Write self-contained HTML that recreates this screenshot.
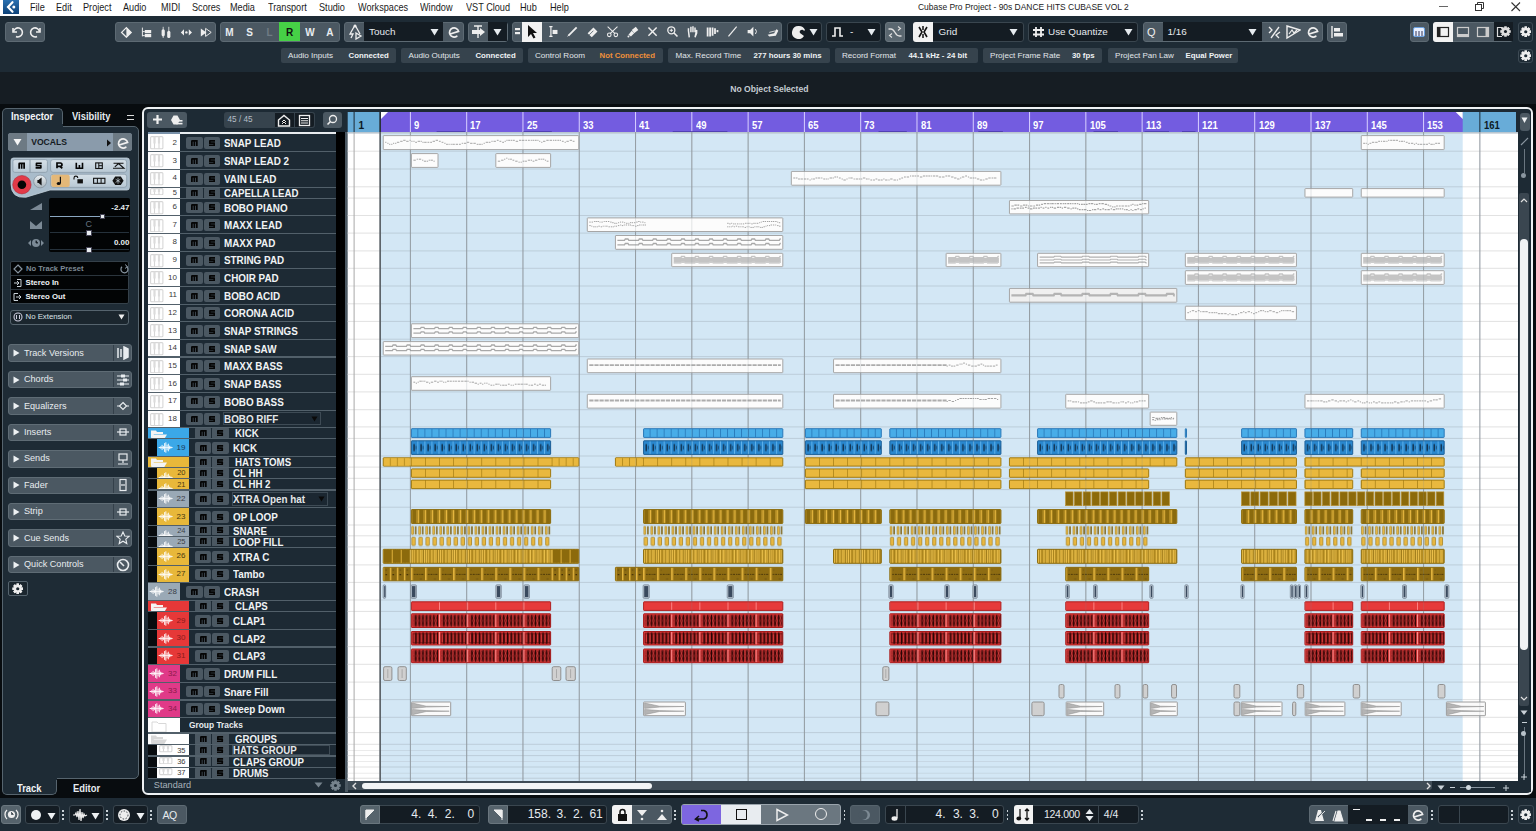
<!DOCTYPE html>
<html><head><meta charset="utf-8"><style>
html,body{margin:0;padding:0}
body{width:1536px;height:831px;overflow:hidden;position:relative;background:#080c0f;font-family:"Liberation Sans",sans-serif}
body div{position:absolute;box-sizing:border-box}
</style></head><body>
<div style="left:0.00px;top:0.00px;width:1536.00px;height:16.00px;background:#fff"></div>
<div style="left:3.00px;top:0.00px;width:15.50px;height:14.00px;background:linear-gradient(#2a70b0,#0e4278)"></div>
<svg style="position:absolute;left:3.00px;top:0.00px;" width="16.00" height="14.00" viewBox="0 0 16 14"><path d="M9.5 2.2 L5 7 L9.5 11.8" stroke="#fff" stroke-width="2.2" fill="none" stroke-linecap="round"/><circle cx="10.8" cy="7" r="1.5" fill="#fff"/></svg>
<div style="left:30.00px;top:1.70px;font-size:10.5px;line-height:1;color:#1a1a1a;white-space:pre;transform:scaleX(0.87);transform-origin:0 0">File</div>
<div style="left:56.00px;top:1.70px;font-size:10.5px;line-height:1;color:#1a1a1a;white-space:pre;transform:scaleX(0.87);transform-origin:0 0">Edit</div>
<div style="left:83.00px;top:1.70px;font-size:10.5px;line-height:1;color:#1a1a1a;white-space:pre;transform:scaleX(0.87);transform-origin:0 0">Project</div>
<div style="left:123.00px;top:1.70px;font-size:10.5px;line-height:1;color:#1a1a1a;white-space:pre;transform:scaleX(0.87);transform-origin:0 0">Audio</div>
<div style="left:160.50px;top:1.70px;font-size:10.5px;line-height:1;color:#1a1a1a;white-space:pre;transform:scaleX(0.87);transform-origin:0 0">MIDI</div>
<div style="left:191.50px;top:1.70px;font-size:10.5px;line-height:1;color:#1a1a1a;white-space:pre;transform:scaleX(0.87);transform-origin:0 0">Scores</div>
<div style="left:230.00px;top:1.70px;font-size:10.5px;line-height:1;color:#1a1a1a;white-space:pre;transform:scaleX(0.87);transform-origin:0 0">Media</div>
<div style="left:268.00px;top:1.70px;font-size:10.5px;line-height:1;color:#1a1a1a;white-space:pre;transform:scaleX(0.87);transform-origin:0 0">Transport</div>
<div style="left:318.50px;top:1.70px;font-size:10.5px;line-height:1;color:#1a1a1a;white-space:pre;transform:scaleX(0.87);transform-origin:0 0">Studio</div>
<div style="left:357.50px;top:1.70px;font-size:10.5px;line-height:1;color:#1a1a1a;white-space:pre;transform:scaleX(0.87);transform-origin:0 0">Workspaces</div>
<div style="left:419.50px;top:1.70px;font-size:10.5px;line-height:1;color:#1a1a1a;white-space:pre;transform:scaleX(0.87);transform-origin:0 0">Window</div>
<div style="left:465.50px;top:1.70px;font-size:10.5px;line-height:1;color:#1a1a1a;white-space:pre;transform:scaleX(0.87);transform-origin:0 0">VST Cloud</div>
<div style="left:520.00px;top:1.70px;font-size:10.5px;line-height:1;color:#1a1a1a;white-space:pre;transform:scaleX(0.87);transform-origin:0 0">Hub</div>
<div style="left:549.50px;top:1.70px;font-size:10.5px;line-height:1;color:#1a1a1a;white-space:pre;transform:scaleX(0.87);transform-origin:0 0">Help</div>
<div style="left:917.50px;top:2.30px;font-size:9.4px;line-height:1;color:#1a1a1a;white-space:pre;transform:scaleX(0.9);transform-origin:0 0">Cubase Pro Project - 90s DANCE HITS CUBASE VOL 2</div>
<div style="left:1439.00px;top:5.50px;width:8.50px;height:1.20px;background:#666"></div>
<svg style="position:absolute;left:1474.00px;top:1.00px;" width="11.00" height="11.00" viewBox="0 0 11 11"><rect x="1.5" y="3.5" width="6" height="6" fill="none" stroke="#333"/><path d="M3.5 3.5 V1.5 H9.5 V7.5 H7.5" fill="none" stroke="#333"/></svg>
<svg style="position:absolute;left:1510.00px;top:1.00px;" width="12.00" height="12.00" viewBox="0 0 12 12"><path d="M1.5 1.5 L10 10 M10 1.5 L1.5 10" stroke="#333" stroke-width="1.1"/></svg>
<div style="left:0.00px;top:16.00px;width:1536.00px;height:56.20px;background:#1e2b35"></div>
<div style="left:0.00px;top:72.20px;width:1536.00px;height:31.80px;background:#161d23"></div>
<div style="left:0.00px;top:104.00px;width:1536.00px;height:694.00px;background:#080c0f"></div>
<div style="left:0.00px;top:797.80px;width:1536.00px;height:33.20px;background:#1e2b35"></div>
<div style="left:730.20px;top:85.30px;font-size:8.6px;line-height:1;color:#c5ccd2;font-weight:bold;white-space:pre;">No Object Selected</div>
<div style="left:5.00px;top:21.80px;width:39.80px;height:19.90px;background:#4b5862;border-radius:3px;box-sizing:border-box;border:1px solid #5d6a73"></div>
<svg style="position:absolute;left:10.00px;top:25.00px;" width="14.00" height="14.00" viewBox="0 0 14 14"><path d="M3 3 V7 H7" stroke="#eee" stroke-width="1.6" fill="none"/><path d="M3.5 6.5 A4.5 4.5 0 1 1 6 11.5" stroke="#eee" stroke-width="1.6" fill="none"/></svg>
<svg style="position:absolute;left:29.00px;top:25.00px;" width="14.00" height="14.00" viewBox="0 0 14 14"><path d="M11 3 V7 H7" stroke="#eee" stroke-width="1.6" fill="none"/><path d="M10.5 6.5 A4.5 4.5 0 1 0 8 11.5" stroke="#eee" stroke-width="1.6" fill="none"/></svg>
<div style="left:115.20px;top:21.80px;width:100.40px;height:19.90px;background:#4b5862;border-radius:3px;box-sizing:border-box;border:1px solid #5d6a73"></div>
<svg style="position:absolute;left:120.00px;top:25.50px;" width="12.80" height="12.80" viewBox="0 0 16 16"><path d="M8 2 L14 8 L8 14 L2 8 Z" stroke="#eee" stroke-width="1.6" fill="none"/><path d="M8 2 L14 8 L8 14 Z" fill="#eee"/></svg>
<svg style="position:absolute;left:140.00px;top:25.50px;" width="12.80" height="12.80" viewBox="0 0 16 16"><path d="M3 2 V13 M3 7 H6 M3 12 H6" stroke="#eee" stroke-width="1.2"/><rect x="6" y="5" width="8" height="4" fill="#eee"/><rect x="6" y="10" width="8" height="4" fill="#eee"/></svg>
<svg style="position:absolute;left:160.00px;top:25.50px;" width="12.80" height="12.80" viewBox="0 0 16 16"><rect x="2" y="4" width="4" height="9" rx="2" fill="#eee"/><rect x="9" y="6" width="4" height="9" rx="2" fill="#eee"/><path d="M4 1 V15 M11 1 V15" stroke="#eee" stroke-width="1"/></svg>
<svg style="position:absolute;left:180.00px;top:25.50px;" width="12.80" height="12.80" viewBox="0 0 16 16"><path d="M1 8 L5 4 V12 Z M15 8 L11 4 V12 Z" fill="#eee"/><circle cx="8" cy="8" r="1.5" fill="#eee"/></svg>
<svg style="position:absolute;left:199.50px;top:25.50px;" width="12.80" height="12.80" viewBox="0 0 16 16"><path d="M1 3 L8 8 L1 13 Z" fill="#eee"/><path d="M7 3 L14 8 L7 13 Z" stroke="#eee" stroke-width="1.2" fill="none"/></svg>
<div style="left:219.50px;top:21.80px;width:120.20px;height:19.90px;background:#4b5862;border-radius:3px;box-sizing:border-box;border:1px solid #5d6a73"></div>
<div style="left:279.40px;top:22.30px;width:20.30px;height:19.00px;background:#46d046"></div>
<div style="left:225.00px;top:27.50px;font-size:10px;line-height:1;color:#e8edf0;font-weight:bold;white-space:pre;width:9px;text-align:center">M</div>
<div style="left:245.05px;top:27.50px;font-size:10px;line-height:1;color:#e8edf0;font-weight:bold;white-space:pre;width:9px;text-align:center">S</div>
<div style="left:265.10px;top:27.50px;font-size:10px;line-height:1;color:#6f7b84;font-weight:bold;white-space:pre;width:9px;text-align:center">L</div>
<div style="left:285.15px;top:27.50px;font-size:10px;line-height:1;color:#111;font-weight:bold;white-space:pre;width:9px;text-align:center">R</div>
<div style="left:305.20px;top:27.50px;font-size:10px;line-height:1;color:#e8edf0;font-weight:bold;white-space:pre;width:9px;text-align:center">W</div>
<div style="left:325.25px;top:27.50px;font-size:10px;line-height:1;color:#e8edf0;font-weight:bold;white-space:pre;width:9px;text-align:center">A</div>
<div style="left:343.70px;top:21.80px;width:119.90px;height:19.90px;background:#4b5862;border-radius:3px;box-sizing:border-box;border:1px solid #5d6a73"></div>
<div style="left:364.00px;top:22.30px;width:79.00px;height:19.00px;background:#141c23"></div>
<svg style="position:absolute;left:347.00px;top:24.00px;" width="16.00" height="16.00" viewBox="0 0 16 16"><path d="M8 1 L3 10 H6 L4 14 M8 1 L13 10 M9 9 L14 12 L9 15 Z" stroke="#eee" stroke-width="1.3" fill="none"/><circle cx="8" cy="2" r="1.5" fill="#eee"/></svg>
<div style="left:369.10px;top:27.00px;font-size:9.9px;line-height:1;color:#e6ebef;white-space:pre;">Touch</div>
<svg style="position:absolute;left:430.00px;top:28.00px;" width="9.00" height="8.00" viewBox="0 0 9 8"><path d="M0.5 1 H8.5 L4.5 7.5 Z" fill="#e6ebef"/></svg>
<svg style="position:absolute;left:446.00px;top:24.00px;" width="16.00" height="16.00" viewBox="0 0 16 16"><path d="M4.2 10 L12.6 7.4 A4.6 4.6 0 1 0 10.8 12.2" stroke="#eee" stroke-width="1.7" fill="none" stroke-linecap="round"/></svg>
<div style="left:468.10px;top:21.80px;width:39.50px;height:19.90px;background:#4b5862;border-radius:3px;box-sizing:border-box;border:1px solid #5d6a73"></div>
<div style="left:488.00px;top:22.30px;width:19.00px;height:19.00px;background:#141c23"></div>
<svg style="position:absolute;left:470.00px;top:24.00px;" width="16.00" height="16.00" viewBox="0 0 16 16"><path d="M8 2 V14 M4 2 H12" stroke="#eee" stroke-width="1.4"/><rect x="2" y="6" width="8" height="4" fill="#eee"/><path d="M10 4 L15 8 L10 12 Z" fill="#eee"/></svg>
<svg style="position:absolute;left:493.00px;top:28.00px;" width="9.00" height="8.00" viewBox="0 0 9 8"><path d="M0.5 1 H8.5 L4.5 7.5 Z" fill="#e6ebef"/></svg>
<div style="left:512.10px;top:21.80px;width:270.40px;height:19.90px;background:#4b5862;border-radius:3px;box-sizing:border-box;border:1px solid #5d6a73"></div>
<div style="left:522.30px;top:22.30px;width:20.00px;height:19.40px;background:#f2f2f2"></div>
<svg style="position:absolute;left:514.00px;top:27.00px;" width="8.00" height="9.00" viewBox="0 0 8 9"><rect x="1" y="1" width="5" height="2.2" fill="#eee"/><rect x="1" y="5" width="5" height="2.2" fill="#eee"/></svg>
<svg style="position:absolute;left:526.00px;top:24.00px;" width="12.00" height="16.00" viewBox="0 0 12 16"><path d="M2 1 L2 13 L5 10 L7.5 14.5 L9.5 13.5 L7 9 L11 9 Z" fill="#111"/></svg>
<svg style="position:absolute;left:545.50px;top:25.20px;" width="13.12" height="13.12" viewBox="0 0 16 16"><path d="M4 2 H8 M6 2 V14 M4 14 H8" stroke="#eee" stroke-width="1.5"/><rect x="8" y="6" width="6" height="5" fill="#eee"/></svg>
<svg style="position:absolute;left:565.55px;top:25.20px;" width="13.12" height="13.12" viewBox="0 0 16 16"><path d="M3 13 L13 3" stroke="#eee" stroke-width="2.2"/><path d="M2 14 L3.5 12" stroke="#eee" stroke-width="1"/></svg>
<svg style="position:absolute;left:585.60px;top:25.20px;" width="13.12" height="13.12" viewBox="0 0 16 16"><path d="M2 10 L9 3 L14 8 L7 15 Z" fill="#eee"/><path d="M4 12 L9 7" stroke="#4b5862" stroke-width="1"/></svg>
<svg style="position:absolute;left:605.65px;top:25.20px;" width="13.12" height="13.12" viewBox="0 0 16 16"><circle cx="4" cy="12" r="2.2" stroke="#eee" stroke-width="1.3" fill="none"/><circle cx="12" cy="12" r="2.2" stroke="#eee" stroke-width="1.3" fill="none"/><path d="M2 2 L11 10.5 M14 2 L5 10.5" stroke="#eee" stroke-width="1.3"/></svg>
<svg style="position:absolute;left:625.70px;top:25.20px;" width="13.12" height="13.12" viewBox="0 0 16 16"><path d="M7 6 L12 2 L15 6 L10 10 Z" fill="#eee"/><path d="M3 12 L7 7 L10 10 L6 14 Z" fill="#eee"/><circle cx="3" cy="14" r="1.2" fill="#eee"/></svg>
<svg style="position:absolute;left:645.75px;top:25.20px;" width="13.12" height="13.12" viewBox="0 0 16 16"><path d="M3 3 L13 13 M13 3 L3 13" stroke="#eee" stroke-width="1.8"/></svg>
<svg style="position:absolute;left:665.80px;top:25.20px;" width="13.12" height="13.12" viewBox="0 0 16 16"><circle cx="6.5" cy="6.5" r="4.3" stroke="#eee" stroke-width="1.6" fill="none"/><path d="M9.5 9.5 L14 14" stroke="#eee" stroke-width="2"/><path d="M6.5 4.5 V8.5 M4.5 6.5 H8.5" stroke="#eee" stroke-width="1.2"/></svg>
<svg style="position:absolute;left:685.85px;top:25.20px;" width="13.12" height="13.12" viewBox="0 0 16 16"><path d="M4 15 L3 7 V4 M6 9 V2 M8.5 9 V1.5 M11 9 V3 M13 10 V6 L11 15 Z" stroke="#eee" stroke-width="1.8" fill="#eee"/></svg>
<svg style="position:absolute;left:705.90px;top:25.20px;" width="13.12" height="13.12" viewBox="0 0 16 16"><path d="M2 3 V14 M5 3 V14 M8 3 V13 M11 4 V11 M14 6 V9" stroke="#eee" stroke-width="2.2"/></svg>
<svg style="position:absolute;left:725.95px;top:25.20px;" width="13.12" height="13.12" viewBox="0 0 16 16"><path d="M3 14 L13 2" stroke="#eee" stroke-width="1.5"/></svg>
<svg style="position:absolute;left:746.00px;top:25.20px;" width="13.12" height="13.12" viewBox="0 0 16 16"><path d="M2 6 H5 L9 2 V14 L5 10 H2 Z" fill="#eee"/><path d="M11.5 5 Q14 8 11.5 11" stroke="#eee" stroke-width="1.2" fill="none"/></svg>
<svg style="position:absolute;left:766.05px;top:25.20px;" width="13.12" height="13.12" viewBox="0 0 16 16"><path d="M2 12 L10 10 L13 5 L15 7 L12 13 L4 14 Z" fill="#eee"/><path d="M4 9 L12 7" stroke="#eee" stroke-width="1"/></svg>
<div style="left:787.20px;top:21.80px;width:34.40px;height:19.90px;background:#141c23;border-radius:3px;box-sizing:border-box;border:1px solid #3a464f"></div>
<svg style="position:absolute;left:791.00px;top:25.00px;" width="16.00" height="14.00" viewBox="0 0 16 14"><path d="M8 1 A6.5 6.5 0 1 0 13 11 L9 8 A2 2 0 1 1 13 6 L14 5 A6.5 6.5 0 0 0 8 1 Z" fill="#eee"/></svg>
<svg style="position:absolute;left:809.00px;top:28.00px;" width="9.00" height="8.00" viewBox="0 0 9 8"><path d="M0.5 1 H8.5 L4.5 7.5 Z" fill="#e6ebef"/></svg>
<div style="left:826.40px;top:21.80px;width:54.50px;height:19.90px;background:#141c23;border-radius:3px;box-sizing:border-box;border:1px solid #3a464f"></div>
<svg style="position:absolute;left:831.00px;top:25.00px;" width="14.00" height="14.00" viewBox="0 0 14 14"><path d="M1 11 H4 V3 H9 V11 H12" stroke="#eee" stroke-width="1.6" fill="none"/></svg>
<div style="left:850.00px;top:27.00px;font-size:10px;line-height:1;color:#ddd;white-space:pre;">-</div>
<svg style="position:absolute;left:867.00px;top:28.00px;" width="9.00" height="8.00" viewBox="0 0 9 8"><path d="M0.5 1 H8.5 L4.5 7.5 Z" fill="#e6ebef"/></svg>
<div style="left:885.30px;top:21.80px;width:20.20px;height:19.90px;background:#5a6770;border-radius:3px;box-sizing:border-box;border:1px solid #6a767e"></div>
<svg style="position:absolute;left:887.00px;top:24.00px;" width="16.00" height="16.00" viewBox="0 0 16 16"><path d="M1.5 5 H4 Q6 5 8 8.5 Q10 12 12.5 12 H14.5" stroke="#e0e0e0" stroke-width="1.4" fill="none"/><path d="M5 9.5 L2.5 11.5 L5 13.5 M11 2.5 L13.5 4.5 L11 6.5" stroke="#e0e0e0" stroke-width="1.1" fill="none"/></svg>
<div style="left:913.40px;top:21.80px;width:110.20px;height:19.90px;background:#141c23;border-radius:3px;box-sizing:border-box;border:1px solid #3a464f"></div>
<div style="left:913.40px;top:21.80px;width:20.00px;height:19.90px;background:#f2f2f2;border-radius:3px 0 0 3px"></div>
<svg style="position:absolute;left:915.00px;top:24.00px;" width="16.00" height="16.00" viewBox="0 0 16 16"><path d="M4 3 L7 8 L4 13 M12 3 L9 8 L12 13" stroke="#111" stroke-width="1.6" fill="none"/><path d="M8 2 V6 M8 10 V14" stroke="#111" stroke-width="1.5"/></svg>
<div style="left:938.50px;top:27.00px;font-size:9.9px;line-height:1;color:#e6ebef;white-space:pre;">Grid</div>
<svg style="position:absolute;left:1009.00px;top:28.00px;" width="9.00" height="8.00" viewBox="0 0 9 8"><path d="M0.5 1 H8.5 L4.5 7.5 Z" fill="#e6ebef"/></svg>
<div style="left:1028.20px;top:21.80px;width:109.90px;height:19.90px;background:#141c23;border-radius:3px;box-sizing:border-box;border:1px solid #3a464f"></div>
<svg style="position:absolute;left:1032.00px;top:25.00px;" width="14.00" height="14.00" viewBox="0 0 14 14"><path d="M4 2 V12 M9 2 V12 M1 5 H12 M1 9.5 H12" stroke="#eee" stroke-width="1.8"/></svg>
<div style="left:1048.00px;top:27.00px;font-size:9.9px;line-height:1;color:#e6ebef;white-space:pre;">Use Quantize</div>
<svg style="position:absolute;left:1124.00px;top:28.00px;" width="9.00" height="8.00" viewBox="0 0 9 8"><path d="M0.5 1 H8.5 L4.5 7.5 Z" fill="#e6ebef"/></svg>
<div style="left:1142.70px;top:21.80px;width:179.90px;height:19.90px;background:#4b5862;border-radius:3px;box-sizing:border-box;border:1px solid #5d6a73"></div>
<div style="left:1163.00px;top:22.30px;width:99.00px;height:19.00px;background:#141c23"></div>
<div style="left:1147.00px;top:26.50px;font-size:11px;line-height:1;color:#eee;white-space:pre;">Q</div>
<div style="left:1167.50px;top:27.00px;font-size:9.9px;line-height:1;color:#e6ebef;white-space:pre;">1/16</div>
<svg style="position:absolute;left:1248.00px;top:28.00px;" width="9.00" height="8.00" viewBox="0 0 9 8"><path d="M0.5 1 H8.5 L4.5 7.5 Z" fill="#e6ebef"/></svg>
<svg style="position:absolute;left:1266.00px;top:24.00px;" width="16.00" height="16.00" viewBox="0 0 16 16"><path d="M3 3 L6 6 L3 9 M13 3 L5 14 M14 8 L10 11 L13 14" stroke="#eee" stroke-width="1.3" fill="none"/></svg>
<svg style="position:absolute;left:1285.00px;top:24.00px;" width="16.00" height="16.00" viewBox="0 0 16 16"><path d="M2 2 L15 6 L2 14 Z" stroke="#eee" stroke-width="1.4" fill="none"/><path d="M4 10 L7 6 L9 9 L12 6" stroke="#eee" stroke-width="1.2" fill="none"/></svg>
<svg style="position:absolute;left:1305.00px;top:24.00px;" width="16.00" height="16.00" viewBox="0 0 16 16"><path d="M4.2 10 L12.6 7.4 A4.6 4.6 0 1 0 10.8 12.2" stroke="#eee" stroke-width="1.7" fill="none" stroke-linecap="round"/></svg>
<div style="left:1327.30px;top:21.80px;width:19.50px;height:19.90px;background:#4b5862;border-radius:3px;box-sizing:border-box;border:1px solid #5d6a73"></div>
<svg style="position:absolute;left:1329.00px;top:24.00px;" width="16.00" height="16.00" viewBox="0 0 16 16"><path d="M3 2 V14" stroke="#eee" stroke-width="1.4"/><rect x="5" y="4" width="6" height="3.5" fill="#eee"/><rect x="5" y="9" width="9" height="3.5" fill="#eee"/></svg>
<div style="left:1409.60px;top:21.80px;width:19.70px;height:19.90px;background:#4b5862;border-radius:3px;box-sizing:border-box;border:1px solid #5d6a73"></div>
<svg style="position:absolute;left:1412.00px;top:25.00px;" width="14.00" height="14.00" viewBox="0 0 14 14"><rect x="1.5" y="2.5" width="11" height="9" rx="1.5" fill="#e8f0ff" stroke="#6aa0e0"/><path d="M4 6 V11 M7 6 V11 M10 6 V11" stroke="#335" stroke-width="1"/></svg>
<div style="left:1433.40px;top:21.80px;width:80.00px;height:19.90px;background:#4b5862;border-radius:3px;box-sizing:border-box;border:1px solid #5d6a73"></div>
<div style="left:1433.40px;top:21.80px;width:20.00px;height:19.90px;background:#f2f2f2;border-radius:3px 0 0 3px"></div>
<div style="left:1493.90px;top:22.30px;width:19.00px;height:19.00px;background:#141c23"></div>
<svg style="position:absolute;left:1436.00px;top:25.00px;" width="14.00" height="14.00" viewBox="0 0 14 14"><rect x="1.5" y="2.5" width="11" height="9" fill="none" stroke="#222" stroke-width="1.2"/><rect x="2" y="3" width="2.5" height="8" fill="#222"/></svg>
<svg style="position:absolute;left:1456.00px;top:25.00px;" width="14.00" height="14.00" viewBox="0 0 14 14"><rect x="1.5" y="2.5" width="11" height="9" fill="none" stroke="#ccc" stroke-width="1.2"/><rect x="2" y="9" width="10" height="2" fill="#ccc"/></svg>
<svg style="position:absolute;left:1476.00px;top:25.00px;" width="14.00" height="14.00" viewBox="0 0 14 14"><rect x="1.5" y="2.5" width="11" height="9" fill="none" stroke="#ccc" stroke-width="1.2"/><rect x="9.5" y="3" width="2.5" height="8" fill="#ccc"/></svg>
<svg style="position:absolute;left:1496.00px;top:25.00px;" width="14.00" height="14.00" viewBox="0 0 14 14"><path d="M6 2.5 H1.5 V11.5 H6" stroke="#ddd" stroke-width="1.2" fill="none"/></svg>
<svg style="position:absolute;left:1500.00px;top:26.00px;" width="11.00" height="11.00" viewBox="0 0 11 11"><g transform="translate(5.5,5.5)"><rect x="-1.2" y="-5.0" width="2.4" height="10" fill="#ddd" transform="rotate(0)"/><rect x="-1.2" y="-5.0" width="2.4" height="10" fill="#ddd" transform="rotate(45)"/><rect x="-1.2" y="-5.0" width="2.4" height="10" fill="#ddd" transform="rotate(90)"/><rect x="-1.2" y="-5.0" width="2.4" height="10" fill="#ddd" transform="rotate(135)"/><rect x="-1.2" y="-5.0" width="2.4" height="10" fill="#ddd" transform="rotate(180)"/><rect x="-1.2" y="-5.0" width="2.4" height="10" fill="#ddd" transform="rotate(225)"/><rect x="-1.2" y="-5.0" width="2.4" height="10" fill="#ddd" transform="rotate(270)"/><rect x="-1.2" y="-5.0" width="2.4" height="10" fill="#ddd" transform="rotate(315)"/><circle r="3.6300000000000003" fill="#ddd"/><circle r="1.54" fill="#141c23"/></g></svg>
<div style="left:1517.50px;top:21.80px;width:15.50px;height:19.90px;background:#1e2b35;border-radius:3px;box-sizing:border-box;border:1px solid #3d4a54"></div>
<svg style="position:absolute;left:1519.50px;top:25.80px;" width="11.50" height="11.50" viewBox="0 0 11.5 11.5"><g transform="translate(5.75,5.75)"><rect x="-1.2" y="-5.25" width="2.4" height="10.5" fill="#eee" transform="rotate(0)"/><rect x="-1.2" y="-5.25" width="2.4" height="10.5" fill="#eee" transform="rotate(45)"/><rect x="-1.2" y="-5.25" width="2.4" height="10.5" fill="#eee" transform="rotate(90)"/><rect x="-1.2" y="-5.25" width="2.4" height="10.5" fill="#eee" transform="rotate(135)"/><rect x="-1.2" y="-5.25" width="2.4" height="10.5" fill="#eee" transform="rotate(180)"/><rect x="-1.2" y="-5.25" width="2.4" height="10.5" fill="#eee" transform="rotate(225)"/><rect x="-1.2" y="-5.25" width="2.4" height="10.5" fill="#eee" transform="rotate(270)"/><rect x="-1.2" y="-5.25" width="2.4" height="10.5" fill="#eee" transform="rotate(315)"/><circle r="3.7950000000000004" fill="#eee"/><circle r="1.61" fill="#1e2b35"/></g></svg>
<div style="left:1517.50px;top:48.80px;width:15.50px;height:14.50px;background:#1e2b35;border-radius:3px;box-sizing:border-box;border:1px solid #3d4a54"></div>
<svg style="position:absolute;left:1519.50px;top:50.30px;" width="11.50" height="11.50" viewBox="0 0 11.5 11.5"><g transform="translate(5.75,5.75)"><rect x="-1.2" y="-5.25" width="2.4" height="10.5" fill="#eee" transform="rotate(0)"/><rect x="-1.2" y="-5.25" width="2.4" height="10.5" fill="#eee" transform="rotate(45)"/><rect x="-1.2" y="-5.25" width="2.4" height="10.5" fill="#eee" transform="rotate(90)"/><rect x="-1.2" y="-5.25" width="2.4" height="10.5" fill="#eee" transform="rotate(135)"/><rect x="-1.2" y="-5.25" width="2.4" height="10.5" fill="#eee" transform="rotate(180)"/><rect x="-1.2" y="-5.25" width="2.4" height="10.5" fill="#eee" transform="rotate(225)"/><rect x="-1.2" y="-5.25" width="2.4" height="10.5" fill="#eee" transform="rotate(270)"/><rect x="-1.2" y="-5.25" width="2.4" height="10.5" fill="#eee" transform="rotate(315)"/><circle r="3.7950000000000004" fill="#eee"/><circle r="1.61" fill="#1e2b35"/></g></svg>
<div style="left:281.10px;top:48.00px;width:115.30px;height:15.20px;background:#36434d;border-radius:2px"></div>
<div style="left:288.00px;top:51.60px;font-size:8.1px;line-height:1;color:#e2e7eb;white-space:pre;">Audio Inputs</div>
<div style="left:348.50px;top:51.80px;font-size:7.8px;line-height:1;color:#f0f3f5;font-weight:bold;white-space:pre;">Connected</div>
<div style="left:401.30px;top:48.00px;width:121.50px;height:15.20px;background:#36434d;border-radius:2px"></div>
<div style="left:408.60px;top:51.60px;font-size:8.1px;line-height:1;color:#e2e7eb;white-space:pre;">Audio Outputs</div>
<div style="left:475.40px;top:51.80px;font-size:7.8px;line-height:1;color:#f0f3f5;font-weight:bold;white-space:pre;">Connected</div>
<div style="left:527.90px;top:48.00px;width:135.20px;height:15.20px;background:#36434d;border-radius:2px"></div>
<div style="left:535.00px;top:51.60px;font-size:8.1px;line-height:1;color:#e2e7eb;white-space:pre;">Control Room</div>
<div style="left:599.50px;top:51.80px;font-size:7.8px;line-height:1;color:#f0903a;font-weight:bold;white-space:pre;">Not Connected</div>
<div style="left:668.20px;top:48.00px;width:161.80px;height:15.20px;background:#36434d;border-radius:2px"></div>
<div style="left:675.50px;top:51.60px;font-size:8.1px;line-height:1;color:#e2e7eb;white-space:pre;">Max. Record Time</div>
<div style="left:753.50px;top:51.80px;font-size:7.8px;line-height:1;color:#f0f3f5;font-weight:bold;white-space:pre;">277 hours 30 mins</div>
<div style="left:834.90px;top:48.00px;width:143.00px;height:15.20px;background:#36434d;border-radius:2px"></div>
<div style="left:842.00px;top:51.60px;font-size:8.1px;line-height:1;color:#e2e7eb;white-space:pre;">Record Format</div>
<div style="left:908.50px;top:51.80px;font-size:7.8px;line-height:1;color:#f0f3f5;font-weight:bold;white-space:pre;">44.1 kHz - 24 bit</div>
<div style="left:983.00px;top:48.00px;width:119.10px;height:15.20px;background:#36434d;border-radius:2px"></div>
<div style="left:990.00px;top:51.60px;font-size:8.1px;line-height:1;color:#e2e7eb;white-space:pre;">Project Frame Rate</div>
<div style="left:1072.00px;top:51.80px;font-size:7.8px;line-height:1;color:#f0f3f5;font-weight:bold;white-space:pre;">30 fps</div>
<div style="left:1107.50px;top:48.00px;width:130.90px;height:15.20px;background:#36434d;border-radius:2px"></div>
<div style="left:1115.00px;top:51.60px;font-size:8.1px;line-height:1;color:#e2e7eb;white-space:pre;">Project Pan Law</div>
<div style="left:1185.50px;top:51.80px;font-size:7.8px;line-height:1;color:#f0f3f5;font-weight:bold;white-space:pre;">Equal Power</div>
<div style="left:1.60px;top:107.60px;width:61.50px;height:20.00px;background:#1e2b35;border:1px solid #56646e;border-bottom:none;border-radius:5px 5px 0 0"></div>
<div style="left:1.60px;top:125.80px;width:137.00px;height:653.20px;background:#1e2b35;border:1px solid #56646e;border-radius:0 5px 5px 5px"></div>
<div style="left:2.60px;top:124.00px;width:60.50px;height:4.00px;background:#1e2b35"></div>
<div style="left:1.60px;top:770.00px;width:55.70px;height:25.20px;background:#1e2b35;border:1px solid #56646e;border-top:none;border-radius:0 0 5px 5px"></div>
<div style="left:2.60px;top:766.00px;width:54.70px;height:14.00px;background:#1e2b35"></div>
<div style="left:10.70px;top:111.60px;font-size:10.2px;line-height:1;color:#f2f5f7;font-weight:bold;white-space:pre;transform:scaleX(0.92);transform-origin:0 0">Inspector</div>
<div style="left:72.20px;top:111.60px;font-size:10.2px;line-height:1;color:#e6ebef;font-weight:bold;white-space:pre;transform:scaleX(0.92);transform-origin:0 0">Visibility</div>
<div style="left:127.00px;top:114.50px;width:7.40px;height:1.60px;background:#ddd"></div>
<div style="left:127.00px;top:118.50px;width:7.40px;height:1.60px;background:#ddd"></div>
<div style="left:17.00px;top:783.50px;font-size:10.2px;line-height:1;color:#f2f5f7;font-weight:bold;white-space:pre;transform:scaleX(0.92);transform-origin:0 0">Track</div>
<div style="left:73.00px;top:783.50px;font-size:10.2px;line-height:1;color:#e6ebef;font-weight:bold;white-space:pre;transform:scaleX(0.92);transform-origin:0 0">Editor</div>
<div style="left:8.10px;top:133.20px;width:124.20px;height:18.20px;background:#8a9bab;border-radius:3px"></div>
<div style="left:8.10px;top:133.20px;width:19.30px;height:18.20px;background:#6d7a84;border-radius:3px 0 0 3px"></div>
<div style="left:112.70px;top:133.20px;width:19.60px;height:18.20px;background:#6d7a84;border-radius:0 3px 3px 0"></div>
<svg style="position:absolute;left:13.00px;top:138.00px;" width="9.00" height="8.00" viewBox="0 0 9 8"><path d="M0.5 1 H8.5 L4.5 7.5 Z" fill="#f5f5f5"/></svg>
<div style="left:31.20px;top:137.80px;font-size:8.6px;line-height:1;color:#14191d;font-weight:bold;white-space:pre;">VOCALS</div>
<svg style="position:absolute;left:106.00px;top:138.50px;" width="6.00" height="8.00" viewBox="0 0 6 8"><path d="M1 0.5 L5 4 L1 7.5 Z" fill="#111"/></svg>
<svg style="position:absolute;left:114.50px;top:134.50px;" width="16.00" height="16.00" viewBox="0 0 16 16"><path d="M4.2 10 L12.6 7.4 A4.6 4.6 0 1 0 10.8 12.2" stroke="#f0f0f0" stroke-width="1.7" fill="none" stroke-linecap="round"/></svg>
<svg style="position:absolute;left:0;top:0" width="140" height="200" viewBox="0 0 140 200"><defs><linearGradient id="bg1" x1="0" y1="0" x2="0" y2="1"><stop offset="0" stop-color="#d6e0e8"/><stop offset="1" stop-color="#b8c8d4"/></linearGradient><radialGradient id="rg1"><stop offset="0.45" stop-color="#000"/><stop offset="0.5" stop-color="#e83848"/><stop offset="1" stop-color="#d83040"/></radialGradient><linearGradient id="sp1" x1="0" y1="0" x2="0" y2="1"><stop offset="0" stop-color="#e8eef2"/><stop offset="1" stop-color="#a8b4bc"/></linearGradient></defs><path d="M13.5 158 H127 Q129.4 158 129.4 160.5 V187.5 Q129.4 190 127 190 H50 L26 197.2 Q11 198.5 11 184 V160.5 Q11 158 13.5 158 Z" fill="#a9bccb" stroke="#c4d2dc" stroke-width="0.8"/><rect x="12.9" y="159.6" width="34.5" height="12.8" rx="2" fill="url(#bg1)" stroke="#8a9caa" stroke-width="0.8"/><path d="M30 159.8 V172.2" stroke="#7f909d" stroke-width="0.9"/><rect x="50.6" y="159.6" width="76.1" height="12.8" rx="2.5" fill="url(#bg1)" stroke="#8a9caa" stroke-width="0.8"/><rect x="50.6" y="174.2" width="76.1" height="13.2" rx="2.5" fill="url(#bg1)" stroke="#8a9caa" stroke-width="0.8"/><rect x="51.3" y="174.7" width="18.4" height="12.2" rx="2" fill="#e4b878"/><circle cx="21.9" cy="184.7" r="9.2" fill="#e23a48" stroke="#b02838" stroke-width="0.6"/><circle cx="21.9" cy="184.7" r="4.3" fill="#050505"/><circle cx="40.1" cy="181.5" r="6.4" fill="url(#sp1)" stroke="#7f8d98" stroke-width="0.7"/><path d="M37.4 180 H38.6 L41.6 177.6 V185.4 L38.6 183 H37.4 Z" fill="#111"/><g transform="translate(18.3,162.6)"><path d="M0 6.1 V1.2 Q0 0 1.2 0 H6.7 V6.1 H4.95 V1.7 H4.2 V6.1 H2.5 V1.7 H1.75 V6.1 Z" fill="#050505"/></g><g transform="translate(35.6,162.6)"><path d="M6.1 0 H0.9 Q0 0 0 0.9 V3.4 Q0 3.9 0.6 3.9 H4.4 V4.4 H0 V6.1 H5.2 Q6.1 6.1 6.1 5.2 V2.9 Q6.1 2.3 5.5 2.3 H1.7 V1.7 H6.1 Z" fill="#050505"/></g><path d="M57 168.3 V163 H60.2 Q62 163 62 164.8 Q62 166.4 60.2 166.4 H57 M59.8 166.4 L62.3 168.3" stroke="#050505" stroke-width="1.7" fill="none"/><path d="M76.3 162.8 V168.3 H82.5 V162.8 M79.4 165 V168" stroke="#050505" stroke-width="1.6" fill="none"/><rect x="95.7" y="162.9" width="6.6" height="5.6" fill="none" stroke="#111" stroke-width="1.1"/><path d="M98.8 162.9 V168.5 M98.8 165.7 H102.3" stroke="#111" stroke-width="1"/><path d="M113.5 163.2 H123.5 M113 168.3 H124 L118.5 163.5 L114.8 166.8" stroke="#111" stroke-width="1.1" fill="none"/><path d="M60.4 176.8 V183.3" stroke="#111" stroke-width="1.2"/><ellipse cx="58.7" cy="183.6" rx="2" ry="1.5" fill="#111"/><path d="M74 179.4 V178 A1.9 1.9 0 0 1 77.8 178" stroke="#111" stroke-width="1.1" fill="none"/><rect x="77.4" y="179.2" width="5.5" height="4.2" fill="#111"/><rect x="93.6" y="178.3" width="11.3" height="5" fill="none" stroke="#111" stroke-width="1.1"/><path d="M97.4 178.3 V183.3 M101.1 178.3 V183.3" stroke="#111" stroke-width="1"/><path d="M115.2 176.6 H120.8 L123.6 180.8 L120.8 185 H115.2 L112.4 180.8 Z" fill="#111"/><path d="M118 177.8 V183.8 M115.6 179.2 L120.4 182.4 M120.4 179.2 L115.6 182.4" stroke="#c8d4dc" stroke-width="0.7"/></svg>
<div style="left:49.10px;top:198.20px;width:80.90px;height:53.50px;background:#020405;border-radius:2px"></div>
<div style="right:1406.50px;top:204.20px;font-size:8px;line-height:1;color:#e8ecef;font-weight:bold;white-space:pre;text-align:right;">-2.47</div>
<div style="left:50.00px;top:215.80px;width:52.00px;height:1.40px;background:#8aa6c0"></div>
<div style="left:102.00px;top:215.80px;width:27.00px;height:1.20px;background:#25313b"></div>
<div style="left:99.80px;top:213.50px;width:5.50px;height:5.50px;background:#e8edf0;border:1px solid #445"></div>
<div style="left:85.50px;top:220.20px;font-size:9px;line-height:1;color:#657380;white-space:pre;">C</div>
<div style="left:50.00px;top:232.30px;width:79.00px;height:1.20px;background:#25313b"></div>
<div style="left:50.00px;top:249.30px;width:79.00px;height:1.20px;background:#25313b"></div>
<div style="left:86.30px;top:230.00px;width:5.50px;height:5.50px;background:#e8edf0;border:1px solid #445"></div>
<div style="right:1406.50px;top:238.90px;font-size:8px;line-height:1;color:#e8ecef;font-weight:bold;white-space:pre;text-align:right;">0.00</div>
<div style="left:86.30px;top:247.00px;width:5.50px;height:5.50px;background:#e8edf0;border:1px solid #445"></div>
<svg style="position:absolute;left:29.00px;top:202.00px;" width="14.00" height="9.00" viewBox="0 0 14 9"><path d="M1 8 L13 1 V8 Z" fill="#7c8a96"/></svg>
<svg style="position:absolute;left:29.00px;top:220.00px;" width="14.00" height="10.00" viewBox="0 0 14 10"><path d="M1 1 L7 6 L13 1 V9 H1 Z" fill="#7c8a96"/></svg>
<svg style="position:absolute;left:27.00px;top:238.00px;" width="18.00" height="10.00" viewBox="0 0 18 10"><path d="M1 5 L4 2 V8 Z M17 5 L14 2 V8 Z" fill="#7c8a96"/><circle cx="9" cy="5" r="4" fill="#7c8a96"/><path d="M9 2.5 V5 H11" stroke="#1e2b35" stroke-width="1"/></svg>
<div style="left:10.10px;top:261.20px;width:119.30px;height:42.50px;background:#020405;border:1px solid #35414a;border-radius:2px"></div>
<div style="left:10.60px;top:275.30px;width:118.30px;height:1.00px;background:#2b353d"></div>
<div style="left:10.60px;top:289.40px;width:118.30px;height:1.00px;background:#2b353d"></div>
<svg style="position:absolute;left:13.00px;top:263.50px;" width="10.00" height="10.00" viewBox="0 0 10 10"><path d="M5 1 L9 5 L5 9 L1 5 Z" stroke="#8794a0" stroke-width="1.2" fill="none"/></svg>
<div style="left:26.00px;top:264.80px;font-size:7.6px;line-height:1;color:#7d8a95;font-weight:bold;white-space:pre;">No Track Preset</div>
<svg style="position:absolute;left:119.00px;top:263.50px;" width="10.00" height="10.00" viewBox="0 0 10 10"><path d="M7.5 2.5 A3.5 3.5 0 1 1 3 2.8" stroke="#8794a0" stroke-width="1.2" fill="none"/><path d="M6 0.5 L8.5 2.5 L6 4.5" stroke="#8794a0" stroke-width="1" fill="none"/></svg>
<svg style="position:absolute;left:13.00px;top:277.50px;" width="9.00" height="10.00" viewBox="0 0 9 10"><path d="M4 1.5 H8 V8.5 H4 M1 5 H6 M4 3 L6 5 L4 7" stroke="#c8d0d6" stroke-width="1" fill="none"/></svg>
<div style="left:25.50px;top:278.80px;font-size:7.8px;line-height:1;color:#f0f3f5;font-weight:bold;white-space:pre;">Stereo In</div>
<svg style="position:absolute;left:13.00px;top:291.50px;" width="9.00" height="10.00" viewBox="0 0 9 10"><path d="M5 1.5 H1 V8.5 H5 M3 5 H8 M6 3 L8 5 L6 7" stroke="#c8d0d6" stroke-width="1" fill="none"/></svg>
<div style="left:25.50px;top:292.80px;font-size:7.8px;line-height:1;color:#f0f3f5;font-weight:bold;white-space:pre;">Stereo Out</div>
<div style="left:10.10px;top:309.50px;width:118.50px;height:15.00px;background:#1b262e;border:1px solid #56646e;border-radius:3px"></div>
<svg style="position:absolute;left:13.00px;top:312.00px;" width="10.00" height="10.00" viewBox="0 0 10 10"><circle cx="5" cy="5" r="4" stroke="#ccd" stroke-width="1.1" fill="none"/><path d="M3.5 3 V7 M6.5 3 V7" stroke="#ccd" stroke-width="1"/></svg>
<div style="left:25.50px;top:313.30px;font-size:7.8px;line-height:1;color:#dde3e8;white-space:pre;">No Extension</div>
<svg style="position:absolute;left:118.00px;top:314.00px;" width="7.00" height="6.00" viewBox="0 0 7 6"><path d="M0.5 0.5 H6.5 L3.5 5.5 Z" fill="#eee"/></svg>
<div style="left:8.10px;top:344.40px;width:124.20px;height:17.50px;background:#4b5862;border:1px solid #5f6c75;border-radius:3px"></div>
<div style="left:113.30px;top:345.40px;width:1.00px;height:15.50px;background:#34404a"></div>
<svg style="position:absolute;left:13.00px;top:349.20px;" width="7.00" height="8.00" viewBox="0 0 7 8"><path d="M0.5 0.5 L6.5 4 L0.5 7.5 Z" fill="#eef1f3"/></svg>
<div style="left:24.00px;top:348.70px;font-size:9.1px;line-height:1;color:#e8ecef;white-space:pre;">Track Versions</div>
<svg style="position:absolute;left:115.50px;top:346.20px;" width="14.00" height="14.00" viewBox="0 0 14 14"><path d="M2 2 V12 M5 3 V11 M8 1 L12 3 V11 L8 13 Z" stroke="#e8ecef" stroke-width="1.5" fill="#e8ecef"/></svg>
<div style="left:8.10px;top:370.82px;width:124.20px;height:17.50px;background:#4b5862;border:1px solid #5f6c75;border-radius:3px"></div>
<div style="left:113.30px;top:371.82px;width:1.00px;height:15.50px;background:#34404a"></div>
<svg style="position:absolute;left:13.00px;top:375.62px;" width="7.00" height="8.00" viewBox="0 0 7 8"><path d="M0.5 0.5 L6.5 4 L0.5 7.5 Z" fill="#eef1f3"/></svg>
<div style="left:24.00px;top:375.12px;font-size:9.1px;line-height:1;color:#e8ecef;white-space:pre;">Chords</div>
<svg style="position:absolute;left:115.50px;top:372.62px;" width="14.00" height="14.00" viewBox="0 0 14 14"><path d="M1 3 H13 M1 7 H13 M1 11 H13" stroke="#e8ecef" stroke-width="1.2"/><rect x="5" y="1.5" width="4" height="3" fill="#e8ecef"/><rect x="7" y="5.5" width="4" height="3" fill="#e8ecef"/><rect x="4" y="9.5" width="4" height="3" fill="#e8ecef"/></svg>
<div style="left:8.10px;top:397.24px;width:124.20px;height:17.50px;background:#4b5862;border:1px solid #5f6c75;border-radius:3px"></div>
<div style="left:113.30px;top:398.24px;width:1.00px;height:15.50px;background:#34404a"></div>
<svg style="position:absolute;left:13.00px;top:402.04px;" width="7.00" height="8.00" viewBox="0 0 7 8"><path d="M0.5 0.5 L6.5 4 L0.5 7.5 Z" fill="#eef1f3"/></svg>
<div style="left:24.00px;top:401.54px;font-size:9.1px;line-height:1;color:#e8ecef;white-space:pre;">Equalizers</div>
<svg style="position:absolute;left:115.50px;top:399.04px;" width="14.00" height="14.00" viewBox="0 0 14 14"><path d="M1 7 H3.5 M10.5 7 H13" stroke="#e8ecef" stroke-width="1.2"/><path d="M7 3.5 L10.5 7 L7 10.5 L3.5 7 Z" stroke="#e8ecef" stroke-width="1.2" fill="none"/></svg>
<div style="left:8.10px;top:423.66px;width:124.20px;height:17.50px;background:#4b5862;border:1px solid #5f6c75;border-radius:3px"></div>
<div style="left:113.30px;top:424.66px;width:1.00px;height:15.50px;background:#34404a"></div>
<svg style="position:absolute;left:13.00px;top:428.46px;" width="7.00" height="8.00" viewBox="0 0 7 8"><path d="M0.5 0.5 L6.5 4 L0.5 7.5 Z" fill="#eef1f3"/></svg>
<div style="left:24.00px;top:427.96px;font-size:9.1px;line-height:1;color:#e8ecef;white-space:pre;">Inserts</div>
<svg style="position:absolute;left:115.50px;top:425.46px;" width="14.00" height="14.00" viewBox="0 0 14 14"><path d="M1 7 H13" stroke="#e8ecef" stroke-width="1.2"/><rect x="4" y="4" width="6" height="6" stroke="#e8ecef" stroke-width="1.2" fill="none"/></svg>
<div style="left:8.10px;top:450.08px;width:124.20px;height:17.50px;background:#4b5862;border:1px solid #5f6c75;border-radius:3px"></div>
<div style="left:113.30px;top:451.08px;width:1.00px;height:15.50px;background:#34404a"></div>
<svg style="position:absolute;left:13.00px;top:454.88px;" width="7.00" height="8.00" viewBox="0 0 7 8"><path d="M0.5 0.5 L6.5 4 L0.5 7.5 Z" fill="#eef1f3"/></svg>
<div style="left:24.00px;top:454.38px;font-size:9.1px;line-height:1;color:#e8ecef;white-space:pre;">Sends</div>
<svg style="position:absolute;left:115.50px;top:451.88px;" width="14.00" height="14.00" viewBox="0 0 14 14"><rect x="3" y="2" width="8" height="6" stroke="#e8ecef" stroke-width="1.2" fill="none"/><path d="M7 8 V11 M2 12 H12" stroke="#e8ecef" stroke-width="1.2"/></svg>
<div style="left:8.10px;top:476.50px;width:124.20px;height:17.50px;background:#4b5862;border:1px solid #5f6c75;border-radius:3px"></div>
<div style="left:113.30px;top:477.50px;width:1.00px;height:15.50px;background:#34404a"></div>
<svg style="position:absolute;left:13.00px;top:481.30px;" width="7.00" height="8.00" viewBox="0 0 7 8"><path d="M0.5 0.5 L6.5 4 L0.5 7.5 Z" fill="#eef1f3"/></svg>
<div style="left:24.00px;top:480.80px;font-size:9.1px;line-height:1;color:#e8ecef;white-space:pre;">Fader</div>
<svg style="position:absolute;left:115.50px;top:478.30px;" width="14.00" height="14.00" viewBox="0 0 14 14"><rect x="4" y="1.5" width="6" height="11" stroke="#e8ecef" stroke-width="1.2" fill="none"/><path d="M5 7 H9" stroke="#e8ecef" stroke-width="1.2"/></svg>
<div style="left:8.10px;top:502.92px;width:124.20px;height:17.50px;background:#4b5862;border:1px solid #5f6c75;border-radius:3px"></div>
<div style="left:113.30px;top:503.92px;width:1.00px;height:15.50px;background:#34404a"></div>
<svg style="position:absolute;left:13.00px;top:507.72px;" width="7.00" height="8.00" viewBox="0 0 7 8"><path d="M0.5 0.5 L6.5 4 L0.5 7.5 Z" fill="#eef1f3"/></svg>
<div style="left:24.00px;top:507.22px;font-size:9.1px;line-height:1;color:#e8ecef;white-space:pre;">Strip</div>
<svg style="position:absolute;left:115.50px;top:504.72px;" width="14.00" height="14.00" viewBox="0 0 14 14"><path d="M1 7 H13" stroke="#e8ecef" stroke-width="1.2"/><rect x="4" y="4" width="6" height="6" stroke="#e8ecef" stroke-width="1.2" fill="none"/></svg>
<div style="left:8.10px;top:529.34px;width:124.20px;height:17.50px;background:#4b5862;border:1px solid #5f6c75;border-radius:3px"></div>
<div style="left:113.30px;top:530.34px;width:1.00px;height:15.50px;background:#34404a"></div>
<svg style="position:absolute;left:13.00px;top:534.14px;" width="7.00" height="8.00" viewBox="0 0 7 8"><path d="M0.5 0.5 L6.5 4 L0.5 7.5 Z" fill="#eef1f3"/></svg>
<div style="left:24.00px;top:533.64px;font-size:9.1px;line-height:1;color:#e8ecef;white-space:pre;">Cue Sends</div>
<svg style="position:absolute;left:115.50px;top:531.14px;" width="14.00" height="14.00" viewBox="0 0 14 14"><path d="M7 1 L8.8 5 L13 5.3 L9.8 8.2 L10.8 12.5 L7 10.2 L3.2 12.5 L4.2 8.2 L1 5.3 L5.2 5 Z" stroke="#e8ecef" stroke-width="1.1" fill="none"/></svg>
<div style="left:8.10px;top:555.76px;width:124.20px;height:17.50px;background:#4b5862;border:1px solid #5f6c75;border-radius:3px"></div>
<div style="left:113.30px;top:556.76px;width:1.00px;height:15.50px;background:#34404a"></div>
<svg style="position:absolute;left:13.00px;top:560.56px;" width="7.00" height="8.00" viewBox="0 0 7 8"><path d="M0.5 0.5 L6.5 4 L0.5 7.5 Z" fill="#eef1f3"/></svg>
<div style="left:24.00px;top:560.06px;font-size:9.1px;line-height:1;color:#e8ecef;white-space:pre;">Quick Controls</div>
<svg style="position:absolute;left:115.50px;top:557.56px;" width="14.00" height="14.00" viewBox="0 0 14 14"><circle cx="7" cy="7" r="5.5" stroke="#e8ecef" stroke-width="1.6" fill="none"/><path d="M4 4 L8 8" stroke="#e8ecef" stroke-width="1.6"/></svg>
<div style="left:8.20px;top:581.20px;width:19.50px;height:14.70px;background:#1b262e;border:1px solid #56646e;border-radius:2px"></div>
<svg style="position:absolute;left:12.20px;top:582.80px;" width="11.50" height="11.50" viewBox="0 0 11.5 11.5"><g transform="translate(5.75,5.75)"><rect x="-1.2" y="-5.25" width="2.4" height="10.5" fill="#eee" transform="rotate(0)"/><rect x="-1.2" y="-5.25" width="2.4" height="10.5" fill="#eee" transform="rotate(45)"/><rect x="-1.2" y="-5.25" width="2.4" height="10.5" fill="#eee" transform="rotate(90)"/><rect x="-1.2" y="-5.25" width="2.4" height="10.5" fill="#eee" transform="rotate(135)"/><rect x="-1.2" y="-5.25" width="2.4" height="10.5" fill="#eee" transform="rotate(180)"/><rect x="-1.2" y="-5.25" width="2.4" height="10.5" fill="#eee" transform="rotate(225)"/><rect x="-1.2" y="-5.25" width="2.4" height="10.5" fill="#eee" transform="rotate(270)"/><rect x="-1.2" y="-5.25" width="2.4" height="10.5" fill="#eee" transform="rotate(315)"/><circle r="3.7950000000000004" fill="#eee"/><circle r="1.61" fill="#1b262e"/></g></svg>
<div style="left:142.40px;top:107.00px;width:1390.60px;height:688.20px;background:#1d2a34;border:2px solid #eef1f3;border-radius:6px"></div>
<div style="left:147.40px;top:112.10px;width:40.10px;height:15.50px;background:#4b5862;border-radius:3px"></div>
<svg style="position:absolute;left:152.00px;top:114.00px;" width="11.00" height="11.00" viewBox="0 0 11 11"><path d="M5.5 1 V10 M1 5.5 H10" stroke="#f0f0f0" stroke-width="2.2"/></svg>
<svg style="position:absolute;left:170.00px;top:114.00px;" width="14.00" height="12.00" viewBox="0 0 14 12"><path d="M1 6 L3.5 1.5 H7.5 L10 6 L7.5 10.5 H3.5 Z" fill="#eee"/><rect x="6.5" y="6" width="6" height="1.6" fill="#eee"/><rect x="6.5" y="8.8" width="6" height="1.6" fill="#eee"/></svg>
<div style="left:223.90px;top:112.10px;width:91.00px;height:15.50px;background:#36434d;border-radius:3px"></div>
<div style="left:274.00px;top:112.10px;width:41.00px;height:15.50px;background:#141c23;border:1px solid #36434d;border-radius:0 3px 3px 0"></div>
<div style="left:294.20px;top:112.60px;width:1.00px;height:14.50px;background:#36434d"></div>
<div style="left:227.50px;top:116.00px;font-size:8.2px;line-height:1;color:#b4bec6;white-space:pre;">45 / 45</div>
<svg style="position:absolute;left:277.00px;top:113.50px;" width="14.00" height="13.00" viewBox="0 0 14 13"><path d="M1.5 6 L7 1.5 L12.5 6 V12 H1.5 Z" stroke="#eee" stroke-width="1.4" fill="none"/><path d="M5 8 L7 6 L9 8 M5 10 L7 8 L9 10" stroke="#eee" stroke-width="1"/></svg>
<svg style="position:absolute;left:298.00px;top:113.50px;" width="13.00" height="13.00" viewBox="0 0 13 13"><rect x="1.5" y="1.5" width="10" height="10" stroke="#eee" stroke-width="1.3" fill="none"/><path d="M3 4.5 H10 M3 6.8 H10 M3 9 H10" stroke="#eee" stroke-width="1.1"/></svg>
<div style="left:322.70px;top:112.10px;width:19.80px;height:15.50px;background:#4b5862;border-radius:3px"></div>
<svg style="position:absolute;left:326.00px;top:114.00px;" width="12.00" height="12.00" viewBox="0 0 12 12"><circle cx="7" cy="5" r="3.5" stroke="#eee" stroke-width="1.3" fill="none"/><path d="M4.5 7.5 L1.5 10.5" stroke="#eee" stroke-width="1.6"/></svg>
<div style="left:147.80px;top:132.00px;width:32.40px;height:2.30px;background:#7a92aa"></div>
<div style="left:180.20px;top:132.00px;width:155.70px;height:2.30px;background:#e8ecef"></div>
<div style="left:335.90px;top:132.00px;width:9.30px;height:646.60px;background:#000"></div>
<div style="left:345.20px;top:132.00px;width:2.50px;height:660.00px;background:#4b5862"></div>
<div style="left:180.20px;top:133.60px;width:155.70px;height:18.00px;background:#1d2a34"></div>
<div style="left:147.80px;top:133.60px;width:32.40px;height:18.00px;background:#ffffff"></div>
<svg style="position:absolute;left:150.10px;top:136.20px;" width="15.00" height="13.80" viewBox="0 0 15 13.8"><rect x="0.6" y="0.6" width="12.3" height="12.20" rx="1" fill="#fff" stroke="#d6d6d6" stroke-width="1.1"/><path d="M4.50 0.6 V12.80 M9.00 0.6 V12.80" stroke="#d6d6d6" stroke-width="1.1"/><path d="M4.50 0.6 V7.42 M9.00 0.6 V7.42" stroke="#dcdcdc" stroke-width="2.2"/></svg>
<div style="right:1359.00px;top:138.60px;font-size:8px;line-height:1;color:#3a3a3a;white-space:pre;text-align:right;">2</div>
<div style="left:186.20px;top:136.80px;width:16.50px;height:12.20px;background:#4b5862;border-radius:2px"></div>
<div style="left:203.70px;top:136.80px;width:16.30px;height:12.20px;background:#4b5862;border-radius:2px"></div>
<svg style="position:absolute;left:191.10px;top:139.85px" width="7.20" height="6.60" viewBox="0 0 7.20 6.60"><path d="M0 6.1 V1.2 Q0 0 1.2 0 H6.7 V6.1 H4.95 V1.7 H4.2 V6.1 H2.5 V1.7 H1.75 V6.1 Z" fill="#050505"/></svg>
<svg style="position:absolute;left:208.80px;top:139.85px" width="6.60" height="6.60" viewBox="0 0 6.60 6.60"><path d="M6.1 0 H0.9 Q0 0 0 0.9 V3.4 Q0 3.9 0.6 3.9 H4.4 V4.4 H0 V6.1 H5.2 Q6.1 6.1 6.1 5.2 V2.9 Q6.1 2.3 5.5 2.3 H1.7 V1.7 H6.1 Z" fill="#050505"/></svg>
<div style="left:224.30px;top:139.00px;font-size:10.4px;line-height:1;color:#f0f3f5;font-weight:bold;white-space:pre;transform:scaleX(0.95);transform-origin:0 0">SNAP LEAD</div>
<div style="left:180.20px;top:151.60px;width:155.70px;height:17.80px;background:#1d2a34"></div>
<div style="left:147.80px;top:151.60px;width:32.40px;height:17.80px;background:#ffffff"></div>
<svg style="position:absolute;left:150.10px;top:154.20px;" width="15.00" height="13.80" viewBox="0 0 15 13.8"><rect x="0.6" y="0.6" width="12.3" height="12.20" rx="1" fill="#fff" stroke="#d6d6d6" stroke-width="1.1"/><path d="M4.50 0.6 V12.80 M9.00 0.6 V12.80" stroke="#d6d6d6" stroke-width="1.1"/><path d="M4.50 0.6 V7.42 M9.00 0.6 V7.42" stroke="#dcdcdc" stroke-width="2.2"/></svg>
<div style="right:1359.00px;top:156.50px;font-size:8px;line-height:1;color:#3a3a3a;white-space:pre;text-align:right;">3</div>
<div style="left:186.20px;top:154.80px;width:16.50px;height:12.00px;background:#4b5862;border-radius:2px"></div>
<div style="left:203.70px;top:154.80px;width:16.30px;height:12.00px;background:#4b5862;border-radius:2px"></div>
<svg style="position:absolute;left:191.10px;top:157.75px" width="7.20" height="6.60" viewBox="0 0 7.20 6.60"><path d="M0 6.1 V1.2 Q0 0 1.2 0 H6.7 V6.1 H4.95 V1.7 H4.2 V6.1 H2.5 V1.7 H1.75 V6.1 Z" fill="#050505"/></svg>
<svg style="position:absolute;left:208.80px;top:157.75px" width="6.60" height="6.60" viewBox="0 0 6.60 6.60"><path d="M6.1 0 H0.9 Q0 0 0 0.9 V3.4 Q0 3.9 0.6 3.9 H4.4 V4.4 H0 V6.1 H5.2 Q6.1 6.1 6.1 5.2 V2.9 Q6.1 2.3 5.5 2.3 H1.7 V1.7 H6.1 Z" fill="#050505"/></svg>
<div style="left:224.30px;top:156.90px;font-size:10.4px;line-height:1;color:#f0f3f5;font-weight:bold;white-space:pre;transform:scaleX(0.95);transform-origin:0 0">SNAP LEAD 2</div>
<div style="left:180.20px;top:169.40px;width:155.70px;height:17.80px;background:#1d2a34"></div>
<div style="left:147.80px;top:169.40px;width:32.40px;height:17.80px;background:#ffffff"></div>
<svg style="position:absolute;left:150.10px;top:172.00px;" width="15.00" height="13.80" viewBox="0 0 15 13.8"><rect x="0.6" y="0.6" width="12.3" height="12.20" rx="1" fill="#fff" stroke="#d6d6d6" stroke-width="1.1"/><path d="M4.50 0.6 V12.80 M9.00 0.6 V12.80" stroke="#d6d6d6" stroke-width="1.1"/><path d="M4.50 0.6 V7.42 M9.00 0.6 V7.42" stroke="#dcdcdc" stroke-width="2.2"/></svg>
<div style="right:1359.00px;top:174.30px;font-size:8px;line-height:1;color:#3a3a3a;white-space:pre;text-align:right;">4</div>
<div style="left:186.20px;top:172.60px;width:16.50px;height:12.00px;background:#4b5862;border-radius:2px"></div>
<div style="left:203.70px;top:172.60px;width:16.30px;height:12.00px;background:#4b5862;border-radius:2px"></div>
<svg style="position:absolute;left:191.10px;top:175.55px" width="7.20" height="6.60" viewBox="0 0 7.20 6.60"><path d="M0 6.1 V1.2 Q0 0 1.2 0 H6.7 V6.1 H4.95 V1.7 H4.2 V6.1 H2.5 V1.7 H1.75 V6.1 Z" fill="#050505"/></svg>
<svg style="position:absolute;left:208.80px;top:175.55px" width="6.60" height="6.60" viewBox="0 0 6.60 6.60"><path d="M6.1 0 H0.9 Q0 0 0 0.9 V3.4 Q0 3.9 0.6 3.9 H4.4 V4.4 H0 V6.1 H5.2 Q6.1 6.1 6.1 5.2 V2.9 Q6.1 2.3 5.5 2.3 H1.7 V1.7 H6.1 Z" fill="#050505"/></svg>
<div style="left:224.30px;top:174.70px;font-size:10.4px;line-height:1;color:#f0f3f5;font-weight:bold;white-space:pre;transform:scaleX(0.95);transform-origin:0 0">VAIN LEAD</div>
<div style="left:180.20px;top:187.20px;width:155.70px;height:11.30px;background:#1d2a34"></div>
<div style="left:147.80px;top:187.20px;width:32.40px;height:11.30px;background:#ffffff"></div>
<svg style="position:absolute;left:150.10px;top:187.80px;" width="15.00" height="7.70" viewBox="0 0 15 7.700000000000012"><rect x="0.6" y="0.6" width="12.3" height="6.10" rx="1" fill="#fff" stroke="#d6d6d6" stroke-width="1.1"/><path d="M4.50 0.6 V6.70 M9.00 0.6 V6.70" stroke="#d6d6d6" stroke-width="1.1"/><path d="M4.50 0.6 V3.89 M9.00 0.6 V3.89" stroke="#dcdcdc" stroke-width="2.2"/></svg>
<div style="right:1359.00px;top:189.10px;font-size:7.5px;line-height:1;color:#3a3a3a;white-space:pre;text-align:right;">5</div>
<div style="left:186.20px;top:187.50px;width:16.50px;height:10.10px;background:#4b5862;border-radius:0.5px"></div>
<div style="left:203.70px;top:187.50px;width:16.30px;height:10.10px;background:#4b5862;border-radius:0.5px"></div>
<svg style="position:absolute;left:191.10px;top:189.50px" width="7.20" height="6.60" viewBox="0 0 7.20 6.60"><path d="M0 6.1 V1.2 Q0 0 1.2 0 H6.7 V6.1 H4.95 V1.7 H4.2 V6.1 H2.5 V1.7 H1.75 V6.1 Z" fill="#050505"/></svg>
<svg style="position:absolute;left:208.80px;top:189.50px" width="6.60" height="6.60" viewBox="0 0 6.60 6.60"><path d="M6.1 0 H0.9 Q0 0 0 0.9 V3.4 Q0 3.9 0.6 3.9 H4.4 V4.4 H0 V6.1 H5.2 Q6.1 6.1 6.1 5.2 V2.9 Q6.1 2.3 5.5 2.3 H1.7 V1.7 H6.1 Z" fill="#050505"/></svg>
<div style="left:224.30px;top:188.85px;font-size:10.2px;line-height:1;color:#f0f3f5;font-weight:bold;white-space:pre;transform:scaleX(0.95);transform-origin:0 0">CAPELLA LEAD</div>
<div style="left:180.20px;top:198.50px;width:155.70px;height:17.40px;background:#1d2a34"></div>
<div style="left:147.80px;top:198.50px;width:32.40px;height:17.40px;background:#ffffff"></div>
<svg style="position:absolute;left:150.10px;top:201.10px;" width="15.00" height="13.80" viewBox="0 0 15 13.8"><rect x="0.6" y="0.6" width="12.3" height="12.20" rx="1" fill="#fff" stroke="#d6d6d6" stroke-width="1.1"/><path d="M4.50 0.6 V12.80 M9.00 0.6 V12.80" stroke="#d6d6d6" stroke-width="1.1"/><path d="M4.50 0.6 V7.42 M9.00 0.6 V7.42" stroke="#dcdcdc" stroke-width="2.2"/></svg>
<div style="right:1359.00px;top:203.20px;font-size:8px;line-height:1;color:#3a3a3a;white-space:pre;text-align:right;">6</div>
<div style="left:186.20px;top:201.70px;width:16.50px;height:11.60px;background:#4b5862;border-radius:2px"></div>
<div style="left:203.70px;top:201.70px;width:16.30px;height:11.60px;background:#4b5862;border-radius:2px"></div>
<svg style="position:absolute;left:191.10px;top:204.45px" width="7.20" height="6.60" viewBox="0 0 7.20 6.60"><path d="M0 6.1 V1.2 Q0 0 1.2 0 H6.7 V6.1 H4.95 V1.7 H4.2 V6.1 H2.5 V1.7 H1.75 V6.1 Z" fill="#050505"/></svg>
<svg style="position:absolute;left:208.80px;top:204.45px" width="6.60" height="6.60" viewBox="0 0 6.60 6.60"><path d="M6.1 0 H0.9 Q0 0 0 0.9 V3.4 Q0 3.9 0.6 3.9 H4.4 V4.4 H0 V6.1 H5.2 Q6.1 6.1 6.1 5.2 V2.9 Q6.1 2.3 5.5 2.3 H1.7 V1.7 H6.1 Z" fill="#050505"/></svg>
<div style="left:224.30px;top:203.60px;font-size:10.4px;line-height:1;color:#f0f3f5;font-weight:bold;white-space:pre;transform:scaleX(0.95);transform-origin:0 0">BOBO PIANO</div>
<div style="left:180.20px;top:215.90px;width:155.70px;height:17.60px;background:#1d2a34"></div>
<div style="left:147.80px;top:215.90px;width:32.40px;height:17.60px;background:#ffffff"></div>
<svg style="position:absolute;left:150.10px;top:218.50px;" width="15.00" height="13.80" viewBox="0 0 15 13.8"><rect x="0.6" y="0.6" width="12.3" height="12.20" rx="1" fill="#fff" stroke="#d6d6d6" stroke-width="1.1"/><path d="M4.50 0.6 V12.80 M9.00 0.6 V12.80" stroke="#d6d6d6" stroke-width="1.1"/><path d="M4.50 0.6 V7.42 M9.00 0.6 V7.42" stroke="#dcdcdc" stroke-width="2.2"/></svg>
<div style="right:1359.00px;top:220.70px;font-size:8px;line-height:1;color:#3a3a3a;white-space:pre;text-align:right;">7</div>
<div style="left:186.20px;top:219.10px;width:16.50px;height:11.80px;background:#4b5862;border-radius:2px"></div>
<div style="left:203.70px;top:219.10px;width:16.30px;height:11.80px;background:#4b5862;border-radius:2px"></div>
<svg style="position:absolute;left:191.10px;top:221.95px" width="7.20" height="6.60" viewBox="0 0 7.20 6.60"><path d="M0 6.1 V1.2 Q0 0 1.2 0 H6.7 V6.1 H4.95 V1.7 H4.2 V6.1 H2.5 V1.7 H1.75 V6.1 Z" fill="#050505"/></svg>
<svg style="position:absolute;left:208.80px;top:221.95px" width="6.60" height="6.60" viewBox="0 0 6.60 6.60"><path d="M6.1 0 H0.9 Q0 0 0 0.9 V3.4 Q0 3.9 0.6 3.9 H4.4 V4.4 H0 V6.1 H5.2 Q6.1 6.1 6.1 5.2 V2.9 Q6.1 2.3 5.5 2.3 H1.7 V1.7 H6.1 Z" fill="#050505"/></svg>
<div style="left:224.30px;top:221.10px;font-size:10.4px;line-height:1;color:#f0f3f5;font-weight:bold;white-space:pre;transform:scaleX(0.95);transform-origin:0 0">MAXX LEAD</div>
<div style="left:180.20px;top:233.50px;width:155.70px;height:17.80px;background:#1d2a34"></div>
<div style="left:147.80px;top:233.50px;width:32.40px;height:17.80px;background:#ffffff"></div>
<svg style="position:absolute;left:150.10px;top:236.10px;" width="15.00" height="13.80" viewBox="0 0 15 13.8"><rect x="0.6" y="0.6" width="12.3" height="12.20" rx="1" fill="#fff" stroke="#d6d6d6" stroke-width="1.1"/><path d="M4.50 0.6 V12.80 M9.00 0.6 V12.80" stroke="#d6d6d6" stroke-width="1.1"/><path d="M4.50 0.6 V7.42 M9.00 0.6 V7.42" stroke="#dcdcdc" stroke-width="2.2"/></svg>
<div style="right:1359.00px;top:238.40px;font-size:8px;line-height:1;color:#3a3a3a;white-space:pre;text-align:right;">8</div>
<div style="left:186.20px;top:236.70px;width:16.50px;height:12.00px;background:#4b5862;border-radius:2px"></div>
<div style="left:203.70px;top:236.70px;width:16.30px;height:12.00px;background:#4b5862;border-radius:2px"></div>
<svg style="position:absolute;left:191.10px;top:239.65px" width="7.20" height="6.60" viewBox="0 0 7.20 6.60"><path d="M0 6.1 V1.2 Q0 0 1.2 0 H6.7 V6.1 H4.95 V1.7 H4.2 V6.1 H2.5 V1.7 H1.75 V6.1 Z" fill="#050505"/></svg>
<svg style="position:absolute;left:208.80px;top:239.65px" width="6.60" height="6.60" viewBox="0 0 6.60 6.60"><path d="M6.1 0 H0.9 Q0 0 0 0.9 V3.4 Q0 3.9 0.6 3.9 H4.4 V4.4 H0 V6.1 H5.2 Q6.1 6.1 6.1 5.2 V2.9 Q6.1 2.3 5.5 2.3 H1.7 V1.7 H6.1 Z" fill="#050505"/></svg>
<div style="left:224.30px;top:238.80px;font-size:10.4px;line-height:1;color:#f0f3f5;font-weight:bold;white-space:pre;transform:scaleX(0.95);transform-origin:0 0">MAXX PAD</div>
<div style="left:180.20px;top:251.30px;width:155.70px;height:17.40px;background:#1d2a34"></div>
<div style="left:147.80px;top:251.30px;width:32.40px;height:17.40px;background:#ffffff"></div>
<svg style="position:absolute;left:150.10px;top:253.90px;" width="15.00" height="13.80" viewBox="0 0 15 13.799999999999978"><rect x="0.6" y="0.6" width="12.3" height="12.20" rx="1" fill="#fff" stroke="#d6d6d6" stroke-width="1.1"/><path d="M4.50 0.6 V12.80 M9.00 0.6 V12.80" stroke="#d6d6d6" stroke-width="1.1"/><path d="M4.50 0.6 V7.42 M9.00 0.6 V7.42" stroke="#dcdcdc" stroke-width="2.2"/></svg>
<div style="right:1359.00px;top:256.00px;font-size:8px;line-height:1;color:#3a3a3a;white-space:pre;text-align:right;">9</div>
<div style="left:186.20px;top:254.50px;width:16.50px;height:11.60px;background:#4b5862;border-radius:2px"></div>
<div style="left:203.70px;top:254.50px;width:16.30px;height:11.60px;background:#4b5862;border-radius:2px"></div>
<svg style="position:absolute;left:191.10px;top:257.25px" width="7.20" height="6.60" viewBox="0 0 7.20 6.60"><path d="M0 6.1 V1.2 Q0 0 1.2 0 H6.7 V6.1 H4.95 V1.7 H4.2 V6.1 H2.5 V1.7 H1.75 V6.1 Z" fill="#050505"/></svg>
<svg style="position:absolute;left:208.80px;top:257.25px" width="6.60" height="6.60" viewBox="0 0 6.60 6.60"><path d="M6.1 0 H0.9 Q0 0 0 0.9 V3.4 Q0 3.9 0.6 3.9 H4.4 V4.4 H0 V6.1 H5.2 Q6.1 6.1 6.1 5.2 V2.9 Q6.1 2.3 5.5 2.3 H1.7 V1.7 H6.1 Z" fill="#050505"/></svg>
<div style="left:224.30px;top:256.40px;font-size:10.4px;line-height:1;color:#f0f3f5;font-weight:bold;white-space:pre;transform:scaleX(0.95);transform-origin:0 0">STRING PAD</div>
<div style="left:180.20px;top:268.70px;width:155.70px;height:17.70px;background:#1d2a34"></div>
<div style="left:147.80px;top:268.70px;width:32.40px;height:17.70px;background:#ffffff"></div>
<svg style="position:absolute;left:150.10px;top:271.30px;" width="15.00" height="13.80" viewBox="0 0 15 13.8"><rect x="0.6" y="0.6" width="12.3" height="12.20" rx="1" fill="#fff" stroke="#d6d6d6" stroke-width="1.1"/><path d="M4.50 0.6 V12.80 M9.00 0.6 V12.80" stroke="#d6d6d6" stroke-width="1.1"/><path d="M4.50 0.6 V7.42 M9.00 0.6 V7.42" stroke="#dcdcdc" stroke-width="2.2"/></svg>
<div style="right:1359.00px;top:273.55px;font-size:8px;line-height:1;color:#3a3a3a;white-space:pre;text-align:right;">10</div>
<div style="left:186.20px;top:271.90px;width:16.50px;height:11.90px;background:#4b5862;border-radius:2px"></div>
<div style="left:203.70px;top:271.90px;width:16.30px;height:11.90px;background:#4b5862;border-radius:2px"></div>
<svg style="position:absolute;left:191.10px;top:274.80px" width="7.20" height="6.60" viewBox="0 0 7.20 6.60"><path d="M0 6.1 V1.2 Q0 0 1.2 0 H6.7 V6.1 H4.95 V1.7 H4.2 V6.1 H2.5 V1.7 H1.75 V6.1 Z" fill="#050505"/></svg>
<svg style="position:absolute;left:208.80px;top:274.80px" width="6.60" height="6.60" viewBox="0 0 6.60 6.60"><path d="M6.1 0 H0.9 Q0 0 0 0.9 V3.4 Q0 3.9 0.6 3.9 H4.4 V4.4 H0 V6.1 H5.2 Q6.1 6.1 6.1 5.2 V2.9 Q6.1 2.3 5.5 2.3 H1.7 V1.7 H6.1 Z" fill="#050505"/></svg>
<div style="left:224.30px;top:273.95px;font-size:10.4px;line-height:1;color:#f0f3f5;font-weight:bold;white-space:pre;transform:scaleX(0.95);transform-origin:0 0">CHOIR PAD</div>
<div style="left:180.20px;top:286.40px;width:155.70px;height:17.80px;background:#1d2a34"></div>
<div style="left:147.80px;top:286.40px;width:32.40px;height:17.80px;background:#ffffff"></div>
<svg style="position:absolute;left:150.10px;top:289.00px;" width="15.00" height="13.80" viewBox="0 0 15 13.8"><rect x="0.6" y="0.6" width="12.3" height="12.20" rx="1" fill="#fff" stroke="#d6d6d6" stroke-width="1.1"/><path d="M4.50 0.6 V12.80 M9.00 0.6 V12.80" stroke="#d6d6d6" stroke-width="1.1"/><path d="M4.50 0.6 V7.42 M9.00 0.6 V7.42" stroke="#dcdcdc" stroke-width="2.2"/></svg>
<div style="right:1359.00px;top:291.30px;font-size:8px;line-height:1;color:#3a3a3a;white-space:pre;text-align:right;">11</div>
<div style="left:186.20px;top:289.60px;width:16.50px;height:12.00px;background:#4b5862;border-radius:2px"></div>
<div style="left:203.70px;top:289.60px;width:16.30px;height:12.00px;background:#4b5862;border-radius:2px"></div>
<svg style="position:absolute;left:191.10px;top:292.55px" width="7.20" height="6.60" viewBox="0 0 7.20 6.60"><path d="M0 6.1 V1.2 Q0 0 1.2 0 H6.7 V6.1 H4.95 V1.7 H4.2 V6.1 H2.5 V1.7 H1.75 V6.1 Z" fill="#050505"/></svg>
<svg style="position:absolute;left:208.80px;top:292.55px" width="6.60" height="6.60" viewBox="0 0 6.60 6.60"><path d="M6.1 0 H0.9 Q0 0 0 0.9 V3.4 Q0 3.9 0.6 3.9 H4.4 V4.4 H0 V6.1 H5.2 Q6.1 6.1 6.1 5.2 V2.9 Q6.1 2.3 5.5 2.3 H1.7 V1.7 H6.1 Z" fill="#050505"/></svg>
<div style="left:224.30px;top:291.70px;font-size:10.4px;line-height:1;color:#f0f3f5;font-weight:bold;white-space:pre;transform:scaleX(0.95);transform-origin:0 0">BOBO ACID</div>
<div style="left:180.20px;top:304.20px;width:155.70px;height:17.60px;background:#1d2a34"></div>
<div style="left:147.80px;top:304.20px;width:32.40px;height:17.60px;background:#ffffff"></div>
<svg style="position:absolute;left:150.10px;top:306.80px;" width="15.00" height="13.80" viewBox="0 0 15 13.8"><rect x="0.6" y="0.6" width="12.3" height="12.20" rx="1" fill="#fff" stroke="#d6d6d6" stroke-width="1.1"/><path d="M4.50 0.6 V12.80 M9.00 0.6 V12.80" stroke="#d6d6d6" stroke-width="1.1"/><path d="M4.50 0.6 V7.42 M9.00 0.6 V7.42" stroke="#dcdcdc" stroke-width="2.2"/></svg>
<div style="right:1359.00px;top:309.00px;font-size:8px;line-height:1;color:#3a3a3a;white-space:pre;text-align:right;">12</div>
<div style="left:186.20px;top:307.40px;width:16.50px;height:11.80px;background:#4b5862;border-radius:2px"></div>
<div style="left:203.70px;top:307.40px;width:16.30px;height:11.80px;background:#4b5862;border-radius:2px"></div>
<svg style="position:absolute;left:191.10px;top:310.25px" width="7.20" height="6.60" viewBox="0 0 7.20 6.60"><path d="M0 6.1 V1.2 Q0 0 1.2 0 H6.7 V6.1 H4.95 V1.7 H4.2 V6.1 H2.5 V1.7 H1.75 V6.1 Z" fill="#050505"/></svg>
<svg style="position:absolute;left:208.80px;top:310.25px" width="6.60" height="6.60" viewBox="0 0 6.60 6.60"><path d="M6.1 0 H0.9 Q0 0 0 0.9 V3.4 Q0 3.9 0.6 3.9 H4.4 V4.4 H0 V6.1 H5.2 Q6.1 6.1 6.1 5.2 V2.9 Q6.1 2.3 5.5 2.3 H1.7 V1.7 H6.1 Z" fill="#050505"/></svg>
<div style="left:224.30px;top:309.40px;font-size:10.4px;line-height:1;color:#f0f3f5;font-weight:bold;white-space:pre;transform:scaleX(0.95);transform-origin:0 0">CORONA ACID</div>
<div style="left:180.20px;top:321.80px;width:155.70px;height:17.80px;background:#1d2a34"></div>
<div style="left:147.80px;top:321.80px;width:32.40px;height:17.80px;background:#ffffff"></div>
<svg style="position:absolute;left:150.10px;top:324.40px;" width="15.00" height="13.80" viewBox="0 0 15 13.8"><rect x="0.6" y="0.6" width="12.3" height="12.20" rx="1" fill="#fff" stroke="#d6d6d6" stroke-width="1.1"/><path d="M4.50 0.6 V12.80 M9.00 0.6 V12.80" stroke="#d6d6d6" stroke-width="1.1"/><path d="M4.50 0.6 V7.42 M9.00 0.6 V7.42" stroke="#dcdcdc" stroke-width="2.2"/></svg>
<div style="right:1359.00px;top:326.70px;font-size:8px;line-height:1;color:#3a3a3a;white-space:pre;text-align:right;">13</div>
<div style="left:186.20px;top:325.00px;width:16.50px;height:12.00px;background:#4b5862;border-radius:2px"></div>
<div style="left:203.70px;top:325.00px;width:16.30px;height:12.00px;background:#4b5862;border-radius:2px"></div>
<svg style="position:absolute;left:191.10px;top:327.95px" width="7.20" height="6.60" viewBox="0 0 7.20 6.60"><path d="M0 6.1 V1.2 Q0 0 1.2 0 H6.7 V6.1 H4.95 V1.7 H4.2 V6.1 H2.5 V1.7 H1.75 V6.1 Z" fill="#050505"/></svg>
<svg style="position:absolute;left:208.80px;top:327.95px" width="6.60" height="6.60" viewBox="0 0 6.60 6.60"><path d="M6.1 0 H0.9 Q0 0 0 0.9 V3.4 Q0 3.9 0.6 3.9 H4.4 V4.4 H0 V6.1 H5.2 Q6.1 6.1 6.1 5.2 V2.9 Q6.1 2.3 5.5 2.3 H1.7 V1.7 H6.1 Z" fill="#050505"/></svg>
<div style="left:224.30px;top:327.10px;font-size:10.4px;line-height:1;color:#f0f3f5;font-weight:bold;white-space:pre;transform:scaleX(0.95);transform-origin:0 0">SNAP STRINGS</div>
<div style="left:180.20px;top:339.60px;width:155.70px;height:17.40px;background:#1d2a34"></div>
<div style="left:147.80px;top:339.60px;width:32.40px;height:17.40px;background:#ffffff"></div>
<svg style="position:absolute;left:150.10px;top:342.20px;" width="15.00" height="13.80" viewBox="0 0 15 13.799999999999978"><rect x="0.6" y="0.6" width="12.3" height="12.20" rx="1" fill="#fff" stroke="#d6d6d6" stroke-width="1.1"/><path d="M4.50 0.6 V12.80 M9.00 0.6 V12.80" stroke="#d6d6d6" stroke-width="1.1"/><path d="M4.50 0.6 V7.42 M9.00 0.6 V7.42" stroke="#dcdcdc" stroke-width="2.2"/></svg>
<div style="right:1359.00px;top:344.30px;font-size:8px;line-height:1;color:#3a3a3a;white-space:pre;text-align:right;">14</div>
<div style="left:186.20px;top:342.80px;width:16.50px;height:11.60px;background:#4b5862;border-radius:2px"></div>
<div style="left:203.70px;top:342.80px;width:16.30px;height:11.60px;background:#4b5862;border-radius:2px"></div>
<svg style="position:absolute;left:191.10px;top:345.55px" width="7.20" height="6.60" viewBox="0 0 7.20 6.60"><path d="M0 6.1 V1.2 Q0 0 1.2 0 H6.7 V6.1 H4.95 V1.7 H4.2 V6.1 H2.5 V1.7 H1.75 V6.1 Z" fill="#050505"/></svg>
<svg style="position:absolute;left:208.80px;top:345.55px" width="6.60" height="6.60" viewBox="0 0 6.60 6.60"><path d="M6.1 0 H0.9 Q0 0 0 0.9 V3.4 Q0 3.9 0.6 3.9 H4.4 V4.4 H0 V6.1 H5.2 Q6.1 6.1 6.1 5.2 V2.9 Q6.1 2.3 5.5 2.3 H1.7 V1.7 H6.1 Z" fill="#050505"/></svg>
<div style="left:224.30px;top:344.70px;font-size:10.4px;line-height:1;color:#f0f3f5;font-weight:bold;white-space:pre;transform:scaleX(0.95);transform-origin:0 0">SNAP SAW</div>
<div style="left:180.20px;top:357.00px;width:155.70px;height:17.70px;background:#1d2a34"></div>
<div style="left:147.80px;top:357.00px;width:32.40px;height:17.70px;background:#ffffff"></div>
<svg style="position:absolute;left:150.10px;top:359.60px;" width="15.00" height="13.80" viewBox="0 0 15 13.8"><rect x="0.6" y="0.6" width="12.3" height="12.20" rx="1" fill="#fff" stroke="#d6d6d6" stroke-width="1.1"/><path d="M4.50 0.6 V12.80 M9.00 0.6 V12.80" stroke="#d6d6d6" stroke-width="1.1"/><path d="M4.50 0.6 V7.42 M9.00 0.6 V7.42" stroke="#dcdcdc" stroke-width="2.2"/></svg>
<div style="right:1359.00px;top:361.85px;font-size:8px;line-height:1;color:#3a3a3a;white-space:pre;text-align:right;">15</div>
<div style="left:186.20px;top:360.20px;width:16.50px;height:11.90px;background:#4b5862;border-radius:2px"></div>
<div style="left:203.70px;top:360.20px;width:16.30px;height:11.90px;background:#4b5862;border-radius:2px"></div>
<svg style="position:absolute;left:191.10px;top:363.10px" width="7.20" height="6.60" viewBox="0 0 7.20 6.60"><path d="M0 6.1 V1.2 Q0 0 1.2 0 H6.7 V6.1 H4.95 V1.7 H4.2 V6.1 H2.5 V1.7 H1.75 V6.1 Z" fill="#050505"/></svg>
<svg style="position:absolute;left:208.80px;top:363.10px" width="6.60" height="6.60" viewBox="0 0 6.60 6.60"><path d="M6.1 0 H0.9 Q0 0 0 0.9 V3.4 Q0 3.9 0.6 3.9 H4.4 V4.4 H0 V6.1 H5.2 Q6.1 6.1 6.1 5.2 V2.9 Q6.1 2.3 5.5 2.3 H1.7 V1.7 H6.1 Z" fill="#050505"/></svg>
<div style="left:224.30px;top:362.25px;font-size:10.4px;line-height:1;color:#f0f3f5;font-weight:bold;white-space:pre;transform:scaleX(0.95);transform-origin:0 0">MAXX BASS</div>
<div style="left:180.20px;top:374.70px;width:155.70px;height:17.60px;background:#1d2a34"></div>
<div style="left:147.80px;top:374.70px;width:32.40px;height:17.60px;background:#ffffff"></div>
<svg style="position:absolute;left:150.10px;top:377.30px;" width="15.00" height="13.80" viewBox="0 0 15 13.8"><rect x="0.6" y="0.6" width="12.3" height="12.20" rx="1" fill="#fff" stroke="#d6d6d6" stroke-width="1.1"/><path d="M4.50 0.6 V12.80 M9.00 0.6 V12.80" stroke="#d6d6d6" stroke-width="1.1"/><path d="M4.50 0.6 V7.42 M9.00 0.6 V7.42" stroke="#dcdcdc" stroke-width="2.2"/></svg>
<div style="right:1359.00px;top:379.50px;font-size:8px;line-height:1;color:#3a3a3a;white-space:pre;text-align:right;">16</div>
<div style="left:186.20px;top:377.90px;width:16.50px;height:11.80px;background:#4b5862;border-radius:2px"></div>
<div style="left:203.70px;top:377.90px;width:16.30px;height:11.80px;background:#4b5862;border-radius:2px"></div>
<svg style="position:absolute;left:191.10px;top:380.75px" width="7.20" height="6.60" viewBox="0 0 7.20 6.60"><path d="M0 6.1 V1.2 Q0 0 1.2 0 H6.7 V6.1 H4.95 V1.7 H4.2 V6.1 H2.5 V1.7 H1.75 V6.1 Z" fill="#050505"/></svg>
<svg style="position:absolute;left:208.80px;top:380.75px" width="6.60" height="6.60" viewBox="0 0 6.60 6.60"><path d="M6.1 0 H0.9 Q0 0 0 0.9 V3.4 Q0 3.9 0.6 3.9 H4.4 V4.4 H0 V6.1 H5.2 Q6.1 6.1 6.1 5.2 V2.9 Q6.1 2.3 5.5 2.3 H1.7 V1.7 H6.1 Z" fill="#050505"/></svg>
<div style="left:224.30px;top:379.90px;font-size:10.4px;line-height:1;color:#f0f3f5;font-weight:bold;white-space:pre;transform:scaleX(0.95);transform-origin:0 0">SNAP BASS</div>
<div style="left:180.20px;top:392.30px;width:155.70px;height:17.80px;background:#1d2a34"></div>
<div style="left:147.80px;top:392.30px;width:32.40px;height:17.80px;background:#ffffff"></div>
<svg style="position:absolute;left:150.10px;top:394.90px;" width="15.00" height="13.80" viewBox="0 0 15 13.8"><rect x="0.6" y="0.6" width="12.3" height="12.20" rx="1" fill="#fff" stroke="#d6d6d6" stroke-width="1.1"/><path d="M4.50 0.6 V12.80 M9.00 0.6 V12.80" stroke="#d6d6d6" stroke-width="1.1"/><path d="M4.50 0.6 V7.42 M9.00 0.6 V7.42" stroke="#dcdcdc" stroke-width="2.2"/></svg>
<div style="right:1359.00px;top:397.20px;font-size:8px;line-height:1;color:#3a3a3a;white-space:pre;text-align:right;">17</div>
<div style="left:186.20px;top:395.50px;width:16.50px;height:12.00px;background:#4b5862;border-radius:2px"></div>
<div style="left:203.70px;top:395.50px;width:16.30px;height:12.00px;background:#4b5862;border-radius:2px"></div>
<svg style="position:absolute;left:191.10px;top:398.45px" width="7.20" height="6.60" viewBox="0 0 7.20 6.60"><path d="M0 6.1 V1.2 Q0 0 1.2 0 H6.7 V6.1 H4.95 V1.7 H4.2 V6.1 H2.5 V1.7 H1.75 V6.1 Z" fill="#050505"/></svg>
<svg style="position:absolute;left:208.80px;top:398.45px" width="6.60" height="6.60" viewBox="0 0 6.60 6.60"><path d="M6.1 0 H0.9 Q0 0 0 0.9 V3.4 Q0 3.9 0.6 3.9 H4.4 V4.4 H0 V6.1 H5.2 Q6.1 6.1 6.1 5.2 V2.9 Q6.1 2.3 5.5 2.3 H1.7 V1.7 H6.1 Z" fill="#050505"/></svg>
<div style="left:224.30px;top:397.60px;font-size:10.4px;line-height:1;color:#f0f3f5;font-weight:bold;white-space:pre;transform:scaleX(0.95);transform-origin:0 0">BOBO BASS</div>
<div style="left:180.20px;top:410.10px;width:155.70px;height:17.20px;background:#1d2a34"></div>
<div style="left:147.80px;top:410.10px;width:32.40px;height:17.20px;background:#ffffff"></div>
<svg style="position:absolute;left:150.10px;top:412.70px;" width="15.00" height="13.60" viewBox="0 0 15 13.599999999999989"><rect x="0.6" y="0.6" width="12.3" height="12.00" rx="1" fill="#fff" stroke="#d6d6d6" stroke-width="1.1"/><path d="M4.50 0.6 V12.60 M9.00 0.6 V12.60" stroke="#d6d6d6" stroke-width="1.1"/><path d="M4.50 0.6 V7.31 M9.00 0.6 V7.31" stroke="#dcdcdc" stroke-width="2.2"/></svg>
<div style="right:1359.00px;top:414.70px;font-size:8px;line-height:1;color:#3a3a3a;white-space:pre;text-align:right;">18</div>
<div style="left:186.20px;top:413.30px;width:16.50px;height:11.40px;background:#4b5862;border-radius:2px"></div>
<div style="left:203.70px;top:413.30px;width:16.30px;height:11.40px;background:#4b5862;border-radius:2px"></div>
<svg style="position:absolute;left:191.10px;top:415.95px" width="7.20" height="6.60" viewBox="0 0 7.20 6.60"><path d="M0 6.1 V1.2 Q0 0 1.2 0 H6.7 V6.1 H4.95 V1.7 H4.2 V6.1 H2.5 V1.7 H1.75 V6.1 Z" fill="#050505"/></svg>
<svg style="position:absolute;left:208.80px;top:415.95px" width="6.60" height="6.60" viewBox="0 0 6.60 6.60"><path d="M6.1 0 H0.9 Q0 0 0 0.9 V3.4 Q0 3.9 0.6 3.9 H4.4 V4.4 H0 V6.1 H5.2 Q6.1 6.1 6.1 5.2 V2.9 Q6.1 2.3 5.5 2.3 H1.7 V1.7 H6.1 Z" fill="#050505"/></svg>
<div style="left:224.30px;top:415.10px;font-size:10.4px;line-height:1;color:#f0f3f5;font-weight:bold;white-space:pre;transform:scaleX(0.95);transform-origin:0 0">BOBO RIFF</div>
<div style="left:222.80px;top:412.10px;width:98.20px;height:13.20px;border:1px solid #3e4b55;background:rgba(0,0,0,0.05)"></div>
<svg style="position:absolute;left:311.00px;top:416.20px;" width="7.00" height="6.00" viewBox="0 0 7 6"><path d="M0.5 0.5 H6.5 L3.5 5.5 Z" fill="#0a0a0a"/></svg>
<div style="left:180.20px;top:427.30px;width:155.70px;height:11.50px;background:#1d2a34"></div>
<div style="left:147.80px;top:427.30px;width:41.30px;height:11.50px;background:#3ba8e8"></div>
<div style="left:189.10px;top:427.30px;width:146.80px;height:11.50px;background:#1d2a34"></div>
<svg style="position:absolute;left:150.00px;top:428.55px;" width="20.00" height="11.00" viewBox="0 0 20 11"><path d="M1 1.5 H6 L7 3 H13 V5 H4 L1 10 Z" fill="#f4f4f4"/><path d="M3 5.5 H17 L14 10.5 H1 Z" fill="#f4f4f4"/></svg>
<div style="left:195.00px;top:427.60px;width:16.10px;height:10.30px;background:#4b5862;border-radius:0.5px"></div>
<div style="left:212.10px;top:427.60px;width:16.70px;height:10.30px;background:#4b5862;border-radius:0.5px"></div>
<svg style="position:absolute;left:199.70px;top:429.70px" width="7.20" height="6.60" viewBox="0 0 7.20 6.60"><path d="M0 6.1 V1.2 Q0 0 1.2 0 H6.7 V6.1 H4.95 V1.7 H4.2 V6.1 H2.5 V1.7 H1.75 V6.1 Z" fill="#050505"/></svg>
<svg style="position:absolute;left:217.40px;top:429.70px" width="6.60" height="6.60" viewBox="0 0 6.60 6.60"><path d="M6.1 0 H0.9 Q0 0 0 0.9 V3.4 Q0 3.9 0.6 3.9 H4.4 V4.4 H0 V6.1 H5.2 Q6.1 6.1 6.1 5.2 V2.9 Q6.1 2.3 5.5 2.3 H1.7 V1.7 H6.1 Z" fill="#050505"/></svg>
<div style="left:235.10px;top:429.05px;font-size:10.2px;line-height:1;color:#f0f3f5;font-weight:bold;white-space:pre;transform:scaleX(0.95);transform-origin:0 0">KICK</div>
<div style="left:180.20px;top:438.80px;width:155.70px;height:17.60px;background:#1d2a34"></div>
<div style="left:147.80px;top:438.80px;width:9.00px;height:17.60px;background:#080c0f"></div>
<div style="left:156.80px;top:438.80px;width:32.30px;height:17.60px;background:#3ba8e8"></div>
<svg style="position:absolute;left:158.00px;top:442.10px;" width="15.00" height="11.00" viewBox="0 0 15 11"><path d="M0.5 5.5 H14" stroke="#fff" stroke-width="0.7"/><path d="M1.60 5.0 V6.0 M2.85 4.2 V6.8 M4.10 2.9 V8.1 M5.35 3.9 V7.1 M6.60 1.1 V9.9 M7.85 0.3 V10.7 M9.10 2.7 V8.3 M10.35 1.7 V9.3 M11.60 3.7 V7.3 M12.85 4.4 V6.6 M14.10 5.0 V6.0" stroke="#fff" stroke-width="0.9" fill="none"/></svg>
<div style="right:1350.50px;top:443.60px;font-size:8px;line-height:1;color:#1a3a5a;white-space:pre;text-align:right;">19</div>
<div style="left:195.00px;top:442.00px;width:16.10px;height:11.80px;background:#4b5862;border-radius:2px"></div>
<div style="left:212.10px;top:442.00px;width:16.70px;height:11.80px;background:#4b5862;border-radius:2px"></div>
<svg style="position:absolute;left:199.70px;top:444.85px" width="7.20" height="6.60" viewBox="0 0 7.20 6.60"><path d="M0 6.1 V1.2 Q0 0 1.2 0 H6.7 V6.1 H4.95 V1.7 H4.2 V6.1 H2.5 V1.7 H1.75 V6.1 Z" fill="#050505"/></svg>
<svg style="position:absolute;left:217.40px;top:444.85px" width="6.60" height="6.60" viewBox="0 0 6.60 6.60"><path d="M6.1 0 H0.9 Q0 0 0 0.9 V3.4 Q0 3.9 0.6 3.9 H4.4 V4.4 H0 V6.1 H5.2 Q6.1 6.1 6.1 5.2 V2.9 Q6.1 2.3 5.5 2.3 H1.7 V1.7 H6.1 Z" fill="#050505"/></svg>
<div style="left:233.00px;top:444.00px;font-size:10.4px;line-height:1;color:#f0f3f5;font-weight:bold;white-space:pre;transform:scaleX(0.95);transform-origin:0 0">KICK</div>
<div style="left:180.20px;top:456.40px;width:155.70px;height:11.10px;background:#1d2a34"></div>
<div style="left:147.80px;top:456.40px;width:41.30px;height:11.10px;background:#e8b83a"></div>
<div style="left:189.10px;top:456.40px;width:146.80px;height:11.10px;background:#1d2a34"></div>
<svg style="position:absolute;left:150.00px;top:457.45px;" width="20.00" height="11.00" viewBox="0 0 20 11"><path d="M1 1.5 H6 L7 3 H13 V5 H4 L1 10 Z" fill="#f4f4f4"/><path d="M3 5.5 H17 L14 10.5 H1 Z" fill="#f4f4f4"/></svg>
<div style="left:195.00px;top:456.70px;width:16.10px;height:9.90px;background:#4b5862;border-radius:0.5px"></div>
<div style="left:212.10px;top:456.70px;width:16.70px;height:9.90px;background:#4b5862;border-radius:0.5px"></div>
<svg style="position:absolute;left:199.70px;top:458.60px" width="7.20" height="6.60" viewBox="0 0 7.20 6.60"><path d="M0 6.1 V1.2 Q0 0 1.2 0 H6.7 V6.1 H4.95 V1.7 H4.2 V6.1 H2.5 V1.7 H1.75 V6.1 Z" fill="#050505"/></svg>
<svg style="position:absolute;left:217.40px;top:458.60px" width="6.60" height="6.60" viewBox="0 0 6.60 6.60"><path d="M6.1 0 H0.9 Q0 0 0 0.9 V3.4 Q0 3.9 0.6 3.9 H4.4 V4.4 H0 V6.1 H5.2 Q6.1 6.1 6.1 5.2 V2.9 Q6.1 2.3 5.5 2.3 H1.7 V1.7 H6.1 Z" fill="#050505"/></svg>
<div style="left:235.10px;top:457.95px;font-size:10.2px;line-height:1;color:#f0f3f5;font-weight:bold;white-space:pre;transform:scaleX(0.95);transform-origin:0 0">HATS TOMS</div>
<div style="left:180.20px;top:467.50px;width:155.70px;height:11.20px;background:#1d2a34"></div>
<div style="left:147.80px;top:467.50px;width:9.00px;height:11.20px;background:#080c0f"></div>
<div style="left:156.80px;top:467.50px;width:32.30px;height:11.20px;background:#e8b83a"></div>
<div style="left:158.00px;top:467.50px;width:15px;height:11.20px;overflow:hidden"><svg style="position:absolute;left:0;top:4.70px" width="15" height="11"><path d="M0.5 5.5 H14" stroke="#fff" stroke-width="0.7"/><path d="M1.60 5.0 V6.0 M2.85 4.2 V6.8 M4.10 2.9 V8.1 M5.35 3.9 V7.1 M6.60 1.1 V9.9 M7.85 0.3 V10.7 M9.10 2.7 V8.3 M10.35 1.7 V9.3 M11.60 3.7 V7.3 M12.85 4.4 V6.6 M14.10 5.0 V6.0" stroke="#fff" stroke-width="0.9" fill="none"/></svg></div>
<div style="right:1350.50px;top:469.35px;font-size:7.5px;line-height:1;color:#4a3a10;white-space:pre;text-align:right;">20</div>
<div style="left:195.00px;top:467.80px;width:16.10px;height:10.00px;background:#4b5862;border-radius:0.5px"></div>
<div style="left:212.10px;top:467.80px;width:16.70px;height:10.00px;background:#4b5862;border-radius:0.5px"></div>
<svg style="position:absolute;left:199.70px;top:469.75px" width="7.20" height="6.60" viewBox="0 0 7.20 6.60"><path d="M0 6.1 V1.2 Q0 0 1.2 0 H6.7 V6.1 H4.95 V1.7 H4.2 V6.1 H2.5 V1.7 H1.75 V6.1 Z" fill="#050505"/></svg>
<svg style="position:absolute;left:217.40px;top:469.75px" width="6.60" height="6.60" viewBox="0 0 6.60 6.60"><path d="M6.1 0 H0.9 Q0 0 0 0.9 V3.4 Q0 3.9 0.6 3.9 H4.4 V4.4 H0 V6.1 H5.2 Q6.1 6.1 6.1 5.2 V2.9 Q6.1 2.3 5.5 2.3 H1.7 V1.7 H6.1 Z" fill="#050505"/></svg>
<div style="left:233.00px;top:469.10px;font-size:10.2px;line-height:1;color:#f0f3f5;font-weight:bold;white-space:pre;transform:scaleX(0.95);transform-origin:0 0">CL HH</div>
<div style="left:180.20px;top:478.70px;width:155.70px;height:11.30px;background:#1d2a34"></div>
<div style="left:147.80px;top:478.70px;width:9.00px;height:11.30px;background:#080c0f"></div>
<div style="left:156.80px;top:478.70px;width:32.30px;height:11.30px;background:#e8b83a"></div>
<div style="left:158.00px;top:478.70px;width:15px;height:11.30px;overflow:hidden"><svg style="position:absolute;left:0;top:4.80px" width="15" height="11"><path d="M0.5 5.5 H14" stroke="#fff" stroke-width="0.7"/><path d="M1.60 5.0 V6.0 M2.85 4.2 V6.8 M4.10 2.9 V8.1 M5.35 3.9 V7.1 M6.60 1.1 V9.9 M7.85 0.3 V10.7 M9.10 2.7 V8.3 M10.35 1.7 V9.3 M11.60 3.7 V7.3 M12.85 4.4 V6.6 M14.10 5.0 V6.0" stroke="#fff" stroke-width="0.9" fill="none"/></svg></div>
<div style="right:1350.50px;top:480.60px;font-size:7.5px;line-height:1;color:#4a3a10;white-space:pre;text-align:right;">21</div>
<div style="left:195.00px;top:479.00px;width:16.10px;height:10.10px;background:#4b5862;border-radius:0.5px"></div>
<div style="left:212.10px;top:479.00px;width:16.70px;height:10.10px;background:#4b5862;border-radius:0.5px"></div>
<svg style="position:absolute;left:199.70px;top:481.00px" width="7.20" height="6.60" viewBox="0 0 7.20 6.60"><path d="M0 6.1 V1.2 Q0 0 1.2 0 H6.7 V6.1 H4.95 V1.7 H4.2 V6.1 H2.5 V1.7 H1.75 V6.1 Z" fill="#050505"/></svg>
<svg style="position:absolute;left:217.40px;top:481.00px" width="6.60" height="6.60" viewBox="0 0 6.60 6.60"><path d="M6.1 0 H0.9 Q0 0 0 0.9 V3.4 Q0 3.9 0.6 3.9 H4.4 V4.4 H0 V6.1 H5.2 Q6.1 6.1 6.1 5.2 V2.9 Q6.1 2.3 5.5 2.3 H1.7 V1.7 H6.1 Z" fill="#050505"/></svg>
<div style="left:233.00px;top:480.35px;font-size:10.2px;line-height:1;color:#f0f3f5;font-weight:bold;white-space:pre;transform:scaleX(0.95);transform-origin:0 0">CL HH 2</div>
<div style="left:180.20px;top:490.00px;width:155.70px;height:17.60px;background:#1d2a34"></div>
<div style="left:147.80px;top:490.00px;width:9.00px;height:17.60px;background:#080c0f"></div>
<div style="left:156.80px;top:490.00px;width:32.30px;height:17.60px;background:#9aa9b6"></div>
<svg style="position:absolute;left:158.00px;top:493.30px;" width="15.00" height="11.00" viewBox="0 0 15 11"><path d="M0.5 5.5 H14" stroke="#fff" stroke-width="0.7"/><path d="M1.60 5.0 V6.0 M2.85 4.2 V6.8 M4.10 2.9 V8.1 M5.35 3.9 V7.1 M6.60 1.1 V9.9 M7.85 0.3 V10.7 M9.10 2.7 V8.3 M10.35 1.7 V9.3 M11.60 3.7 V7.3 M12.85 4.4 V6.6 M14.10 5.0 V6.0" stroke="#fff" stroke-width="0.9" fill="none"/></svg>
<div style="right:1350.50px;top:494.80px;font-size:8px;line-height:1;color:#3a4048;white-space:pre;text-align:right;">22</div>
<div style="left:195.00px;top:493.20px;width:16.10px;height:11.80px;background:#4b5862;border-radius:2px"></div>
<div style="left:212.10px;top:493.20px;width:16.70px;height:11.80px;background:#4b5862;border-radius:2px"></div>
<svg style="position:absolute;left:199.70px;top:496.05px" width="7.20" height="6.60" viewBox="0 0 7.20 6.60"><path d="M0 6.1 V1.2 Q0 0 1.2 0 H6.7 V6.1 H4.95 V1.7 H4.2 V6.1 H2.5 V1.7 H1.75 V6.1 Z" fill="#050505"/></svg>
<svg style="position:absolute;left:217.40px;top:496.05px" width="6.60" height="6.60" viewBox="0 0 6.60 6.60"><path d="M6.1 0 H0.9 Q0 0 0 0.9 V3.4 Q0 3.9 0.6 3.9 H4.4 V4.4 H0 V6.1 H5.2 Q6.1 6.1 6.1 5.2 V2.9 Q6.1 2.3 5.5 2.3 H1.7 V1.7 H6.1 Z" fill="#050505"/></svg>
<div style="left:233.00px;top:495.20px;font-size:10.4px;line-height:1;color:#f0f3f5;font-weight:bold;white-space:pre;transform:scaleX(0.95);transform-origin:0 0">XTRA Open hat</div>
<div style="left:231.50px;top:492.00px;width:96.50px;height:13.60px;border:1px solid #3e4b55;background:rgba(0,0,0,0.05)"></div>
<svg style="position:absolute;left:318.00px;top:496.30px;" width="7.00" height="6.00" viewBox="0 0 7 6"><path d="M0.5 0.5 H6.5 L3.5 5.5 Z" fill="#0a0a0a"/></svg>
<div style="left:180.20px;top:507.60px;width:155.70px;height:17.80px;background:#1d2a34"></div>
<div style="left:147.80px;top:507.60px;width:9.00px;height:17.80px;background:#080c0f"></div>
<div style="left:156.80px;top:507.60px;width:32.30px;height:17.80px;background:#e8b83a"></div>
<svg style="position:absolute;left:158.00px;top:511.00px;" width="15.00" height="11.00" viewBox="0 0 15 11"><path d="M0.5 5.5 H14" stroke="#fff" stroke-width="0.7"/><path d="M1.60 5.0 V6.0 M2.85 4.2 V6.8 M4.10 2.9 V8.1 M5.35 3.9 V7.1 M6.60 1.1 V9.9 M7.85 0.3 V10.7 M9.10 2.7 V8.3 M10.35 1.7 V9.3 M11.60 3.7 V7.3 M12.85 4.4 V6.6 M14.10 5.0 V6.0" stroke="#fff" stroke-width="0.9" fill="none"/></svg>
<div style="right:1350.50px;top:512.50px;font-size:8px;line-height:1;color:#4a3a10;white-space:pre;text-align:right;">23</div>
<div style="left:195.00px;top:510.80px;width:16.10px;height:12.00px;background:#4b5862;border-radius:2px"></div>
<div style="left:212.10px;top:510.80px;width:16.70px;height:12.00px;background:#4b5862;border-radius:2px"></div>
<svg style="position:absolute;left:199.70px;top:513.75px" width="7.20" height="6.60" viewBox="0 0 7.20 6.60"><path d="M0 6.1 V1.2 Q0 0 1.2 0 H6.7 V6.1 H4.95 V1.7 H4.2 V6.1 H2.5 V1.7 H1.75 V6.1 Z" fill="#050505"/></svg>
<svg style="position:absolute;left:217.40px;top:513.75px" width="6.60" height="6.60" viewBox="0 0 6.60 6.60"><path d="M6.1 0 H0.9 Q0 0 0 0.9 V3.4 Q0 3.9 0.6 3.9 H4.4 V4.4 H0 V6.1 H5.2 Q6.1 6.1 6.1 5.2 V2.9 Q6.1 2.3 5.5 2.3 H1.7 V1.7 H6.1 Z" fill="#050505"/></svg>
<div style="left:233.00px;top:512.90px;font-size:10.4px;line-height:1;color:#f0f3f5;font-weight:bold;white-space:pre;transform:scaleX(0.95);transform-origin:0 0">OP LOOP</div>
<div style="left:180.20px;top:525.40px;width:155.70px;height:10.80px;background:#1d2a34"></div>
<div style="left:147.80px;top:525.40px;width:9.00px;height:10.80px;background:#080c0f"></div>
<div style="left:156.80px;top:525.40px;width:32.30px;height:10.80px;background:#9aa9b6"></div>
<div style="left:158.00px;top:525.40px;width:15px;height:10.80px;overflow:hidden"><svg style="position:absolute;left:0;top:4.30px" width="15" height="11"><path d="M0.5 5.5 H14" stroke="#fff" stroke-width="0.7"/><path d="M1.60 5.0 V6.0 M2.85 4.2 V6.8 M4.10 2.9 V8.1 M5.35 3.9 V7.1 M6.60 1.1 V9.9 M7.85 0.3 V10.7 M9.10 2.7 V8.3 M10.35 1.7 V9.3 M11.60 3.7 V7.3 M12.85 4.4 V6.6 M14.10 5.0 V6.0" stroke="#fff" stroke-width="0.9" fill="none"/></svg></div>
<div style="right:1350.50px;top:527.05px;font-size:7.5px;line-height:1;color:#3a4048;white-space:pre;text-align:right;">24</div>
<div style="left:195.00px;top:525.70px;width:16.10px;height:9.60px;background:#4b5862;border-radius:0.5px"></div>
<div style="left:212.10px;top:525.70px;width:16.70px;height:9.60px;background:#4b5862;border-radius:0.5px"></div>
<svg style="position:absolute;left:199.70px;top:527.45px" width="7.20" height="6.60" viewBox="0 0 7.20 6.60"><path d="M0 6.1 V1.2 Q0 0 1.2 0 H6.7 V6.1 H4.95 V1.7 H4.2 V6.1 H2.5 V1.7 H1.75 V6.1 Z" fill="#050505"/></svg>
<svg style="position:absolute;left:217.40px;top:527.45px" width="6.60" height="6.60" viewBox="0 0 6.60 6.60"><path d="M6.1 0 H0.9 Q0 0 0 0.9 V3.4 Q0 3.9 0.6 3.9 H4.4 V4.4 H0 V6.1 H5.2 Q6.1 6.1 6.1 5.2 V2.9 Q6.1 2.3 5.5 2.3 H1.7 V1.7 H6.1 Z" fill="#050505"/></svg>
<div style="left:233.00px;top:526.80px;font-size:10.2px;line-height:1;color:#f0f3f5;font-weight:bold;white-space:pre;transform:scaleX(0.95);transform-origin:0 0">SNARE</div>
<div style="left:180.20px;top:536.20px;width:155.70px;height:11.10px;background:#1d2a34"></div>
<div style="left:147.80px;top:536.20px;width:9.00px;height:11.10px;background:#080c0f"></div>
<div style="left:156.80px;top:536.20px;width:32.30px;height:11.10px;background:#9aa9b6"></div>
<div style="left:158.00px;top:536.20px;width:15px;height:11.10px;overflow:hidden"><svg style="position:absolute;left:0;top:4.60px" width="15" height="11"><path d="M0.5 5.5 H14" stroke="#fff" stroke-width="0.7"/><path d="M1.60 5.0 V6.0 M2.85 4.2 V6.8 M4.10 2.9 V8.1 M5.35 3.9 V7.1 M6.60 1.1 V9.9 M7.85 0.3 V10.7 M9.10 2.7 V8.3 M10.35 1.7 V9.3 M11.60 3.7 V7.3 M12.85 4.4 V6.6 M14.10 5.0 V6.0" stroke="#fff" stroke-width="0.9" fill="none"/></svg></div>
<div style="right:1350.50px;top:538.00px;font-size:7.5px;line-height:1;color:#3a4048;white-space:pre;text-align:right;">25</div>
<div style="left:195.00px;top:536.50px;width:16.10px;height:9.90px;background:#4b5862;border-radius:0.5px"></div>
<div style="left:212.10px;top:536.50px;width:16.70px;height:9.90px;background:#4b5862;border-radius:0.5px"></div>
<svg style="position:absolute;left:199.70px;top:538.40px" width="7.20" height="6.60" viewBox="0 0 7.20 6.60"><path d="M0 6.1 V1.2 Q0 0 1.2 0 H6.7 V6.1 H4.95 V1.7 H4.2 V6.1 H2.5 V1.7 H1.75 V6.1 Z" fill="#050505"/></svg>
<svg style="position:absolute;left:217.40px;top:538.40px" width="6.60" height="6.60" viewBox="0 0 6.60 6.60"><path d="M6.1 0 H0.9 Q0 0 0 0.9 V3.4 Q0 3.9 0.6 3.9 H4.4 V4.4 H0 V6.1 H5.2 Q6.1 6.1 6.1 5.2 V2.9 Q6.1 2.3 5.5 2.3 H1.7 V1.7 H6.1 Z" fill="#050505"/></svg>
<div style="left:233.00px;top:537.75px;font-size:10.2px;line-height:1;color:#f0f3f5;font-weight:bold;white-space:pre;transform:scaleX(0.95);transform-origin:0 0">LOOP FILL</div>
<div style="left:180.20px;top:547.30px;width:155.70px;height:18.00px;background:#1d2a34"></div>
<div style="left:147.80px;top:547.30px;width:9.00px;height:18.00px;background:#080c0f"></div>
<div style="left:156.80px;top:547.30px;width:32.30px;height:18.00px;background:#e8b83a"></div>
<svg style="position:absolute;left:158.00px;top:550.80px;" width="15.00" height="11.00" viewBox="0 0 15 11"><path d="M0.5 5.5 H14" stroke="#fff" stroke-width="0.7"/><path d="M1.60 5.0 V6.0 M2.85 4.2 V6.8 M4.10 2.9 V8.1 M5.35 3.9 V7.1 M6.60 1.1 V9.9 M7.85 0.3 V10.7 M9.10 2.7 V8.3 M10.35 1.7 V9.3 M11.60 3.7 V7.3 M12.85 4.4 V6.6 M14.10 5.0 V6.0" stroke="#fff" stroke-width="0.9" fill="none"/></svg>
<div style="right:1350.50px;top:552.30px;font-size:8px;line-height:1;color:#4a3a10;white-space:pre;text-align:right;">26</div>
<div style="left:195.00px;top:550.50px;width:16.10px;height:12.20px;background:#4b5862;border-radius:2px"></div>
<div style="left:212.10px;top:550.50px;width:16.70px;height:12.20px;background:#4b5862;border-radius:2px"></div>
<svg style="position:absolute;left:199.70px;top:553.55px" width="7.20" height="6.60" viewBox="0 0 7.20 6.60"><path d="M0 6.1 V1.2 Q0 0 1.2 0 H6.7 V6.1 H4.95 V1.7 H4.2 V6.1 H2.5 V1.7 H1.75 V6.1 Z" fill="#050505"/></svg>
<svg style="position:absolute;left:217.40px;top:553.55px" width="6.60" height="6.60" viewBox="0 0 6.60 6.60"><path d="M6.1 0 H0.9 Q0 0 0 0.9 V3.4 Q0 3.9 0.6 3.9 H4.4 V4.4 H0 V6.1 H5.2 Q6.1 6.1 6.1 5.2 V2.9 Q6.1 2.3 5.5 2.3 H1.7 V1.7 H6.1 Z" fill="#050505"/></svg>
<div style="left:233.00px;top:552.70px;font-size:10.4px;line-height:1;color:#f0f3f5;font-weight:bold;white-space:pre;transform:scaleX(0.95);transform-origin:0 0">XTRA C</div>
<div style="left:180.20px;top:565.30px;width:155.70px;height:17.50px;background:#1d2a34"></div>
<div style="left:147.80px;top:565.30px;width:9.00px;height:17.50px;background:#080c0f"></div>
<div style="left:156.80px;top:565.30px;width:32.30px;height:17.50px;background:#e8b83a"></div>
<svg style="position:absolute;left:158.00px;top:568.55px;" width="15.00" height="11.00" viewBox="0 0 15 11"><path d="M0.5 5.5 H14" stroke="#fff" stroke-width="0.7"/><path d="M1.60 5.0 V6.0 M2.85 4.2 V6.8 M4.10 2.9 V8.1 M5.35 3.9 V7.1 M6.60 1.1 V9.9 M7.85 0.3 V10.7 M9.10 2.7 V8.3 M10.35 1.7 V9.3 M11.60 3.7 V7.3 M12.85 4.4 V6.6 M14.10 5.0 V6.0" stroke="#fff" stroke-width="0.9" fill="none"/></svg>
<div style="right:1350.50px;top:570.05px;font-size:8px;line-height:1;color:#4a3a10;white-space:pre;text-align:right;">27</div>
<div style="left:195.00px;top:568.50px;width:16.10px;height:11.70px;background:#4b5862;border-radius:2px"></div>
<div style="left:212.10px;top:568.50px;width:16.70px;height:11.70px;background:#4b5862;border-radius:2px"></div>
<svg style="position:absolute;left:199.70px;top:571.30px" width="7.20" height="6.60" viewBox="0 0 7.20 6.60"><path d="M0 6.1 V1.2 Q0 0 1.2 0 H6.7 V6.1 H4.95 V1.7 H4.2 V6.1 H2.5 V1.7 H1.75 V6.1 Z" fill="#050505"/></svg>
<svg style="position:absolute;left:217.40px;top:571.30px" width="6.60" height="6.60" viewBox="0 0 6.60 6.60"><path d="M6.1 0 H0.9 Q0 0 0 0.9 V3.4 Q0 3.9 0.6 3.9 H4.4 V4.4 H0 V6.1 H5.2 Q6.1 6.1 6.1 5.2 V2.9 Q6.1 2.3 5.5 2.3 H1.7 V1.7 H6.1 Z" fill="#050505"/></svg>
<div style="left:233.00px;top:570.45px;font-size:10.4px;line-height:1;color:#f0f3f5;font-weight:bold;white-space:pre;transform:scaleX(0.95);transform-origin:0 0">Tambo</div>
<div style="left:180.20px;top:582.80px;width:155.70px;height:17.60px;background:#1d2a34"></div>
<div style="left:147.80px;top:582.80px;width:32.40px;height:17.60px;background:#9aa9b6"></div>
<svg style="position:absolute;left:148.90px;top:586.10px;" width="15.00" height="11.00" viewBox="0 0 15 11"><path d="M0.5 5.5 H14" stroke="#fff" stroke-width="0.7"/><path d="M1.60 5.0 V6.0 M2.85 4.2 V6.8 M4.10 2.9 V8.1 M5.35 3.9 V7.1 M6.60 1.1 V9.9 M7.85 0.3 V10.7 M9.10 2.7 V8.3 M10.35 1.7 V9.3 M11.60 3.7 V7.3 M12.85 4.4 V6.6 M14.10 5.0 V6.0" stroke="#fff" stroke-width="0.9" fill="none"/></svg>
<div style="right:1359.00px;top:587.60px;font-size:8px;line-height:1;color:#3a4048;white-space:pre;text-align:right;">28</div>
<div style="left:186.20px;top:586.00px;width:16.50px;height:11.80px;background:#4b5862;border-radius:2px"></div>
<div style="left:203.70px;top:586.00px;width:16.30px;height:11.80px;background:#4b5862;border-radius:2px"></div>
<svg style="position:absolute;left:191.10px;top:588.85px" width="7.20" height="6.60" viewBox="0 0 7.20 6.60"><path d="M0 6.1 V1.2 Q0 0 1.2 0 H6.7 V6.1 H4.95 V1.7 H4.2 V6.1 H2.5 V1.7 H1.75 V6.1 Z" fill="#050505"/></svg>
<svg style="position:absolute;left:208.80px;top:588.85px" width="6.60" height="6.60" viewBox="0 0 6.60 6.60"><path d="M6.1 0 H0.9 Q0 0 0 0.9 V3.4 Q0 3.9 0.6 3.9 H4.4 V4.4 H0 V6.1 H5.2 Q6.1 6.1 6.1 5.2 V2.9 Q6.1 2.3 5.5 2.3 H1.7 V1.7 H6.1 Z" fill="#050505"/></svg>
<div style="left:224.30px;top:588.00px;font-size:10.4px;line-height:1;color:#f0f3f5;font-weight:bold;white-space:pre;transform:scaleX(0.95);transform-origin:0 0">CRASH</div>
<div style="left:180.20px;top:600.40px;width:155.70px;height:11.40px;background:#1d2a34"></div>
<div style="left:147.80px;top:600.40px;width:41.30px;height:11.40px;background:#e63838"></div>
<div style="left:189.10px;top:600.40px;width:146.80px;height:11.40px;background:#1d2a34"></div>
<svg style="position:absolute;left:150.00px;top:601.60px;" width="20.00" height="11.00" viewBox="0 0 20 11"><path d="M1 1.5 H6 L7 3 H13 V5 H4 L1 10 Z" fill="#f4f4f4"/><path d="M3 5.5 H17 L14 10.5 H1 Z" fill="#f4f4f4"/></svg>
<div style="left:195.00px;top:600.70px;width:16.10px;height:10.20px;background:#4b5862;border-radius:0.5px"></div>
<div style="left:212.10px;top:600.70px;width:16.70px;height:10.20px;background:#4b5862;border-radius:0.5px"></div>
<svg style="position:absolute;left:199.70px;top:602.75px" width="7.20" height="6.60" viewBox="0 0 7.20 6.60"><path d="M0 6.1 V1.2 Q0 0 1.2 0 H6.7 V6.1 H4.95 V1.7 H4.2 V6.1 H2.5 V1.7 H1.75 V6.1 Z" fill="#050505"/></svg>
<svg style="position:absolute;left:217.40px;top:602.75px" width="6.60" height="6.60" viewBox="0 0 6.60 6.60"><path d="M6.1 0 H0.9 Q0 0 0 0.9 V3.4 Q0 3.9 0.6 3.9 H4.4 V4.4 H0 V6.1 H5.2 Q6.1 6.1 6.1 5.2 V2.9 Q6.1 2.3 5.5 2.3 H1.7 V1.7 H6.1 Z" fill="#050505"/></svg>
<div style="left:235.10px;top:602.10px;font-size:10.2px;line-height:1;color:#f0f3f5;font-weight:bold;white-space:pre;transform:scaleX(0.95);transform-origin:0 0">CLAPS</div>
<div style="left:180.20px;top:611.80px;width:155.70px;height:17.70px;background:#1d2a34"></div>
<div style="left:147.80px;top:611.80px;width:9.00px;height:17.70px;background:#080c0f"></div>
<div style="left:156.80px;top:611.80px;width:32.30px;height:17.70px;background:#e63838"></div>
<svg style="position:absolute;left:158.00px;top:615.15px;" width="15.00" height="11.00" viewBox="0 0 15 11"><path d="M0.5 5.5 H14" stroke="#fff" stroke-width="0.7"/><path d="M1.60 5.0 V6.0 M2.85 4.2 V6.8 M4.10 2.9 V8.1 M5.35 3.9 V7.1 M6.60 1.1 V9.9 M7.85 0.3 V10.7 M9.10 2.7 V8.3 M10.35 1.7 V9.3 M11.60 3.7 V7.3 M12.85 4.4 V6.6 M14.10 5.0 V6.0" stroke="#fff" stroke-width="0.9" fill="none"/></svg>
<div style="right:1350.50px;top:616.65px;font-size:8px;line-height:1;color:#8a1a1a;white-space:pre;text-align:right;">29</div>
<div style="left:195.00px;top:615.00px;width:16.10px;height:11.90px;background:#4b5862;border-radius:2px"></div>
<div style="left:212.10px;top:615.00px;width:16.70px;height:11.90px;background:#4b5862;border-radius:2px"></div>
<svg style="position:absolute;left:199.70px;top:617.90px" width="7.20" height="6.60" viewBox="0 0 7.20 6.60"><path d="M0 6.1 V1.2 Q0 0 1.2 0 H6.7 V6.1 H4.95 V1.7 H4.2 V6.1 H2.5 V1.7 H1.75 V6.1 Z" fill="#050505"/></svg>
<svg style="position:absolute;left:217.40px;top:617.90px" width="6.60" height="6.60" viewBox="0 0 6.60 6.60"><path d="M6.1 0 H0.9 Q0 0 0 0.9 V3.4 Q0 3.9 0.6 3.9 H4.4 V4.4 H0 V6.1 H5.2 Q6.1 6.1 6.1 5.2 V2.9 Q6.1 2.3 5.5 2.3 H1.7 V1.7 H6.1 Z" fill="#050505"/></svg>
<div style="left:233.00px;top:617.05px;font-size:10.4px;line-height:1;color:#f0f3f5;font-weight:bold;white-space:pre;transform:scaleX(0.95);transform-origin:0 0">CLAP1</div>
<div style="left:180.20px;top:629.50px;width:155.70px;height:17.50px;background:#1d2a34"></div>
<div style="left:147.80px;top:629.50px;width:9.00px;height:17.50px;background:#080c0f"></div>
<div style="left:156.80px;top:629.50px;width:32.30px;height:17.50px;background:#e63838"></div>
<svg style="position:absolute;left:158.00px;top:632.75px;" width="15.00" height="11.00" viewBox="0 0 15 11"><path d="M0.5 5.5 H14" stroke="#fff" stroke-width="0.7"/><path d="M1.60 5.0 V6.0 M2.85 4.2 V6.8 M4.10 2.9 V8.1 M5.35 3.9 V7.1 M6.60 1.1 V9.9 M7.85 0.3 V10.7 M9.10 2.7 V8.3 M10.35 1.7 V9.3 M11.60 3.7 V7.3 M12.85 4.4 V6.6 M14.10 5.0 V6.0" stroke="#fff" stroke-width="0.9" fill="none"/></svg>
<div style="right:1350.50px;top:634.25px;font-size:8px;line-height:1;color:#8a1a1a;white-space:pre;text-align:right;">30</div>
<div style="left:195.00px;top:632.70px;width:16.10px;height:11.70px;background:#4b5862;border-radius:2px"></div>
<div style="left:212.10px;top:632.70px;width:16.70px;height:11.70px;background:#4b5862;border-radius:2px"></div>
<svg style="position:absolute;left:199.70px;top:635.50px" width="7.20" height="6.60" viewBox="0 0 7.20 6.60"><path d="M0 6.1 V1.2 Q0 0 1.2 0 H6.7 V6.1 H4.95 V1.7 H4.2 V6.1 H2.5 V1.7 H1.75 V6.1 Z" fill="#050505"/></svg>
<svg style="position:absolute;left:217.40px;top:635.50px" width="6.60" height="6.60" viewBox="0 0 6.60 6.60"><path d="M6.1 0 H0.9 Q0 0 0 0.9 V3.4 Q0 3.9 0.6 3.9 H4.4 V4.4 H0 V6.1 H5.2 Q6.1 6.1 6.1 5.2 V2.9 Q6.1 2.3 5.5 2.3 H1.7 V1.7 H6.1 Z" fill="#050505"/></svg>
<div style="left:233.00px;top:634.65px;font-size:10.4px;line-height:1;color:#f0f3f5;font-weight:bold;white-space:pre;transform:scaleX(0.95);transform-origin:0 0">CLAP2</div>
<div style="left:180.20px;top:647.00px;width:155.70px;height:17.70px;background:#1d2a34"></div>
<div style="left:147.80px;top:647.00px;width:9.00px;height:17.70px;background:#080c0f"></div>
<div style="left:156.80px;top:647.00px;width:32.30px;height:17.70px;background:#e63838"></div>
<svg style="position:absolute;left:158.00px;top:650.35px;" width="15.00" height="11.00" viewBox="0 0 15 11"><path d="M0.5 5.5 H14" stroke="#fff" stroke-width="0.7"/><path d="M1.60 5.0 V6.0 M2.85 4.2 V6.8 M4.10 2.9 V8.1 M5.35 3.9 V7.1 M6.60 1.1 V9.9 M7.85 0.3 V10.7 M9.10 2.7 V8.3 M10.35 1.7 V9.3 M11.60 3.7 V7.3 M12.85 4.4 V6.6 M14.10 5.0 V6.0" stroke="#fff" stroke-width="0.9" fill="none"/></svg>
<div style="right:1350.50px;top:651.85px;font-size:8px;line-height:1;color:#8a1a1a;white-space:pre;text-align:right;">31</div>
<div style="left:195.00px;top:650.20px;width:16.10px;height:11.90px;background:#4b5862;border-radius:2px"></div>
<div style="left:212.10px;top:650.20px;width:16.70px;height:11.90px;background:#4b5862;border-radius:2px"></div>
<svg style="position:absolute;left:199.70px;top:653.10px" width="7.20" height="6.60" viewBox="0 0 7.20 6.60"><path d="M0 6.1 V1.2 Q0 0 1.2 0 H6.7 V6.1 H4.95 V1.7 H4.2 V6.1 H2.5 V1.7 H1.75 V6.1 Z" fill="#050505"/></svg>
<svg style="position:absolute;left:217.40px;top:653.10px" width="6.60" height="6.60" viewBox="0 0 6.60 6.60"><path d="M6.1 0 H0.9 Q0 0 0 0.9 V3.4 Q0 3.9 0.6 3.9 H4.4 V4.4 H0 V6.1 H5.2 Q6.1 6.1 6.1 5.2 V2.9 Q6.1 2.3 5.5 2.3 H1.7 V1.7 H6.1 Z" fill="#050505"/></svg>
<div style="left:233.00px;top:652.25px;font-size:10.4px;line-height:1;color:#f0f3f5;font-weight:bold;white-space:pre;transform:scaleX(0.95);transform-origin:0 0">CLAP3</div>
<div style="left:180.20px;top:664.70px;width:155.70px;height:17.80px;background:#1d2a34"></div>
<div style="left:147.80px;top:664.70px;width:32.40px;height:17.80px;background:#e03a88"></div>
<svg style="position:absolute;left:148.90px;top:668.10px;" width="15.00" height="11.00" viewBox="0 0 15 11"><path d="M0.5 5.5 H14" stroke="#fff" stroke-width="0.7"/><path d="M1.60 5.0 V6.0 M2.85 4.2 V6.8 M4.10 2.9 V8.1 M5.35 3.9 V7.1 M6.60 1.1 V9.9 M7.85 0.3 V10.7 M9.10 2.7 V8.3 M10.35 1.7 V9.3 M11.60 3.7 V7.3 M12.85 4.4 V6.6 M14.10 5.0 V6.0" stroke="#fff" stroke-width="0.9" fill="none"/></svg>
<div style="right:1359.00px;top:669.60px;font-size:8px;line-height:1;color:#8a1a4a;white-space:pre;text-align:right;">32</div>
<div style="left:186.20px;top:667.90px;width:16.50px;height:12.00px;background:#4b5862;border-radius:2px"></div>
<div style="left:203.70px;top:667.90px;width:16.30px;height:12.00px;background:#4b5862;border-radius:2px"></div>
<svg style="position:absolute;left:191.10px;top:670.85px" width="7.20" height="6.60" viewBox="0 0 7.20 6.60"><path d="M0 6.1 V1.2 Q0 0 1.2 0 H6.7 V6.1 H4.95 V1.7 H4.2 V6.1 H2.5 V1.7 H1.75 V6.1 Z" fill="#050505"/></svg>
<svg style="position:absolute;left:208.80px;top:670.85px" width="6.60" height="6.60" viewBox="0 0 6.60 6.60"><path d="M6.1 0 H0.9 Q0 0 0 0.9 V3.4 Q0 3.9 0.6 3.9 H4.4 V4.4 H0 V6.1 H5.2 Q6.1 6.1 6.1 5.2 V2.9 Q6.1 2.3 5.5 2.3 H1.7 V1.7 H6.1 Z" fill="#050505"/></svg>
<div style="left:224.30px;top:670.00px;font-size:10.4px;line-height:1;color:#f0f3f5;font-weight:bold;white-space:pre;transform:scaleX(0.95);transform-origin:0 0">DRUM FILL</div>
<div style="left:180.20px;top:682.50px;width:155.70px;height:17.50px;background:#1d2a34"></div>
<div style="left:147.80px;top:682.50px;width:32.40px;height:17.50px;background:#e03a88"></div>
<svg style="position:absolute;left:148.90px;top:685.75px;" width="15.00" height="11.00" viewBox="0 0 15 11"><path d="M0.5 5.5 H14" stroke="#fff" stroke-width="0.7"/><path d="M1.60 5.0 V6.0 M2.85 4.2 V6.8 M4.10 2.9 V8.1 M5.35 3.9 V7.1 M6.60 1.1 V9.9 M7.85 0.3 V10.7 M9.10 2.7 V8.3 M10.35 1.7 V9.3 M11.60 3.7 V7.3 M12.85 4.4 V6.6 M14.10 5.0 V6.0" stroke="#fff" stroke-width="0.9" fill="none"/></svg>
<div style="right:1359.00px;top:687.25px;font-size:8px;line-height:1;color:#8a1a4a;white-space:pre;text-align:right;">33</div>
<div style="left:186.20px;top:685.70px;width:16.50px;height:11.70px;background:#4b5862;border-radius:2px"></div>
<div style="left:203.70px;top:685.70px;width:16.30px;height:11.70px;background:#4b5862;border-radius:2px"></div>
<svg style="position:absolute;left:191.10px;top:688.50px" width="7.20" height="6.60" viewBox="0 0 7.20 6.60"><path d="M0 6.1 V1.2 Q0 0 1.2 0 H6.7 V6.1 H4.95 V1.7 H4.2 V6.1 H2.5 V1.7 H1.75 V6.1 Z" fill="#050505"/></svg>
<svg style="position:absolute;left:208.80px;top:688.50px" width="6.60" height="6.60" viewBox="0 0 6.60 6.60"><path d="M6.1 0 H0.9 Q0 0 0 0.9 V3.4 Q0 3.9 0.6 3.9 H4.4 V4.4 H0 V6.1 H5.2 Q6.1 6.1 6.1 5.2 V2.9 Q6.1 2.3 5.5 2.3 H1.7 V1.7 H6.1 Z" fill="#050505"/></svg>
<div style="left:224.30px;top:687.65px;font-size:10.4px;line-height:1;color:#f0f3f5;font-weight:bold;white-space:pre;transform:scaleX(0.95);transform-origin:0 0">Snare Fill</div>
<div style="left:180.20px;top:700.00px;width:155.70px;height:17.70px;background:#1d2a34"></div>
<div style="left:147.80px;top:700.00px;width:32.40px;height:17.70px;background:#e03a88"></div>
<svg style="position:absolute;left:148.90px;top:703.35px;" width="15.00" height="11.00" viewBox="0 0 15 11"><path d="M0.5 5.5 H14" stroke="#fff" stroke-width="0.7"/><path d="M1.60 5.0 V6.0 M2.85 4.2 V6.8 M4.10 2.9 V8.1 M5.35 3.9 V7.1 M6.60 1.1 V9.9 M7.85 0.3 V10.7 M9.10 2.7 V8.3 M10.35 1.7 V9.3 M11.60 3.7 V7.3 M12.85 4.4 V6.6 M14.10 5.0 V6.0" stroke="#fff" stroke-width="0.9" fill="none"/></svg>
<div style="right:1359.00px;top:704.85px;font-size:8px;line-height:1;color:#8a1a4a;white-space:pre;text-align:right;">34</div>
<div style="left:186.20px;top:703.20px;width:16.50px;height:11.90px;background:#4b5862;border-radius:2px"></div>
<div style="left:203.70px;top:703.20px;width:16.30px;height:11.90px;background:#4b5862;border-radius:2px"></div>
<svg style="position:absolute;left:191.10px;top:706.10px" width="7.20" height="6.60" viewBox="0 0 7.20 6.60"><path d="M0 6.1 V1.2 Q0 0 1.2 0 H6.7 V6.1 H4.95 V1.7 H4.2 V6.1 H2.5 V1.7 H1.75 V6.1 Z" fill="#050505"/></svg>
<svg style="position:absolute;left:208.80px;top:706.10px" width="6.60" height="6.60" viewBox="0 0 6.60 6.60"><path d="M6.1 0 H0.9 Q0 0 0 0.9 V3.4 Q0 3.9 0.6 3.9 H4.4 V4.4 H0 V6.1 H5.2 Q6.1 6.1 6.1 5.2 V2.9 Q6.1 2.3 5.5 2.3 H1.7 V1.7 H6.1 Z" fill="#050505"/></svg>
<div style="left:224.30px;top:705.25px;font-size:10.4px;line-height:1;color:#f0f3f5;font-weight:bold;white-space:pre;transform:scaleX(0.95);transform-origin:0 0">Sweep Down</div>
<div style="left:180.20px;top:717.70px;width:155.70px;height:15.30px;background:#1d2a34"></div>
<div style="left:147.80px;top:717.70px;width:32.40px;height:15.30px;background:#ffffff"></div>
<svg style="position:absolute;left:151.00px;top:719.70px;" width="18.00" height="13.00" viewBox="0 0 18 13"><path d="M1 2 H6 L7.5 3.5 H15 V12 H1 Z" fill="none" stroke="#d8d8d8" stroke-width="1"/></svg>
<div style="left:188.50px;top:721.15px;font-size:8.8px;line-height:1;color:#e8ecef;font-weight:bold;white-space:pre;transform:scaleX(0.95);transform-origin:0 0">Group Tracks</div>
<div style="left:180.20px;top:733.00px;width:155.70px;height:11.70px;background:#1d2a34"></div>
<div style="left:147.80px;top:733.00px;width:41.30px;height:11.70px;background:#ffffff"></div>
<div style="left:189.10px;top:733.00px;width:146.80px;height:11.70px;background:#1d2a34"></div>
<svg style="position:absolute;left:150.00px;top:734.35px;" width="20.00" height="11.00" viewBox="0 0 20 11"><path d="M1 1.5 H6 L7 3 H13 V5 H4 L1 10 Z" fill="#d8d8d8"/><path d="M3 5.5 H17 L14 10.5 H1 Z" fill="#d8d8d8"/></svg>
<div style="left:195.00px;top:733.30px;width:16.10px;height:10.50px;background:#4b5862;border-radius:0.5px"></div>
<div style="left:212.10px;top:733.30px;width:16.70px;height:10.50px;background:#4b5862;border-radius:0.5px"></div>
<svg style="position:absolute;left:199.70px;top:735.50px" width="7.20" height="6.60" viewBox="0 0 7.20 6.60"><path d="M0 6.1 V1.2 Q0 0 1.2 0 H6.7 V6.1 H4.95 V1.7 H4.2 V6.1 H2.5 V1.7 H1.75 V6.1 Z" fill="#050505"/></svg>
<svg style="position:absolute;left:217.40px;top:735.50px" width="6.60" height="6.60" viewBox="0 0 6.60 6.60"><path d="M6.1 0 H0.9 Q0 0 0 0.9 V3.4 Q0 3.9 0.6 3.9 H4.4 V4.4 H0 V6.1 H5.2 Q6.1 6.1 6.1 5.2 V2.9 Q6.1 2.3 5.5 2.3 H1.7 V1.7 H6.1 Z" fill="#050505"/></svg>
<div style="left:235.10px;top:734.85px;font-size:10.2px;line-height:1;color:#f0f3f5;font-weight:bold;white-space:pre;transform:scaleX(0.95);transform-origin:0 0">GROUPS</div>
<div style="left:180.20px;top:744.70px;width:155.70px;height:11.30px;background:#1d2a34"></div>
<div style="left:147.80px;top:744.70px;width:9.00px;height:11.30px;background:#080c0f"></div>
<div style="left:156.80px;top:744.70px;width:32.30px;height:11.30px;background:#ffffff"></div>
<svg style="position:absolute;left:158.60px;top:745.30px;" width="15.00" height="7.70" viewBox="0 0 15 7.699999999999955"><rect x="0.6" y="0.6" width="12.3" height="6.10" rx="1" fill="#fff" stroke="#d6d6d6" stroke-width="1.1"/><path d="M4.50 0.6 V6.70 M9.00 0.6 V6.70" stroke="#d6d6d6" stroke-width="1.1"/><path d="M4.50 0.6 V3.89 M9.00 0.6 V3.89" stroke="#dcdcdc" stroke-width="2.2"/></svg>
<div style="right:1350.50px;top:746.60px;font-size:7.5px;line-height:1;color:#3a3a3a;white-space:pre;text-align:right;">35</div>
<div style="left:195.00px;top:745.00px;width:16.10px;height:10.10px;background:#4b5862;border-radius:0.5px"></div>
<div style="left:212.10px;top:745.00px;width:16.70px;height:10.10px;background:#4b5862;border-radius:0.5px"></div>
<svg style="position:absolute;left:199.70px;top:747.00px" width="7.20" height="6.60" viewBox="0 0 7.20 6.60"><path d="M0 6.1 V1.2 Q0 0 1.2 0 H6.7 V6.1 H4.95 V1.7 H4.2 V6.1 H2.5 V1.7 H1.75 V6.1 Z" fill="#050505"/></svg>
<svg style="position:absolute;left:217.40px;top:747.00px" width="6.60" height="6.60" viewBox="0 0 6.60 6.60"><path d="M6.1 0 H0.9 Q0 0 0 0.9 V3.4 Q0 3.9 0.6 3.9 H4.4 V4.4 H0 V6.1 H5.2 Q6.1 6.1 6.1 5.2 V2.9 Q6.1 2.3 5.5 2.3 H1.7 V1.7 H6.1 Z" fill="#050505"/></svg>
<div style="left:233.00px;top:746.35px;font-size:10.2px;line-height:1;color:#f0f3f5;font-weight:bold;white-space:pre;transform:scaleX(0.95);transform-origin:0 0">HATS GROUP</div>
<div style="left:231.50px;top:744.90px;width:98.50px;height:10.40px;border:1px solid #3e4b55;background:rgba(0,0,0,0.05)"></div>
<div style="left:180.20px;top:756.00px;width:155.70px;height:11.40px;background:#1d2a34"></div>
<div style="left:147.80px;top:756.00px;width:9.00px;height:11.40px;background:#080c0f"></div>
<div style="left:156.80px;top:756.00px;width:32.30px;height:11.40px;background:#ffffff"></div>
<svg style="position:absolute;left:158.60px;top:756.60px;" width="15.00" height="7.80" viewBox="0 0 15 7.799999999999978"><rect x="0.6" y="0.6" width="12.3" height="6.20" rx="1" fill="#fff" stroke="#d6d6d6" stroke-width="1.1"/><path d="M4.50 0.6 V6.80 M9.00 0.6 V6.80" stroke="#d6d6d6" stroke-width="1.1"/><path d="M4.50 0.6 V3.94 M9.00 0.6 V3.94" stroke="#dcdcdc" stroke-width="2.2"/></svg>
<div style="right:1350.50px;top:757.95px;font-size:7.5px;line-height:1;color:#3a3a3a;white-space:pre;text-align:right;">36</div>
<div style="left:195.00px;top:756.30px;width:16.10px;height:10.20px;background:#4b5862;border-radius:0.5px"></div>
<div style="left:212.10px;top:756.30px;width:16.70px;height:10.20px;background:#4b5862;border-radius:0.5px"></div>
<svg style="position:absolute;left:199.70px;top:758.35px" width="7.20" height="6.60" viewBox="0 0 7.20 6.60"><path d="M0 6.1 V1.2 Q0 0 1.2 0 H6.7 V6.1 H4.95 V1.7 H4.2 V6.1 H2.5 V1.7 H1.75 V6.1 Z" fill="#050505"/></svg>
<svg style="position:absolute;left:217.40px;top:758.35px" width="6.60" height="6.60" viewBox="0 0 6.60 6.60"><path d="M6.1 0 H0.9 Q0 0 0 0.9 V3.4 Q0 3.9 0.6 3.9 H4.4 V4.4 H0 V6.1 H5.2 Q6.1 6.1 6.1 5.2 V2.9 Q6.1 2.3 5.5 2.3 H1.7 V1.7 H6.1 Z" fill="#050505"/></svg>
<div style="left:233.00px;top:757.70px;font-size:10.2px;line-height:1;color:#f0f3f5;font-weight:bold;white-space:pre;transform:scaleX(0.95);transform-origin:0 0">CLAPS GROUP</div>
<div style="left:180.20px;top:767.40px;width:155.70px;height:11.20px;background:#1d2a34"></div>
<div style="left:147.80px;top:767.40px;width:9.00px;height:11.20px;background:#080c0f"></div>
<div style="left:156.80px;top:767.40px;width:32.30px;height:11.20px;background:#ffffff"></div>
<svg style="position:absolute;left:158.60px;top:768.00px;" width="15.00" height="7.60" viewBox="0 0 15 7.600000000000046"><rect x="0.6" y="0.6" width="12.3" height="6.00" rx="1" fill="#fff" stroke="#d6d6d6" stroke-width="1.1"/><path d="M4.50 0.6 V6.60 M9.00 0.6 V6.60" stroke="#d6d6d6" stroke-width="1.1"/><path d="M4.50 0.6 V3.83 M9.00 0.6 V3.83" stroke="#dcdcdc" stroke-width="2.2"/></svg>
<div style="right:1350.50px;top:769.25px;font-size:7.5px;line-height:1;color:#3a3a3a;white-space:pre;text-align:right;">37</div>
<div style="left:195.00px;top:767.70px;width:16.10px;height:10.00px;background:#4b5862;border-radius:0.5px"></div>
<div style="left:212.10px;top:767.70px;width:16.70px;height:10.00px;background:#4b5862;border-radius:0.5px"></div>
<svg style="position:absolute;left:199.70px;top:769.65px" width="7.20" height="6.60" viewBox="0 0 7.20 6.60"><path d="M0 6.1 V1.2 Q0 0 1.2 0 H6.7 V6.1 H4.95 V1.7 H4.2 V6.1 H2.5 V1.7 H1.75 V6.1 Z" fill="#050505"/></svg>
<svg style="position:absolute;left:217.40px;top:769.65px" width="6.60" height="6.60" viewBox="0 0 6.60 6.60"><path d="M6.1 0 H0.9 Q0 0 0 0.9 V3.4 Q0 3.9 0.6 3.9 H4.4 V4.4 H0 V6.1 H5.2 Q6.1 6.1 6.1 5.2 V2.9 Q6.1 2.3 5.5 2.3 H1.7 V1.7 H6.1 Z" fill="#050505"/></svg>
<div style="left:233.00px;top:769.00px;font-size:10.2px;line-height:1;color:#f0f3f5;font-weight:bold;white-space:pre;transform:scaleX(0.95);transform-origin:0 0">DRUMS</div>
<div style="left:147.80px;top:151.05px;width:188.10px;height:1.10px;background:#52606a"></div>
<div style="left:147.80px;top:168.85px;width:188.10px;height:1.10px;background:#52606a"></div>
<div style="left:147.80px;top:186.65px;width:188.10px;height:1.10px;background:#52606a"></div>
<div style="left:147.80px;top:197.95px;width:188.10px;height:1.10px;background:#52606a"></div>
<div style="left:147.80px;top:215.35px;width:188.10px;height:1.10px;background:#52606a"></div>
<div style="left:147.80px;top:232.95px;width:188.10px;height:1.10px;background:#52606a"></div>
<div style="left:147.80px;top:250.75px;width:188.10px;height:1.10px;background:#52606a"></div>
<div style="left:147.80px;top:268.15px;width:188.10px;height:1.10px;background:#52606a"></div>
<div style="left:147.80px;top:285.85px;width:188.10px;height:1.10px;background:#52606a"></div>
<div style="left:147.80px;top:303.65px;width:188.10px;height:1.10px;background:#52606a"></div>
<div style="left:147.80px;top:321.25px;width:188.10px;height:1.10px;background:#52606a"></div>
<div style="left:147.80px;top:339.05px;width:188.10px;height:1.10px;background:#52606a"></div>
<div style="left:147.80px;top:356.45px;width:188.10px;height:1.10px;background:#52606a"></div>
<div style="left:147.80px;top:374.15px;width:188.10px;height:1.10px;background:#52606a"></div>
<div style="left:147.80px;top:391.75px;width:188.10px;height:1.10px;background:#52606a"></div>
<div style="left:147.80px;top:409.55px;width:188.10px;height:1.10px;background:#52606a"></div>
<div style="left:147.80px;top:426.75px;width:188.10px;height:1.10px;background:#52606a"></div>
<div style="left:147.80px;top:438.25px;width:188.10px;height:1.10px;background:#52606a"></div>
<div style="left:147.80px;top:455.85px;width:188.10px;height:1.10px;background:#52606a"></div>
<div style="left:147.80px;top:466.95px;width:188.10px;height:1.10px;background:#52606a"></div>
<div style="left:147.80px;top:478.15px;width:188.10px;height:1.10px;background:#52606a"></div>
<div style="left:147.80px;top:489.45px;width:188.10px;height:1.10px;background:#52606a"></div>
<div style="left:147.80px;top:507.05px;width:188.10px;height:1.10px;background:#52606a"></div>
<div style="left:147.80px;top:524.85px;width:188.10px;height:1.10px;background:#52606a"></div>
<div style="left:147.80px;top:535.65px;width:188.10px;height:1.10px;background:#52606a"></div>
<div style="left:147.80px;top:546.75px;width:188.10px;height:1.10px;background:#52606a"></div>
<div style="left:147.80px;top:564.75px;width:188.10px;height:1.10px;background:#52606a"></div>
<div style="left:147.80px;top:582.25px;width:188.10px;height:1.10px;background:#52606a"></div>
<div style="left:147.80px;top:599.85px;width:188.10px;height:1.10px;background:#52606a"></div>
<div style="left:147.80px;top:611.25px;width:188.10px;height:1.10px;background:#52606a"></div>
<div style="left:147.80px;top:628.95px;width:188.10px;height:1.10px;background:#52606a"></div>
<div style="left:147.80px;top:646.45px;width:188.10px;height:1.10px;background:#52606a"></div>
<div style="left:147.80px;top:664.15px;width:188.10px;height:1.10px;background:#52606a"></div>
<div style="left:147.80px;top:681.95px;width:188.10px;height:1.10px;background:#52606a"></div>
<div style="left:147.80px;top:699.45px;width:188.10px;height:1.10px;background:#52606a"></div>
<div style="left:147.80px;top:717.15px;width:188.10px;height:1.10px;background:#52606a"></div>
<div style="left:147.80px;top:732.45px;width:188.10px;height:1.10px;background:#52606a"></div>
<div style="left:147.80px;top:744.15px;width:188.10px;height:1.10px;background:#52606a"></div>
<div style="left:147.80px;top:755.45px;width:188.10px;height:1.10px;background:#52606a"></div>
<div style="left:147.80px;top:766.85px;width:188.10px;height:1.10px;background:#52606a"></div>
<div style="left:147.80px;top:778.05px;width:188.10px;height:1.10px;background:#52606a"></div>
<div style="left:153.80px;top:780.80px;font-size:9.2px;line-height:1;color:#a8b3bb;white-space:pre;">Standard</div>
<svg style="position:absolute;left:314.00px;top:782.00px;" width="9.00" height="6.00" viewBox="0 0 9 6"><path d="M0.5 0.5 H8.5 L4.5 5.5 Z" fill="#76838d"/></svg>
<svg style="position:absolute;left:330.00px;top:779.50px;" width="11.00" height="11.00" viewBox="0 0 11 11"><g transform="translate(5.5,5.5)"><rect x="-1.2" y="-5.0" width="2.4" height="10" fill="#76838d" transform="rotate(0)"/><rect x="-1.2" y="-5.0" width="2.4" height="10" fill="#76838d" transform="rotate(45)"/><rect x="-1.2" y="-5.0" width="2.4" height="10" fill="#76838d" transform="rotate(90)"/><rect x="-1.2" y="-5.0" width="2.4" height="10" fill="#76838d" transform="rotate(135)"/><rect x="-1.2" y="-5.0" width="2.4" height="10" fill="#76838d" transform="rotate(180)"/><rect x="-1.2" y="-5.0" width="2.4" height="10" fill="#76838d" transform="rotate(225)"/><rect x="-1.2" y="-5.0" width="2.4" height="10" fill="#76838d" transform="rotate(270)"/><rect x="-1.2" y="-5.0" width="2.4" height="10" fill="#76838d" transform="rotate(315)"/><circle r="3.6300000000000003" fill="#76838d"/><circle r="1.54" fill="#1d2a34"/></g></svg>
<svg style="position:absolute;left:0;top:0" width="1536" height="831" viewBox="0 0 1536 831"><defs><pattern id="p1" patternUnits="userSpaceOnUse" x="354.100" y="0.000" width="7.036" height="30.000"><rect width="7.036" height="30" fill="#48ade8"/><rect width="0.9" height="30" fill="#2a7cbc"/></pattern><pattern id="p2" patternUnits="userSpaceOnUse" x="354.100" y="438.800" width="7.036" height="17.600"><rect width="7.036" height="17.599999999999966" fill="#2a88cf"/><rect width="0.9" height="17.599999999999966" fill="#62b4ec"/><rect x="3" y="5.28" width="1.3" height="7.04" fill="#0e2a44"/><rect x="5.2" y="7.04" width="0.8" height="3.52" fill="#1a4060"/></pattern><pattern id="p3" patternUnits="userSpaceOnUse" x="410.888" y="0.000" width="14.072" height="30.000"><rect width="14.072" height="30" fill="#e9b83e"/><rect width="0.9" height="30" fill="#b48a1c"/></pattern><pattern id="p4" patternUnits="userSpaceOnUse" x="643.076" y="0.000" width="14.072" height="30.000"><rect width="14.072" height="30" fill="#e9b83e"/><rect width="0.9" height="30" fill="#b48a1c"/></pattern><pattern id="p5" patternUnits="userSpaceOnUse" x="804.904" y="0.000" width="14.072" height="30.000"><rect width="14.072" height="30" fill="#e9b83e"/><rect width="0.9" height="30" fill="#b48a1c"/></pattern><pattern id="p6" patternUnits="userSpaceOnUse" x="1008.948" y="0.000" width="14.072" height="30.000"><rect width="14.072" height="30" fill="#e9b83e"/><rect width="0.9" height="30" fill="#b48a1c"/></pattern><pattern id="p7" patternUnits="userSpaceOnUse" x="1184.848" y="0.000" width="14.072" height="30.000"><rect width="14.072" height="30" fill="#e9b83e"/><rect width="0.9" height="30" fill="#b48a1c"/></pattern><pattern id="p8" patternUnits="userSpaceOnUse" x="1304.460" y="0.000" width="14.072" height="30.000"><rect width="14.072" height="30" fill="#e9b83e"/><rect width="0.9" height="30" fill="#b48a1c"/></pattern><pattern id="p9" patternUnits="userSpaceOnUse" x="382.744" y="0.000" width="7.036" height="30.000"><rect width="7.036" height="30" fill="#e9b83e"/><rect width="0.9" height="30" fill="#b48a1c"/></pattern><pattern id="p10" patternUnits="userSpaceOnUse" x="551.608" y="0.000" width="7.036" height="30.000"><rect width="7.036" height="30" fill="#e9b83e"/><rect width="0.9" height="30" fill="#b48a1c"/></pattern><pattern id="p11" patternUnits="userSpaceOnUse" x="614.932" y="0.000" width="7.036" height="30.000"><rect width="7.036" height="30" fill="#e9b83e"/><rect width="0.9" height="30" fill="#b48a1c"/></pattern><pattern id="p12" patternUnits="userSpaceOnUse" x="410.888" y="0.000" width="14.072" height="30.000"><rect width="14.072" height="30" fill="#e9b83e"/><rect width="0.9" height="30" fill="#b48a1c"/></pattern><pattern id="p13" patternUnits="userSpaceOnUse" x="410.888" y="0.000" width="14.072" height="30.000"><rect width="14.072" height="30" fill="#e9b83e"/><rect width="0.9" height="30" fill="#b48a1c"/></pattern><pattern id="p14" patternUnits="userSpaceOnUse" x="804.904" y="0.000" width="14.072" height="30.000"><rect width="14.072" height="30" fill="#e9b83e"/><rect width="0.9" height="30" fill="#b48a1c"/></pattern><pattern id="p15" patternUnits="userSpaceOnUse" x="804.904" y="0.000" width="14.072" height="30.000"><rect width="14.072" height="30" fill="#e9b83e"/><rect width="0.9" height="30" fill="#b48a1c"/></pattern><pattern id="p16" patternUnits="userSpaceOnUse" x="1008.948" y="0.000" width="14.072" height="30.000"><rect width="14.072" height="30" fill="#e9b83e"/><rect width="0.9" height="30" fill="#b48a1c"/></pattern><pattern id="p17" patternUnits="userSpaceOnUse" x="1008.948" y="0.000" width="14.072" height="30.000"><rect width="14.072" height="30" fill="#e9b83e"/><rect width="0.9" height="30" fill="#b48a1c"/></pattern><pattern id="p18" patternUnits="userSpaceOnUse" x="1184.848" y="0.000" width="14.072" height="30.000"><rect width="14.072" height="30" fill="#e9b83e"/><rect width="0.9" height="30" fill="#b48a1c"/></pattern><pattern id="p19" patternUnits="userSpaceOnUse" x="1184.848" y="0.000" width="14.072" height="30.000"><rect width="14.072" height="30" fill="#e9b83e"/><rect width="0.9" height="30" fill="#b48a1c"/></pattern><pattern id="p20" patternUnits="userSpaceOnUse" x="1304.460" y="0.000" width="14.072" height="30.000"><rect width="14.072" height="30" fill="#e9b83e"/><rect width="0.9" height="30" fill="#b48a1c"/></pattern><pattern id="p21" patternUnits="userSpaceOnUse" x="1304.460" y="0.000" width="14.072" height="30.000"><rect width="14.072" height="30" fill="#e9b83e"/><rect width="0.9" height="30" fill="#b48a1c"/></pattern><pattern id="p22" patternUnits="userSpaceOnUse" x="1360.748" y="0.000" width="14.072" height="30.000"><rect width="14.072" height="30" fill="#e9b83e"/><rect width="0.9" height="30" fill="#b48a1c"/></pattern><pattern id="p23" patternUnits="userSpaceOnUse" x="1360.748" y="0.000" width="14.072" height="30.000"><rect width="14.072" height="30" fill="#e9b83e"/><rect width="0.9" height="30" fill="#b48a1c"/></pattern><pattern id="p24" patternUnits="userSpaceOnUse" x="410.888" y="0.000" width="7.036" height="30.000"><rect width="7.036" height="30" fill="#b08a22"/><rect x="1.5" width="3.8" height="30" fill="#8a6a0e"/><rect width="0.9" height="30" fill="#e8b840"/></pattern><pattern id="p25" patternUnits="userSpaceOnUse" x="643.076" y="0.000" width="7.036" height="30.000"><rect width="7.036" height="30" fill="#b08a22"/><rect x="1.5" width="3.8" height="30" fill="#8a6a0e"/><rect width="0.9" height="30" fill="#e8b840"/></pattern><pattern id="p26" patternUnits="userSpaceOnUse" x="804.904" y="0.000" width="7.036" height="30.000"><rect width="7.036" height="30" fill="#b08a22"/><rect x="1.5" width="3.8" height="30" fill="#8a6a0e"/><rect width="0.9" height="30" fill="#e8b840"/></pattern><pattern id="p27" patternUnits="userSpaceOnUse" x="889.336" y="0.000" width="7.036" height="30.000"><rect width="7.036" height="30" fill="#b08a22"/><rect x="1.5" width="3.8" height="30" fill="#8a6a0e"/><rect width="0.9" height="30" fill="#e8b840"/></pattern><pattern id="p28" patternUnits="userSpaceOnUse" x="1037.092" y="0.000" width="7.036" height="30.000"><rect width="7.036" height="30" fill="#b08a22"/><rect x="1.5" width="3.8" height="30" fill="#8a6a0e"/><rect width="0.9" height="30" fill="#e8b840"/></pattern><pattern id="p29" patternUnits="userSpaceOnUse" x="1241.136" y="0.000" width="7.036" height="30.000"><rect width="7.036" height="30" fill="#b08a22"/><rect x="1.5" width="3.8" height="30" fill="#8a6a0e"/><rect width="0.9" height="30" fill="#e8b840"/></pattern><pattern id="p30" patternUnits="userSpaceOnUse" x="1304.460" y="0.000" width="7.036" height="30.000"><rect width="7.036" height="30" fill="#b08a22"/><rect x="1.5" width="3.8" height="30" fill="#8a6a0e"/><rect width="0.9" height="30" fill="#e8b840"/></pattern><pattern id="p31" patternUnits="userSpaceOnUse" x="1360.748" y="0.000" width="7.036" height="30.000"><rect width="7.036" height="30" fill="#b08a22"/><rect x="1.5" width="3.8" height="30" fill="#8a6a0e"/><rect width="0.9" height="30" fill="#e8b840"/></pattern><pattern id="p32" patternUnits="userSpaceOnUse" x="410.388" y="525.400" width="7.036" height="10.800"><rect x="1.2" y="0.9" width="2" height="8.20" rx="0.6" fill="#e8b840" stroke="#9a7414" stroke-width="0.6"/><rect x="4.6" y="0.9" width="1.4" height="8.20" fill="#7a5c0c"/></pattern><pattern id="p33" patternUnits="userSpaceOnUse" x="410.388" y="536.200" width="7.036" height="11.100"><rect x="1.5" y="1.1" width="3.4" height="8.20" rx="0.8" fill="#e8b840" stroke="#a07a18" stroke-width="0.7"/></pattern><pattern id="p34" patternUnits="userSpaceOnUse" x="642.576" y="525.400" width="7.036" height="10.800"><rect x="1.2" y="0.9" width="2" height="8.20" rx="0.6" fill="#e8b840" stroke="#9a7414" stroke-width="0.6"/><rect x="4.6" y="0.9" width="1.4" height="8.20" fill="#7a5c0c"/></pattern><pattern id="p35" patternUnits="userSpaceOnUse" x="642.576" y="536.200" width="7.036" height="11.100"><rect x="1.5" y="1.1" width="3.4" height="8.20" rx="0.8" fill="#e8b840" stroke="#a07a18" stroke-width="0.7"/></pattern><pattern id="p36" patternUnits="userSpaceOnUse" x="888.836" y="525.400" width="7.036" height="10.800"><rect x="1.2" y="0.9" width="2" height="8.20" rx="0.6" fill="#e8b840" stroke="#9a7414" stroke-width="0.6"/><rect x="4.6" y="0.9" width="1.4" height="8.20" fill="#7a5c0c"/></pattern><pattern id="p37" patternUnits="userSpaceOnUse" x="888.836" y="536.200" width="7.036" height="11.100"><rect x="1.5" y="1.1" width="3.4" height="8.20" rx="0.8" fill="#e8b840" stroke="#a07a18" stroke-width="0.7"/></pattern><pattern id="p38" patternUnits="userSpaceOnUse" x="1064.736" y="525.400" width="7.036" height="10.800"><rect x="1.2" y="0.9" width="2" height="8.20" rx="0.6" fill="#e8b840" stroke="#9a7414" stroke-width="0.6"/><rect x="4.6" y="0.9" width="1.4" height="8.20" fill="#7a5c0c"/></pattern><pattern id="p39" patternUnits="userSpaceOnUse" x="1064.736" y="536.200" width="7.036" height="11.100"><rect x="1.5" y="1.1" width="3.4" height="8.20" rx="0.8" fill="#e8b840" stroke="#a07a18" stroke-width="0.7"/></pattern><pattern id="p40" patternUnits="userSpaceOnUse" x="1303.960" y="525.400" width="7.036" height="10.800"><rect x="1.2" y="0.9" width="2" height="8.20" rx="0.6" fill="#e8b840" stroke="#9a7414" stroke-width="0.6"/><rect x="4.6" y="0.9" width="1.4" height="8.20" fill="#7a5c0c"/></pattern><pattern id="p41" patternUnits="userSpaceOnUse" x="1303.960" y="536.200" width="7.036" height="11.100"><rect x="1.5" y="1.1" width="3.4" height="8.20" rx="0.8" fill="#e8b840" stroke="#a07a18" stroke-width="0.7"/></pattern><pattern id="p42" patternUnits="userSpaceOnUse" x="1360.248" y="525.400" width="7.036" height="10.800"><rect x="1.2" y="0.9" width="2" height="8.20" rx="0.6" fill="#e8b840" stroke="#9a7414" stroke-width="0.6"/><rect x="4.6" y="0.9" width="1.4" height="8.20" fill="#7a5c0c"/></pattern><pattern id="p43" patternUnits="userSpaceOnUse" x="1360.248" y="536.200" width="7.036" height="11.100"><rect x="1.5" y="1.1" width="3.4" height="8.20" rx="0.8" fill="#e8b840" stroke="#a07a18" stroke-width="0.7"/></pattern><pattern id="p44" patternUnits="userSpaceOnUse" x="382.744" y="0.000" width="14.072" height="30.000"><rect width="14.072" height="30" fill="#d8a830"/><rect x="0.00" width="0.8" height="30" fill="#8a6a10"/><rect x="0.70" width="0.8" height="30" fill="#f4cc58"/><rect x="1.40" width="0.6" height="30" fill="#f0c450"/><rect x="2.10" width="0.8" height="30" fill="#9a7614"/><rect x="2.80" width="0.5" height="30" fill="#f0c450"/><rect x="3.50" width="0.5" height="30" fill="#f4cc58"/><rect x="4.20" width="0.8" height="30" fill="#9a7614"/><rect x="4.90" width="0.6" height="30" fill="#9a7614"/><rect x="5.60" width="0.5" height="30" fill="#9a7614"/><rect x="6.30" width="0.5" height="30" fill="#f4cc58"/><rect x="7.00" width="0.5" height="30" fill="#f4cc58"/><rect x="7.70" width="0.6" height="30" fill="#9a7614"/><rect x="8.40" width="0.6" height="30" fill="#8a6a10"/><rect x="9.10" width="0.5" height="30" fill="#f0c450"/><rect x="9.80" width="0.8" height="30" fill="#f4cc58"/><rect x="10.50" width="0.5" height="30" fill="#b88a1c"/><rect x="11.20" width="0.8" height="30" fill="#f4cc58"/><rect x="11.90" width="0.8" height="30" fill="#9a7614"/><rect x="12.60" width="0.6" height="30" fill="#8a6a10"/><rect x="13.30" width="0.8" height="30" fill="#f0c450"/></pattern><pattern id="p45" patternUnits="userSpaceOnUse" x="643.076" y="0.000" width="14.072" height="30.000"><rect width="14.072" height="30" fill="#d8a830"/><rect x="0.00" width="0.8" height="30" fill="#8a6a10"/><rect x="0.70" width="0.8" height="30" fill="#f4cc58"/><rect x="1.40" width="0.6" height="30" fill="#f0c450"/><rect x="2.10" width="0.8" height="30" fill="#9a7614"/><rect x="2.80" width="0.5" height="30" fill="#f0c450"/><rect x="3.50" width="0.5" height="30" fill="#f4cc58"/><rect x="4.20" width="0.8" height="30" fill="#9a7614"/><rect x="4.90" width="0.6" height="30" fill="#9a7614"/><rect x="5.60" width="0.5" height="30" fill="#9a7614"/><rect x="6.30" width="0.5" height="30" fill="#f4cc58"/><rect x="7.00" width="0.5" height="30" fill="#f4cc58"/><rect x="7.70" width="0.6" height="30" fill="#9a7614"/><rect x="8.40" width="0.6" height="30" fill="#8a6a10"/><rect x="9.10" width="0.5" height="30" fill="#f0c450"/><rect x="9.80" width="0.8" height="30" fill="#f4cc58"/><rect x="10.50" width="0.5" height="30" fill="#b88a1c"/><rect x="11.20" width="0.8" height="30" fill="#f4cc58"/><rect x="11.90" width="0.8" height="30" fill="#9a7614"/><rect x="12.60" width="0.6" height="30" fill="#8a6a10"/><rect x="13.30" width="0.8" height="30" fill="#f0c450"/></pattern><pattern id="p46" patternUnits="userSpaceOnUse" x="833.048" y="0.000" width="14.072" height="30.000"><rect width="14.072" height="30" fill="#d8a830"/><rect x="0.00" width="0.8" height="30" fill="#8a6a10"/><rect x="0.70" width="0.8" height="30" fill="#f4cc58"/><rect x="1.40" width="0.6" height="30" fill="#f0c450"/><rect x="2.10" width="0.8" height="30" fill="#9a7614"/><rect x="2.80" width="0.5" height="30" fill="#f0c450"/><rect x="3.50" width="0.5" height="30" fill="#f4cc58"/><rect x="4.20" width="0.8" height="30" fill="#9a7614"/><rect x="4.90" width="0.6" height="30" fill="#9a7614"/><rect x="5.60" width="0.5" height="30" fill="#9a7614"/><rect x="6.30" width="0.5" height="30" fill="#f4cc58"/><rect x="7.00" width="0.5" height="30" fill="#f4cc58"/><rect x="7.70" width="0.6" height="30" fill="#9a7614"/><rect x="8.40" width="0.6" height="30" fill="#8a6a10"/><rect x="9.10" width="0.5" height="30" fill="#f0c450"/><rect x="9.80" width="0.8" height="30" fill="#f4cc58"/><rect x="10.50" width="0.5" height="30" fill="#b88a1c"/><rect x="11.20" width="0.8" height="30" fill="#f4cc58"/><rect x="11.90" width="0.8" height="30" fill="#9a7614"/><rect x="12.60" width="0.6" height="30" fill="#8a6a10"/><rect x="13.30" width="0.8" height="30" fill="#f0c450"/></pattern><pattern id="p47" patternUnits="userSpaceOnUse" x="889.336" y="0.000" width="14.072" height="30.000"><rect width="14.072" height="30" fill="#d8a830"/><rect x="0.00" width="0.8" height="30" fill="#8a6a10"/><rect x="0.70" width="0.8" height="30" fill="#f4cc58"/><rect x="1.40" width="0.6" height="30" fill="#f0c450"/><rect x="2.10" width="0.8" height="30" fill="#9a7614"/><rect x="2.80" width="0.5" height="30" fill="#f0c450"/><rect x="3.50" width="0.5" height="30" fill="#f4cc58"/><rect x="4.20" width="0.8" height="30" fill="#9a7614"/><rect x="4.90" width="0.6" height="30" fill="#9a7614"/><rect x="5.60" width="0.5" height="30" fill="#9a7614"/><rect x="6.30" width="0.5" height="30" fill="#f4cc58"/><rect x="7.00" width="0.5" height="30" fill="#f4cc58"/><rect x="7.70" width="0.6" height="30" fill="#9a7614"/><rect x="8.40" width="0.6" height="30" fill="#8a6a10"/><rect x="9.10" width="0.5" height="30" fill="#f0c450"/><rect x="9.80" width="0.8" height="30" fill="#f4cc58"/><rect x="10.50" width="0.5" height="30" fill="#b88a1c"/><rect x="11.20" width="0.8" height="30" fill="#f4cc58"/><rect x="11.90" width="0.8" height="30" fill="#9a7614"/><rect x="12.60" width="0.6" height="30" fill="#8a6a10"/><rect x="13.30" width="0.8" height="30" fill="#f0c450"/></pattern><pattern id="p48" patternUnits="userSpaceOnUse" x="1037.092" y="0.000" width="14.072" height="30.000"><rect width="14.072" height="30" fill="#d8a830"/><rect x="0.00" width="0.8" height="30" fill="#8a6a10"/><rect x="0.70" width="0.8" height="30" fill="#f4cc58"/><rect x="1.40" width="0.6" height="30" fill="#f0c450"/><rect x="2.10" width="0.8" height="30" fill="#9a7614"/><rect x="2.80" width="0.5" height="30" fill="#f0c450"/><rect x="3.50" width="0.5" height="30" fill="#f4cc58"/><rect x="4.20" width="0.8" height="30" fill="#9a7614"/><rect x="4.90" width="0.6" height="30" fill="#9a7614"/><rect x="5.60" width="0.5" height="30" fill="#9a7614"/><rect x="6.30" width="0.5" height="30" fill="#f4cc58"/><rect x="7.00" width="0.5" height="30" fill="#f4cc58"/><rect x="7.70" width="0.6" height="30" fill="#9a7614"/><rect x="8.40" width="0.6" height="30" fill="#8a6a10"/><rect x="9.10" width="0.5" height="30" fill="#f0c450"/><rect x="9.80" width="0.8" height="30" fill="#f4cc58"/><rect x="10.50" width="0.5" height="30" fill="#b88a1c"/><rect x="11.20" width="0.8" height="30" fill="#f4cc58"/><rect x="11.90" width="0.8" height="30" fill="#9a7614"/><rect x="12.60" width="0.6" height="30" fill="#8a6a10"/><rect x="13.30" width="0.8" height="30" fill="#f0c450"/></pattern><pattern id="p49" patternUnits="userSpaceOnUse" x="1241.136" y="0.000" width="14.072" height="30.000"><rect width="14.072" height="30" fill="#d8a830"/><rect x="0.00" width="0.8" height="30" fill="#8a6a10"/><rect x="0.70" width="0.8" height="30" fill="#f4cc58"/><rect x="1.40" width="0.6" height="30" fill="#f0c450"/><rect x="2.10" width="0.8" height="30" fill="#9a7614"/><rect x="2.80" width="0.5" height="30" fill="#f0c450"/><rect x="3.50" width="0.5" height="30" fill="#f4cc58"/><rect x="4.20" width="0.8" height="30" fill="#9a7614"/><rect x="4.90" width="0.6" height="30" fill="#9a7614"/><rect x="5.60" width="0.5" height="30" fill="#9a7614"/><rect x="6.30" width="0.5" height="30" fill="#f4cc58"/><rect x="7.00" width="0.5" height="30" fill="#f4cc58"/><rect x="7.70" width="0.6" height="30" fill="#9a7614"/><rect x="8.40" width="0.6" height="30" fill="#8a6a10"/><rect x="9.10" width="0.5" height="30" fill="#f0c450"/><rect x="9.80" width="0.8" height="30" fill="#f4cc58"/><rect x="10.50" width="0.5" height="30" fill="#b88a1c"/><rect x="11.20" width="0.8" height="30" fill="#f4cc58"/><rect x="11.90" width="0.8" height="30" fill="#9a7614"/><rect x="12.60" width="0.6" height="30" fill="#8a6a10"/><rect x="13.30" width="0.8" height="30" fill="#f0c450"/></pattern><pattern id="p50" patternUnits="userSpaceOnUse" x="1304.460" y="0.000" width="14.072" height="30.000"><rect width="14.072" height="30" fill="#d8a830"/><rect x="0.00" width="0.8" height="30" fill="#8a6a10"/><rect x="0.70" width="0.8" height="30" fill="#f4cc58"/><rect x="1.40" width="0.6" height="30" fill="#f0c450"/><rect x="2.10" width="0.8" height="30" fill="#9a7614"/><rect x="2.80" width="0.5" height="30" fill="#f0c450"/><rect x="3.50" width="0.5" height="30" fill="#f4cc58"/><rect x="4.20" width="0.8" height="30" fill="#9a7614"/><rect x="4.90" width="0.6" height="30" fill="#9a7614"/><rect x="5.60" width="0.5" height="30" fill="#9a7614"/><rect x="6.30" width="0.5" height="30" fill="#f4cc58"/><rect x="7.00" width="0.5" height="30" fill="#f4cc58"/><rect x="7.70" width="0.6" height="30" fill="#9a7614"/><rect x="8.40" width="0.6" height="30" fill="#8a6a10"/><rect x="9.10" width="0.5" height="30" fill="#f0c450"/><rect x="9.80" width="0.8" height="30" fill="#f4cc58"/><rect x="10.50" width="0.5" height="30" fill="#b88a1c"/><rect x="11.20" width="0.8" height="30" fill="#f4cc58"/><rect x="11.90" width="0.8" height="30" fill="#9a7614"/><rect x="12.60" width="0.6" height="30" fill="#8a6a10"/><rect x="13.30" width="0.8" height="30" fill="#f0c450"/></pattern><pattern id="p51" patternUnits="userSpaceOnUse" x="1360.748" y="0.000" width="14.072" height="30.000"><rect width="14.072" height="30" fill="#d8a830"/><rect x="0.00" width="0.8" height="30" fill="#8a6a10"/><rect x="0.70" width="0.8" height="30" fill="#f4cc58"/><rect x="1.40" width="0.6" height="30" fill="#f0c450"/><rect x="2.10" width="0.8" height="30" fill="#9a7614"/><rect x="2.80" width="0.5" height="30" fill="#f0c450"/><rect x="3.50" width="0.5" height="30" fill="#f4cc58"/><rect x="4.20" width="0.8" height="30" fill="#9a7614"/><rect x="4.90" width="0.6" height="30" fill="#9a7614"/><rect x="5.60" width="0.5" height="30" fill="#9a7614"/><rect x="6.30" width="0.5" height="30" fill="#f4cc58"/><rect x="7.00" width="0.5" height="30" fill="#f4cc58"/><rect x="7.70" width="0.6" height="30" fill="#9a7614"/><rect x="8.40" width="0.6" height="30" fill="#8a6a10"/><rect x="9.10" width="0.5" height="30" fill="#f0c450"/><rect x="9.80" width="0.8" height="30" fill="#f4cc58"/><rect x="10.50" width="0.5" height="30" fill="#b88a1c"/><rect x="11.20" width="0.8" height="30" fill="#f4cc58"/><rect x="11.90" width="0.8" height="30" fill="#9a7614"/><rect x="12.60" width="0.6" height="30" fill="#8a6a10"/><rect x="13.30" width="0.8" height="30" fill="#f0c450"/></pattern><pattern id="p52" patternUnits="userSpaceOnUse" x="382.744" y="0.000" width="9.000" height="30.000"><rect width="9" height="30" fill="#8c6a0c"/><rect x="0" width="0.9" height="30" fill="#e8b840"/></pattern><pattern id="p53" patternUnits="userSpaceOnUse" x="551.608" y="0.000" width="9.000" height="30.000"><rect width="9" height="30" fill="#8c6a0c"/><rect x="0" width="0.9" height="30" fill="#e8b840"/></pattern><pattern id="p54" patternUnits="userSpaceOnUse" x="410.888" y="565.300" width="14.072" height="17.500"><rect width="14.072" height="17.5" fill="#8e6c12"/><rect width="1.6" height="17.5" fill="#e8b840"/><rect x="1.6" width="0.6" height="17.5" fill="#c09428"/><path d="M3 9.10 h1.5 M5.5 9.10 h2 M8.5 9.10 h1.2 M10.5 9.10 h2" stroke="#3a2a06" stroke-width="0.8"/><path d="M3.5 4.90 h1 M9 13.65 h2" stroke="#5a4410" stroke-width="0.6"/></pattern><pattern id="p55" patternUnits="userSpaceOnUse" x="643.076" y="565.300" width="14.072" height="17.500"><rect width="14.072" height="17.5" fill="#8e6c12"/><rect width="1.6" height="17.5" fill="#e8b840"/><rect x="1.6" width="0.6" height="17.5" fill="#c09428"/><path d="M3 9.10 h1.5 M5.5 9.10 h2 M8.5 9.10 h1.2 M10.5 9.10 h2" stroke="#3a2a06" stroke-width="0.8"/><path d="M3.5 4.90 h1 M9 13.65 h2" stroke="#5a4410" stroke-width="0.6"/></pattern><pattern id="p56" patternUnits="userSpaceOnUse" x="889.336" y="565.300" width="14.072" height="17.500"><rect width="14.072" height="17.5" fill="#8e6c12"/><rect width="1.6" height="17.5" fill="#e8b840"/><rect x="1.6" width="0.6" height="17.5" fill="#c09428"/><path d="M3 9.10 h1.5 M5.5 9.10 h2 M8.5 9.10 h1.2 M10.5 9.10 h2" stroke="#3a2a06" stroke-width="0.8"/><path d="M3.5 4.90 h1 M9 13.65 h2" stroke="#5a4410" stroke-width="0.6"/></pattern><pattern id="p57" patternUnits="userSpaceOnUse" x="1065.236" y="565.300" width="14.072" height="17.500"><rect width="14.072" height="17.5" fill="#8e6c12"/><rect width="1.6" height="17.5" fill="#e8b840"/><rect x="1.6" width="0.6" height="17.5" fill="#c09428"/><path d="M3 9.10 h1.5 M5.5 9.10 h2 M8.5 9.10 h1.2 M10.5 9.10 h2" stroke="#3a2a06" stroke-width="0.8"/><path d="M3.5 4.90 h1 M9 13.65 h2" stroke="#5a4410" stroke-width="0.6"/></pattern><pattern id="p58" patternUnits="userSpaceOnUse" x="1241.136" y="565.300" width="14.072" height="17.500"><rect width="14.072" height="17.5" fill="#8e6c12"/><rect width="1.6" height="17.5" fill="#e8b840"/><rect x="1.6" width="0.6" height="17.5" fill="#c09428"/><path d="M3 9.10 h1.5 M5.5 9.10 h2 M8.5 9.10 h1.2 M10.5 9.10 h2" stroke="#3a2a06" stroke-width="0.8"/><path d="M3.5 4.90 h1 M9 13.65 h2" stroke="#5a4410" stroke-width="0.6"/></pattern><pattern id="p59" patternUnits="userSpaceOnUse" x="1304.460" y="565.300" width="14.072" height="17.500"><rect width="14.072" height="17.5" fill="#8e6c12"/><rect width="1.6" height="17.5" fill="#e8b840"/><rect x="1.6" width="0.6" height="17.5" fill="#c09428"/><path d="M3 9.10 h1.5 M5.5 9.10 h2 M8.5 9.10 h1.2 M10.5 9.10 h2" stroke="#3a2a06" stroke-width="0.8"/><path d="M3.5 4.90 h1 M9 13.65 h2" stroke="#5a4410" stroke-width="0.6"/></pattern><pattern id="p60" patternUnits="userSpaceOnUse" x="1360.748" y="565.300" width="14.072" height="17.500"><rect width="14.072" height="17.5" fill="#8e6c12"/><rect width="1.6" height="17.5" fill="#e8b840"/><rect x="1.6" width="0.6" height="17.5" fill="#c09428"/><path d="M3 9.10 h1.5 M5.5 9.10 h2 M8.5 9.10 h1.2 M10.5 9.10 h2" stroke="#3a2a06" stroke-width="0.8"/><path d="M3.5 4.90 h1 M9 13.65 h2" stroke="#5a4410" stroke-width="0.6"/></pattern><pattern id="p61" patternUnits="userSpaceOnUse" x="382.744" y="565.300" width="7.036" height="17.500"><rect width="7.036" height="17.5" fill="#8e6c12"/><rect width="1.4" height="17.5" fill="#e8b840"/><rect x="3" y="8.75" width="1.2" height="1.2" fill="#2a1a04"/><rect x="3" y="4.38" width="1" height="1" fill="#4a3608"/></pattern><pattern id="p62" patternUnits="userSpaceOnUse" x="551.608" y="565.300" width="7.036" height="17.500"><rect width="7.036" height="17.5" fill="#8e6c12"/><rect width="1.4" height="17.5" fill="#e8b840"/><rect x="3" y="8.75" width="1.2" height="1.2" fill="#2a1a04"/><rect x="3" y="4.38" width="1" height="1" fill="#4a3608"/></pattern><pattern id="p63" patternUnits="userSpaceOnUse" x="614.932" y="565.300" width="7.036" height="17.500"><rect width="7.036" height="17.5" fill="#8e6c12"/><rect width="1.4" height="17.5" fill="#e8b840"/><rect x="3" y="8.75" width="1.2" height="1.2" fill="#2a1a04"/><rect x="3" y="4.38" width="1" height="1" fill="#4a3608"/></pattern><pattern id="p64" patternUnits="userSpaceOnUse" x="410.888" y="0.000" width="28.144" height="30.000"><rect width="28.144" height="30" fill="#e63a3a"/><rect width="0.9" height="30" fill="#ff8a8a"/></pattern><pattern id="p65" patternUnits="userSpaceOnUse" x="643.076" y="0.000" width="28.144" height="30.000"><rect width="28.144" height="30" fill="#e63a3a"/><rect width="0.9" height="30" fill="#ff8a8a"/></pattern><pattern id="p66" patternUnits="userSpaceOnUse" x="889.336" y="0.000" width="28.144" height="30.000"><rect width="28.144" height="30" fill="#e63a3a"/><rect width="0.9" height="30" fill="#ff8a8a"/></pattern><pattern id="p67" patternUnits="userSpaceOnUse" x="1065.236" y="0.000" width="28.144" height="30.000"><rect width="28.144" height="30" fill="#e63a3a"/><rect width="0.9" height="30" fill="#ff8a8a"/></pattern><pattern id="p68" patternUnits="userSpaceOnUse" x="1304.460" y="0.000" width="28.144" height="30.000"><rect width="28.144" height="30" fill="#e63a3a"/><rect width="0.9" height="30" fill="#ff8a8a"/></pattern><pattern id="p69" patternUnits="userSpaceOnUse" x="1360.748" y="0.000" width="28.144" height="30.000"><rect width="28.144" height="30" fill="#e63a3a"/><rect width="0.9" height="30" fill="#ff8a8a"/></pattern><pattern id="p70" patternUnits="userSpaceOnUse" x="410.888" y="611.800" width="28.144" height="17.700"><rect width="28.144" height="17.700000000000045" fill="#e63a3a"/><rect width="1" height="17.700000000000045" fill="#ff9090"/><rect x="1.6" y="3.54" width="25.6" height="10.62" fill="#6a0e0e"/><path d="M2.0 3.54 L3.8 8.85 L2.0 14.16 M3.8 3.54 L2.0 8.85 L3.8 14.16" stroke="#d84040" stroke-width="0.7" fill="none"/><rect x="4.40" y="2.74" width="1" height="12.22" fill="#200404"/><path d="M5.65 3.54 L7.45 8.85 L5.65 14.16 M7.45 3.54 L5.65 8.85 L7.45 14.16" stroke="#d84040" stroke-width="0.7" fill="none"/><rect x="8.05" y="2.74" width="1" height="12.22" fill="#200404"/><path d="M9.3 3.54 L11.100000000000001 8.85 L9.3 14.16 M11.100000000000001 3.54 L9.3 8.85 L11.100000000000001 14.16" stroke="#d84040" stroke-width="0.7" fill="none"/><rect x="11.70" y="2.74" width="1" height="12.22" fill="#200404"/><path d="M12.95 3.54 L14.75 8.85 L12.95 14.16 M14.75 3.54 L12.95 8.85 L14.75 14.16" stroke="#d84040" stroke-width="0.7" fill="none"/><rect x="15.35" y="2.74" width="1" height="12.22" fill="#200404"/><path d="M16.6 3.54 L18.400000000000002 8.85 L16.6 14.16 M18.400000000000002 3.54 L16.6 8.85 L18.400000000000002 14.16" stroke="#d84040" stroke-width="0.7" fill="none"/><rect x="19.00" y="2.74" width="1" height="12.22" fill="#200404"/><path d="M20.25 3.54 L22.05 8.85 L20.25 14.16 M22.05 3.54 L20.25 8.85 L22.05 14.16" stroke="#d84040" stroke-width="0.7" fill="none"/><rect x="22.65" y="2.74" width="1" height="12.22" fill="#200404"/><path d="M23.9 3.54 L25.7 8.85 L23.9 14.16 M25.7 3.54 L23.9 8.85 L25.7 14.16" stroke="#d84040" stroke-width="0.7" fill="none"/><rect x="26.30" y="2.74" width="1" height="12.22" fill="#200404"/></pattern><pattern id="p71" patternUnits="userSpaceOnUse" x="643.076" y="611.800" width="28.144" height="17.700"><rect width="28.144" height="17.700000000000045" fill="#e63a3a"/><rect width="1" height="17.700000000000045" fill="#ff9090"/><rect x="1.6" y="3.54" width="25.6" height="10.62" fill="#6a0e0e"/><path d="M2.0 3.54 L3.8 8.85 L2.0 14.16 M3.8 3.54 L2.0 8.85 L3.8 14.16" stroke="#d84040" stroke-width="0.7" fill="none"/><rect x="4.40" y="2.74" width="1" height="12.22" fill="#200404"/><path d="M5.65 3.54 L7.45 8.85 L5.65 14.16 M7.45 3.54 L5.65 8.85 L7.45 14.16" stroke="#d84040" stroke-width="0.7" fill="none"/><rect x="8.05" y="2.74" width="1" height="12.22" fill="#200404"/><path d="M9.3 3.54 L11.100000000000001 8.85 L9.3 14.16 M11.100000000000001 3.54 L9.3 8.85 L11.100000000000001 14.16" stroke="#d84040" stroke-width="0.7" fill="none"/><rect x="11.70" y="2.74" width="1" height="12.22" fill="#200404"/><path d="M12.95 3.54 L14.75 8.85 L12.95 14.16 M14.75 3.54 L12.95 8.85 L14.75 14.16" stroke="#d84040" stroke-width="0.7" fill="none"/><rect x="15.35" y="2.74" width="1" height="12.22" fill="#200404"/><path d="M16.6 3.54 L18.400000000000002 8.85 L16.6 14.16 M18.400000000000002 3.54 L16.6 8.85 L18.400000000000002 14.16" stroke="#d84040" stroke-width="0.7" fill="none"/><rect x="19.00" y="2.74" width="1" height="12.22" fill="#200404"/><path d="M20.25 3.54 L22.05 8.85 L20.25 14.16 M22.05 3.54 L20.25 8.85 L22.05 14.16" stroke="#d84040" stroke-width="0.7" fill="none"/><rect x="22.65" y="2.74" width="1" height="12.22" fill="#200404"/><path d="M23.9 3.54 L25.7 8.85 L23.9 14.16 M25.7 3.54 L23.9 8.85 L25.7 14.16" stroke="#d84040" stroke-width="0.7" fill="none"/><rect x="26.30" y="2.74" width="1" height="12.22" fill="#200404"/></pattern><pattern id="p72" patternUnits="userSpaceOnUse" x="889.336" y="611.800" width="28.144" height="17.700"><rect width="28.144" height="17.700000000000045" fill="#e63a3a"/><rect width="1" height="17.700000000000045" fill="#ff9090"/><rect x="1.6" y="3.54" width="25.6" height="10.62" fill="#6a0e0e"/><path d="M2.0 3.54 L3.8 8.85 L2.0 14.16 M3.8 3.54 L2.0 8.85 L3.8 14.16" stroke="#d84040" stroke-width="0.7" fill="none"/><rect x="4.40" y="2.74" width="1" height="12.22" fill="#200404"/><path d="M5.65 3.54 L7.45 8.85 L5.65 14.16 M7.45 3.54 L5.65 8.85 L7.45 14.16" stroke="#d84040" stroke-width="0.7" fill="none"/><rect x="8.05" y="2.74" width="1" height="12.22" fill="#200404"/><path d="M9.3 3.54 L11.100000000000001 8.85 L9.3 14.16 M11.100000000000001 3.54 L9.3 8.85 L11.100000000000001 14.16" stroke="#d84040" stroke-width="0.7" fill="none"/><rect x="11.70" y="2.74" width="1" height="12.22" fill="#200404"/><path d="M12.95 3.54 L14.75 8.85 L12.95 14.16 M14.75 3.54 L12.95 8.85 L14.75 14.16" stroke="#d84040" stroke-width="0.7" fill="none"/><rect x="15.35" y="2.74" width="1" height="12.22" fill="#200404"/><path d="M16.6 3.54 L18.400000000000002 8.85 L16.6 14.16 M18.400000000000002 3.54 L16.6 8.85 L18.400000000000002 14.16" stroke="#d84040" stroke-width="0.7" fill="none"/><rect x="19.00" y="2.74" width="1" height="12.22" fill="#200404"/><path d="M20.25 3.54 L22.05 8.85 L20.25 14.16 M22.05 3.54 L20.25 8.85 L22.05 14.16" stroke="#d84040" stroke-width="0.7" fill="none"/><rect x="22.65" y="2.74" width="1" height="12.22" fill="#200404"/><path d="M23.9 3.54 L25.7 8.85 L23.9 14.16 M25.7 3.54 L23.9 8.85 L25.7 14.16" stroke="#d84040" stroke-width="0.7" fill="none"/><rect x="26.30" y="2.74" width="1" height="12.22" fill="#200404"/></pattern><pattern id="p73" patternUnits="userSpaceOnUse" x="1065.236" y="611.800" width="28.144" height="17.700"><rect width="28.144" height="17.700000000000045" fill="#e63a3a"/><rect width="1" height="17.700000000000045" fill="#ff9090"/><rect x="1.6" y="3.54" width="25.6" height="10.62" fill="#6a0e0e"/><path d="M2.0 3.54 L3.8 8.85 L2.0 14.16 M3.8 3.54 L2.0 8.85 L3.8 14.16" stroke="#d84040" stroke-width="0.7" fill="none"/><rect x="4.40" y="2.74" width="1" height="12.22" fill="#200404"/><path d="M5.65 3.54 L7.45 8.85 L5.65 14.16 M7.45 3.54 L5.65 8.85 L7.45 14.16" stroke="#d84040" stroke-width="0.7" fill="none"/><rect x="8.05" y="2.74" width="1" height="12.22" fill="#200404"/><path d="M9.3 3.54 L11.100000000000001 8.85 L9.3 14.16 M11.100000000000001 3.54 L9.3 8.85 L11.100000000000001 14.16" stroke="#d84040" stroke-width="0.7" fill="none"/><rect x="11.70" y="2.74" width="1" height="12.22" fill="#200404"/><path d="M12.95 3.54 L14.75 8.85 L12.95 14.16 M14.75 3.54 L12.95 8.85 L14.75 14.16" stroke="#d84040" stroke-width="0.7" fill="none"/><rect x="15.35" y="2.74" width="1" height="12.22" fill="#200404"/><path d="M16.6 3.54 L18.400000000000002 8.85 L16.6 14.16 M18.400000000000002 3.54 L16.6 8.85 L18.400000000000002 14.16" stroke="#d84040" stroke-width="0.7" fill="none"/><rect x="19.00" y="2.74" width="1" height="12.22" fill="#200404"/><path d="M20.25 3.54 L22.05 8.85 L20.25 14.16 M22.05 3.54 L20.25 8.85 L22.05 14.16" stroke="#d84040" stroke-width="0.7" fill="none"/><rect x="22.65" y="2.74" width="1" height="12.22" fill="#200404"/><path d="M23.9 3.54 L25.7 8.85 L23.9 14.16 M25.7 3.54 L23.9 8.85 L25.7 14.16" stroke="#d84040" stroke-width="0.7" fill="none"/><rect x="26.30" y="2.74" width="1" height="12.22" fill="#200404"/></pattern><pattern id="p74" patternUnits="userSpaceOnUse" x="1304.460" y="611.800" width="28.144" height="17.700"><rect width="28.144" height="17.700000000000045" fill="#e63a3a"/><rect width="1" height="17.700000000000045" fill="#ff9090"/><rect x="1.6" y="3.54" width="25.6" height="10.62" fill="#6a0e0e"/><path d="M2.0 3.54 L3.8 8.85 L2.0 14.16 M3.8 3.54 L2.0 8.85 L3.8 14.16" stroke="#d84040" stroke-width="0.7" fill="none"/><rect x="4.40" y="2.74" width="1" height="12.22" fill="#200404"/><path d="M5.65 3.54 L7.45 8.85 L5.65 14.16 M7.45 3.54 L5.65 8.85 L7.45 14.16" stroke="#d84040" stroke-width="0.7" fill="none"/><rect x="8.05" y="2.74" width="1" height="12.22" fill="#200404"/><path d="M9.3 3.54 L11.100000000000001 8.85 L9.3 14.16 M11.100000000000001 3.54 L9.3 8.85 L11.100000000000001 14.16" stroke="#d84040" stroke-width="0.7" fill="none"/><rect x="11.70" y="2.74" width="1" height="12.22" fill="#200404"/><path d="M12.95 3.54 L14.75 8.85 L12.95 14.16 M14.75 3.54 L12.95 8.85 L14.75 14.16" stroke="#d84040" stroke-width="0.7" fill="none"/><rect x="15.35" y="2.74" width="1" height="12.22" fill="#200404"/><path d="M16.6 3.54 L18.400000000000002 8.85 L16.6 14.16 M18.400000000000002 3.54 L16.6 8.85 L18.400000000000002 14.16" stroke="#d84040" stroke-width="0.7" fill="none"/><rect x="19.00" y="2.74" width="1" height="12.22" fill="#200404"/><path d="M20.25 3.54 L22.05 8.85 L20.25 14.16 M22.05 3.54 L20.25 8.85 L22.05 14.16" stroke="#d84040" stroke-width="0.7" fill="none"/><rect x="22.65" y="2.74" width="1" height="12.22" fill="#200404"/><path d="M23.9 3.54 L25.7 8.85 L23.9 14.16 M25.7 3.54 L23.9 8.85 L25.7 14.16" stroke="#d84040" stroke-width="0.7" fill="none"/><rect x="26.30" y="2.74" width="1" height="12.22" fill="#200404"/></pattern><pattern id="p75" patternUnits="userSpaceOnUse" x="1360.748" y="611.800" width="28.144" height="17.700"><rect width="28.144" height="17.700000000000045" fill="#e63a3a"/><rect width="1" height="17.700000000000045" fill="#ff9090"/><rect x="1.6" y="3.54" width="25.6" height="10.62" fill="#6a0e0e"/><path d="M2.0 3.54 L3.8 8.85 L2.0 14.16 M3.8 3.54 L2.0 8.85 L3.8 14.16" stroke="#d84040" stroke-width="0.7" fill="none"/><rect x="4.40" y="2.74" width="1" height="12.22" fill="#200404"/><path d="M5.65 3.54 L7.45 8.85 L5.65 14.16 M7.45 3.54 L5.65 8.85 L7.45 14.16" stroke="#d84040" stroke-width="0.7" fill="none"/><rect x="8.05" y="2.74" width="1" height="12.22" fill="#200404"/><path d="M9.3 3.54 L11.100000000000001 8.85 L9.3 14.16 M11.100000000000001 3.54 L9.3 8.85 L11.100000000000001 14.16" stroke="#d84040" stroke-width="0.7" fill="none"/><rect x="11.70" y="2.74" width="1" height="12.22" fill="#200404"/><path d="M12.95 3.54 L14.75 8.85 L12.95 14.16 M14.75 3.54 L12.95 8.85 L14.75 14.16" stroke="#d84040" stroke-width="0.7" fill="none"/><rect x="15.35" y="2.74" width="1" height="12.22" fill="#200404"/><path d="M16.6 3.54 L18.400000000000002 8.85 L16.6 14.16 M18.400000000000002 3.54 L16.6 8.85 L18.400000000000002 14.16" stroke="#d84040" stroke-width="0.7" fill="none"/><rect x="19.00" y="2.74" width="1" height="12.22" fill="#200404"/><path d="M20.25 3.54 L22.05 8.85 L20.25 14.16 M22.05 3.54 L20.25 8.85 L22.05 14.16" stroke="#d84040" stroke-width="0.7" fill="none"/><rect x="22.65" y="2.74" width="1" height="12.22" fill="#200404"/><path d="M23.9 3.54 L25.7 8.85 L23.9 14.16 M25.7 3.54 L23.9 8.85 L25.7 14.16" stroke="#d84040" stroke-width="0.7" fill="none"/><rect x="26.30" y="2.74" width="1" height="12.22" fill="#200404"/></pattern><pattern id="p76" patternUnits="userSpaceOnUse" x="410.888" y="629.500" width="28.144" height="17.500"><rect width="28.144" height="17.5" fill="#e63a3a"/><rect width="1" height="17.5" fill="#ff9090"/><rect x="1.6" y="3.50" width="25.6" height="10.50" fill="#6a0e0e"/><rect x="2.60" y="4.50" width="1.4" height="8.50" fill="#d83a3a"/><rect x="4.40" y="2.70" width="1" height="12.10" fill="#200404"/><rect x="6.25" y="4.50" width="1.4" height="8.50" fill="#d83a3a"/><rect x="8.05" y="2.70" width="1" height="12.10" fill="#200404"/><rect x="9.90" y="4.50" width="1.4" height="8.50" fill="#d83a3a"/><rect x="11.70" y="2.70" width="1" height="12.10" fill="#200404"/><rect x="13.55" y="4.50" width="1.4" height="8.50" fill="#d83a3a"/><rect x="15.35" y="2.70" width="1" height="12.10" fill="#200404"/><rect x="17.20" y="4.50" width="1.4" height="8.50" fill="#d83a3a"/><rect x="19.00" y="2.70" width="1" height="12.10" fill="#200404"/><rect x="20.85" y="4.50" width="1.4" height="8.50" fill="#d83a3a"/><rect x="22.65" y="2.70" width="1" height="12.10" fill="#200404"/><rect x="24.50" y="4.50" width="1.4" height="8.50" fill="#d83a3a"/><rect x="26.30" y="2.70" width="1" height="12.10" fill="#200404"/></pattern><pattern id="p77" patternUnits="userSpaceOnUse" x="643.076" y="629.500" width="28.144" height="17.500"><rect width="28.144" height="17.5" fill="#e63a3a"/><rect width="1" height="17.5" fill="#ff9090"/><rect x="1.6" y="3.50" width="25.6" height="10.50" fill="#6a0e0e"/><rect x="2.60" y="4.50" width="1.4" height="8.50" fill="#d83a3a"/><rect x="4.40" y="2.70" width="1" height="12.10" fill="#200404"/><rect x="6.25" y="4.50" width="1.4" height="8.50" fill="#d83a3a"/><rect x="8.05" y="2.70" width="1" height="12.10" fill="#200404"/><rect x="9.90" y="4.50" width="1.4" height="8.50" fill="#d83a3a"/><rect x="11.70" y="2.70" width="1" height="12.10" fill="#200404"/><rect x="13.55" y="4.50" width="1.4" height="8.50" fill="#d83a3a"/><rect x="15.35" y="2.70" width="1" height="12.10" fill="#200404"/><rect x="17.20" y="4.50" width="1.4" height="8.50" fill="#d83a3a"/><rect x="19.00" y="2.70" width="1" height="12.10" fill="#200404"/><rect x="20.85" y="4.50" width="1.4" height="8.50" fill="#d83a3a"/><rect x="22.65" y="2.70" width="1" height="12.10" fill="#200404"/><rect x="24.50" y="4.50" width="1.4" height="8.50" fill="#d83a3a"/><rect x="26.30" y="2.70" width="1" height="12.10" fill="#200404"/></pattern><pattern id="p78" patternUnits="userSpaceOnUse" x="889.336" y="629.500" width="28.144" height="17.500"><rect width="28.144" height="17.5" fill="#e63a3a"/><rect width="1" height="17.5" fill="#ff9090"/><rect x="1.6" y="3.50" width="25.6" height="10.50" fill="#6a0e0e"/><rect x="2.60" y="4.50" width="1.4" height="8.50" fill="#d83a3a"/><rect x="4.40" y="2.70" width="1" height="12.10" fill="#200404"/><rect x="6.25" y="4.50" width="1.4" height="8.50" fill="#d83a3a"/><rect x="8.05" y="2.70" width="1" height="12.10" fill="#200404"/><rect x="9.90" y="4.50" width="1.4" height="8.50" fill="#d83a3a"/><rect x="11.70" y="2.70" width="1" height="12.10" fill="#200404"/><rect x="13.55" y="4.50" width="1.4" height="8.50" fill="#d83a3a"/><rect x="15.35" y="2.70" width="1" height="12.10" fill="#200404"/><rect x="17.20" y="4.50" width="1.4" height="8.50" fill="#d83a3a"/><rect x="19.00" y="2.70" width="1" height="12.10" fill="#200404"/><rect x="20.85" y="4.50" width="1.4" height="8.50" fill="#d83a3a"/><rect x="22.65" y="2.70" width="1" height="12.10" fill="#200404"/><rect x="24.50" y="4.50" width="1.4" height="8.50" fill="#d83a3a"/><rect x="26.30" y="2.70" width="1" height="12.10" fill="#200404"/></pattern><pattern id="p79" patternUnits="userSpaceOnUse" x="1065.236" y="629.500" width="28.144" height="17.500"><rect width="28.144" height="17.5" fill="#e63a3a"/><rect width="1" height="17.5" fill="#ff9090"/><rect x="1.6" y="3.50" width="25.6" height="10.50" fill="#6a0e0e"/><rect x="2.60" y="4.50" width="1.4" height="8.50" fill="#d83a3a"/><rect x="4.40" y="2.70" width="1" height="12.10" fill="#200404"/><rect x="6.25" y="4.50" width="1.4" height="8.50" fill="#d83a3a"/><rect x="8.05" y="2.70" width="1" height="12.10" fill="#200404"/><rect x="9.90" y="4.50" width="1.4" height="8.50" fill="#d83a3a"/><rect x="11.70" y="2.70" width="1" height="12.10" fill="#200404"/><rect x="13.55" y="4.50" width="1.4" height="8.50" fill="#d83a3a"/><rect x="15.35" y="2.70" width="1" height="12.10" fill="#200404"/><rect x="17.20" y="4.50" width="1.4" height="8.50" fill="#d83a3a"/><rect x="19.00" y="2.70" width="1" height="12.10" fill="#200404"/><rect x="20.85" y="4.50" width="1.4" height="8.50" fill="#d83a3a"/><rect x="22.65" y="2.70" width="1" height="12.10" fill="#200404"/><rect x="24.50" y="4.50" width="1.4" height="8.50" fill="#d83a3a"/><rect x="26.30" y="2.70" width="1" height="12.10" fill="#200404"/></pattern><pattern id="p80" patternUnits="userSpaceOnUse" x="1304.460" y="629.500" width="28.144" height="17.500"><rect width="28.144" height="17.5" fill="#e63a3a"/><rect width="1" height="17.5" fill="#ff9090"/><rect x="1.6" y="3.50" width="25.6" height="10.50" fill="#6a0e0e"/><rect x="2.60" y="4.50" width="1.4" height="8.50" fill="#d83a3a"/><rect x="4.40" y="2.70" width="1" height="12.10" fill="#200404"/><rect x="6.25" y="4.50" width="1.4" height="8.50" fill="#d83a3a"/><rect x="8.05" y="2.70" width="1" height="12.10" fill="#200404"/><rect x="9.90" y="4.50" width="1.4" height="8.50" fill="#d83a3a"/><rect x="11.70" y="2.70" width="1" height="12.10" fill="#200404"/><rect x="13.55" y="4.50" width="1.4" height="8.50" fill="#d83a3a"/><rect x="15.35" y="2.70" width="1" height="12.10" fill="#200404"/><rect x="17.20" y="4.50" width="1.4" height="8.50" fill="#d83a3a"/><rect x="19.00" y="2.70" width="1" height="12.10" fill="#200404"/><rect x="20.85" y="4.50" width="1.4" height="8.50" fill="#d83a3a"/><rect x="22.65" y="2.70" width="1" height="12.10" fill="#200404"/><rect x="24.50" y="4.50" width="1.4" height="8.50" fill="#d83a3a"/><rect x="26.30" y="2.70" width="1" height="12.10" fill="#200404"/></pattern><pattern id="p81" patternUnits="userSpaceOnUse" x="1360.748" y="629.500" width="28.144" height="17.500"><rect width="28.144" height="17.5" fill="#e63a3a"/><rect width="1" height="17.5" fill="#ff9090"/><rect x="1.6" y="3.50" width="25.6" height="10.50" fill="#6a0e0e"/><rect x="2.60" y="4.50" width="1.4" height="8.50" fill="#d83a3a"/><rect x="4.40" y="2.70" width="1" height="12.10" fill="#200404"/><rect x="6.25" y="4.50" width="1.4" height="8.50" fill="#d83a3a"/><rect x="8.05" y="2.70" width="1" height="12.10" fill="#200404"/><rect x="9.90" y="4.50" width="1.4" height="8.50" fill="#d83a3a"/><rect x="11.70" y="2.70" width="1" height="12.10" fill="#200404"/><rect x="13.55" y="4.50" width="1.4" height="8.50" fill="#d83a3a"/><rect x="15.35" y="2.70" width="1" height="12.10" fill="#200404"/><rect x="17.20" y="4.50" width="1.4" height="8.50" fill="#d83a3a"/><rect x="19.00" y="2.70" width="1" height="12.10" fill="#200404"/><rect x="20.85" y="4.50" width="1.4" height="8.50" fill="#d83a3a"/><rect x="22.65" y="2.70" width="1" height="12.10" fill="#200404"/><rect x="24.50" y="4.50" width="1.4" height="8.50" fill="#d83a3a"/><rect x="26.30" y="2.70" width="1" height="12.10" fill="#200404"/></pattern><pattern id="p82" patternUnits="userSpaceOnUse" x="410.888" y="647.000" width="28.144" height="17.700"><rect width="28.144" height="17.700000000000045" fill="#e63a3a"/><rect width="1" height="17.700000000000045" fill="#ff9090"/><rect x="1.6" y="3.54" width="25.6" height="10.62" fill="#6a0e0e"/><path d="M2.0 3.54 L3.8 8.85 L2.0 14.16 M3.8 3.54 L2.0 8.85 L3.8 14.16" stroke="#d84040" stroke-width="0.7" fill="none"/><rect x="4.40" y="2.74" width="1" height="12.22" fill="#200404"/><path d="M5.65 3.54 L7.45 8.85 L5.65 14.16 M7.45 3.54 L5.65 8.85 L7.45 14.16" stroke="#d84040" stroke-width="0.7" fill="none"/><rect x="8.05" y="2.74" width="1" height="12.22" fill="#200404"/><path d="M9.3 3.54 L11.100000000000001 8.85 L9.3 14.16 M11.100000000000001 3.54 L9.3 8.85 L11.100000000000001 14.16" stroke="#d84040" stroke-width="0.7" fill="none"/><rect x="11.70" y="2.74" width="1" height="12.22" fill="#200404"/><path d="M12.95 3.54 L14.75 8.85 L12.95 14.16 M14.75 3.54 L12.95 8.85 L14.75 14.16" stroke="#d84040" stroke-width="0.7" fill="none"/><rect x="15.35" y="2.74" width="1" height="12.22" fill="#200404"/><path d="M16.6 3.54 L18.400000000000002 8.85 L16.6 14.16 M18.400000000000002 3.54 L16.6 8.85 L18.400000000000002 14.16" stroke="#d84040" stroke-width="0.7" fill="none"/><rect x="19.00" y="2.74" width="1" height="12.22" fill="#200404"/><path d="M20.25 3.54 L22.05 8.85 L20.25 14.16 M22.05 3.54 L20.25 8.85 L22.05 14.16" stroke="#d84040" stroke-width="0.7" fill="none"/><rect x="22.65" y="2.74" width="1" height="12.22" fill="#200404"/><path d="M23.9 3.54 L25.7 8.85 L23.9 14.16 M25.7 3.54 L23.9 8.85 L25.7 14.16" stroke="#d84040" stroke-width="0.7" fill="none"/><rect x="26.30" y="2.74" width="1" height="12.22" fill="#200404"/></pattern><pattern id="p83" patternUnits="userSpaceOnUse" x="643.076" y="647.000" width="28.144" height="17.700"><rect width="28.144" height="17.700000000000045" fill="#e63a3a"/><rect width="1" height="17.700000000000045" fill="#ff9090"/><rect x="1.6" y="3.54" width="25.6" height="10.62" fill="#6a0e0e"/><path d="M2.0 3.54 L3.8 8.85 L2.0 14.16 M3.8 3.54 L2.0 8.85 L3.8 14.16" stroke="#d84040" stroke-width="0.7" fill="none"/><rect x="4.40" y="2.74" width="1" height="12.22" fill="#200404"/><path d="M5.65 3.54 L7.45 8.85 L5.65 14.16 M7.45 3.54 L5.65 8.85 L7.45 14.16" stroke="#d84040" stroke-width="0.7" fill="none"/><rect x="8.05" y="2.74" width="1" height="12.22" fill="#200404"/><path d="M9.3 3.54 L11.100000000000001 8.85 L9.3 14.16 M11.100000000000001 3.54 L9.3 8.85 L11.100000000000001 14.16" stroke="#d84040" stroke-width="0.7" fill="none"/><rect x="11.70" y="2.74" width="1" height="12.22" fill="#200404"/><path d="M12.95 3.54 L14.75 8.85 L12.95 14.16 M14.75 3.54 L12.95 8.85 L14.75 14.16" stroke="#d84040" stroke-width="0.7" fill="none"/><rect x="15.35" y="2.74" width="1" height="12.22" fill="#200404"/><path d="M16.6 3.54 L18.400000000000002 8.85 L16.6 14.16 M18.400000000000002 3.54 L16.6 8.85 L18.400000000000002 14.16" stroke="#d84040" stroke-width="0.7" fill="none"/><rect x="19.00" y="2.74" width="1" height="12.22" fill="#200404"/><path d="M20.25 3.54 L22.05 8.85 L20.25 14.16 M22.05 3.54 L20.25 8.85 L22.05 14.16" stroke="#d84040" stroke-width="0.7" fill="none"/><rect x="22.65" y="2.74" width="1" height="12.22" fill="#200404"/><path d="M23.9 3.54 L25.7 8.85 L23.9 14.16 M25.7 3.54 L23.9 8.85 L25.7 14.16" stroke="#d84040" stroke-width="0.7" fill="none"/><rect x="26.30" y="2.74" width="1" height="12.22" fill="#200404"/></pattern><pattern id="p84" patternUnits="userSpaceOnUse" x="889.336" y="647.000" width="28.144" height="17.700"><rect width="28.144" height="17.700000000000045" fill="#e63a3a"/><rect width="1" height="17.700000000000045" fill="#ff9090"/><rect x="1.6" y="3.54" width="25.6" height="10.62" fill="#6a0e0e"/><path d="M2.0 3.54 L3.8 8.85 L2.0 14.16 M3.8 3.54 L2.0 8.85 L3.8 14.16" stroke="#d84040" stroke-width="0.7" fill="none"/><rect x="4.40" y="2.74" width="1" height="12.22" fill="#200404"/><path d="M5.65 3.54 L7.45 8.85 L5.65 14.16 M7.45 3.54 L5.65 8.85 L7.45 14.16" stroke="#d84040" stroke-width="0.7" fill="none"/><rect x="8.05" y="2.74" width="1" height="12.22" fill="#200404"/><path d="M9.3 3.54 L11.100000000000001 8.85 L9.3 14.16 M11.100000000000001 3.54 L9.3 8.85 L11.100000000000001 14.16" stroke="#d84040" stroke-width="0.7" fill="none"/><rect x="11.70" y="2.74" width="1" height="12.22" fill="#200404"/><path d="M12.95 3.54 L14.75 8.85 L12.95 14.16 M14.75 3.54 L12.95 8.85 L14.75 14.16" stroke="#d84040" stroke-width="0.7" fill="none"/><rect x="15.35" y="2.74" width="1" height="12.22" fill="#200404"/><path d="M16.6 3.54 L18.400000000000002 8.85 L16.6 14.16 M18.400000000000002 3.54 L16.6 8.85 L18.400000000000002 14.16" stroke="#d84040" stroke-width="0.7" fill="none"/><rect x="19.00" y="2.74" width="1" height="12.22" fill="#200404"/><path d="M20.25 3.54 L22.05 8.85 L20.25 14.16 M22.05 3.54 L20.25 8.85 L22.05 14.16" stroke="#d84040" stroke-width="0.7" fill="none"/><rect x="22.65" y="2.74" width="1" height="12.22" fill="#200404"/><path d="M23.9 3.54 L25.7 8.85 L23.9 14.16 M25.7 3.54 L23.9 8.85 L25.7 14.16" stroke="#d84040" stroke-width="0.7" fill="none"/><rect x="26.30" y="2.74" width="1" height="12.22" fill="#200404"/></pattern><pattern id="p85" patternUnits="userSpaceOnUse" x="1065.236" y="647.000" width="28.144" height="17.700"><rect width="28.144" height="17.700000000000045" fill="#e63a3a"/><rect width="1" height="17.700000000000045" fill="#ff9090"/><rect x="1.6" y="3.54" width="25.6" height="10.62" fill="#6a0e0e"/><path d="M2.0 3.54 L3.8 8.85 L2.0 14.16 M3.8 3.54 L2.0 8.85 L3.8 14.16" stroke="#d84040" stroke-width="0.7" fill="none"/><rect x="4.40" y="2.74" width="1" height="12.22" fill="#200404"/><path d="M5.65 3.54 L7.45 8.85 L5.65 14.16 M7.45 3.54 L5.65 8.85 L7.45 14.16" stroke="#d84040" stroke-width="0.7" fill="none"/><rect x="8.05" y="2.74" width="1" height="12.22" fill="#200404"/><path d="M9.3 3.54 L11.100000000000001 8.85 L9.3 14.16 M11.100000000000001 3.54 L9.3 8.85 L11.100000000000001 14.16" stroke="#d84040" stroke-width="0.7" fill="none"/><rect x="11.70" y="2.74" width="1" height="12.22" fill="#200404"/><path d="M12.95 3.54 L14.75 8.85 L12.95 14.16 M14.75 3.54 L12.95 8.85 L14.75 14.16" stroke="#d84040" stroke-width="0.7" fill="none"/><rect x="15.35" y="2.74" width="1" height="12.22" fill="#200404"/><path d="M16.6 3.54 L18.400000000000002 8.85 L16.6 14.16 M18.400000000000002 3.54 L16.6 8.85 L18.400000000000002 14.16" stroke="#d84040" stroke-width="0.7" fill="none"/><rect x="19.00" y="2.74" width="1" height="12.22" fill="#200404"/><path d="M20.25 3.54 L22.05 8.85 L20.25 14.16 M22.05 3.54 L20.25 8.85 L22.05 14.16" stroke="#d84040" stroke-width="0.7" fill="none"/><rect x="22.65" y="2.74" width="1" height="12.22" fill="#200404"/><path d="M23.9 3.54 L25.7 8.85 L23.9 14.16 M25.7 3.54 L23.9 8.85 L25.7 14.16" stroke="#d84040" stroke-width="0.7" fill="none"/><rect x="26.30" y="2.74" width="1" height="12.22" fill="#200404"/></pattern><pattern id="p86" patternUnits="userSpaceOnUse" x="1304.460" y="647.000" width="28.144" height="17.700"><rect width="28.144" height="17.700000000000045" fill="#e63a3a"/><rect width="1" height="17.700000000000045" fill="#ff9090"/><rect x="1.6" y="3.54" width="25.6" height="10.62" fill="#6a0e0e"/><path d="M2.0 3.54 L3.8 8.85 L2.0 14.16 M3.8 3.54 L2.0 8.85 L3.8 14.16" stroke="#d84040" stroke-width="0.7" fill="none"/><rect x="4.40" y="2.74" width="1" height="12.22" fill="#200404"/><path d="M5.65 3.54 L7.45 8.85 L5.65 14.16 M7.45 3.54 L5.65 8.85 L7.45 14.16" stroke="#d84040" stroke-width="0.7" fill="none"/><rect x="8.05" y="2.74" width="1" height="12.22" fill="#200404"/><path d="M9.3 3.54 L11.100000000000001 8.85 L9.3 14.16 M11.100000000000001 3.54 L9.3 8.85 L11.100000000000001 14.16" stroke="#d84040" stroke-width="0.7" fill="none"/><rect x="11.70" y="2.74" width="1" height="12.22" fill="#200404"/><path d="M12.95 3.54 L14.75 8.85 L12.95 14.16 M14.75 3.54 L12.95 8.85 L14.75 14.16" stroke="#d84040" stroke-width="0.7" fill="none"/><rect x="15.35" y="2.74" width="1" height="12.22" fill="#200404"/><path d="M16.6 3.54 L18.400000000000002 8.85 L16.6 14.16 M18.400000000000002 3.54 L16.6 8.85 L18.400000000000002 14.16" stroke="#d84040" stroke-width="0.7" fill="none"/><rect x="19.00" y="2.74" width="1" height="12.22" fill="#200404"/><path d="M20.25 3.54 L22.05 8.85 L20.25 14.16 M22.05 3.54 L20.25 8.85 L22.05 14.16" stroke="#d84040" stroke-width="0.7" fill="none"/><rect x="22.65" y="2.74" width="1" height="12.22" fill="#200404"/><path d="M23.9 3.54 L25.7 8.85 L23.9 14.16 M25.7 3.54 L23.9 8.85 L25.7 14.16" stroke="#d84040" stroke-width="0.7" fill="none"/><rect x="26.30" y="2.74" width="1" height="12.22" fill="#200404"/></pattern><pattern id="p87" patternUnits="userSpaceOnUse" x="1360.748" y="647.000" width="28.144" height="17.700"><rect width="28.144" height="17.700000000000045" fill="#e63a3a"/><rect width="1" height="17.700000000000045" fill="#ff9090"/><rect x="1.6" y="3.54" width="25.6" height="10.62" fill="#6a0e0e"/><path d="M2.0 3.54 L3.8 8.85 L2.0 14.16 M3.8 3.54 L2.0 8.85 L3.8 14.16" stroke="#d84040" stroke-width="0.7" fill="none"/><rect x="4.40" y="2.74" width="1" height="12.22" fill="#200404"/><path d="M5.65 3.54 L7.45 8.85 L5.65 14.16 M7.45 3.54 L5.65 8.85 L7.45 14.16" stroke="#d84040" stroke-width="0.7" fill="none"/><rect x="8.05" y="2.74" width="1" height="12.22" fill="#200404"/><path d="M9.3 3.54 L11.100000000000001 8.85 L9.3 14.16 M11.100000000000001 3.54 L9.3 8.85 L11.100000000000001 14.16" stroke="#d84040" stroke-width="0.7" fill="none"/><rect x="11.70" y="2.74" width="1" height="12.22" fill="#200404"/><path d="M12.95 3.54 L14.75 8.85 L12.95 14.16 M14.75 3.54 L12.95 8.85 L14.75 14.16" stroke="#d84040" stroke-width="0.7" fill="none"/><rect x="15.35" y="2.74" width="1" height="12.22" fill="#200404"/><path d="M16.6 3.54 L18.400000000000002 8.85 L16.6 14.16 M18.400000000000002 3.54 L16.6 8.85 L18.400000000000002 14.16" stroke="#d84040" stroke-width="0.7" fill="none"/><rect x="19.00" y="2.74" width="1" height="12.22" fill="#200404"/><path d="M20.25 3.54 L22.05 8.85 L20.25 14.16 M22.05 3.54 L20.25 8.85 L22.05 14.16" stroke="#d84040" stroke-width="0.7" fill="none"/><rect x="22.65" y="2.74" width="1" height="12.22" fill="#200404"/><path d="M23.9 3.54 L25.7 8.85 L23.9 14.16 M25.7 3.54 L23.9 8.85 L25.7 14.16" stroke="#d84040" stroke-width="0.7" fill="none"/><rect x="26.30" y="2.74" width="1" height="12.22" fill="#200404"/></pattern></defs><rect x="347.70" y="112.00" width="1168.30" height="20.00" fill="#68acd8" /><rect x="381.00" y="112.00" width="1081.70" height="20.00" fill="#735ce0" /><rect x="379.30" y="112.00" width="1.70" height="20.00" fill="#27313a" /><rect x="353.60" y="112.00" width="1.00" height="20.00" fill="#1b2731" /><path d="M381 112 H388 L381 119 Z" fill="#fff"/><path d="M1462.7 112 H1455.7 L1462.7 119 Z" fill="#fff"/><rect x="409.89" y="112.00" width="1.00" height="20.00" fill="#d8d0ff" /><rect x="466.18" y="112.00" width="1.00" height="20.00" fill="#d8d0ff" /><rect x="522.46" y="112.00" width="1.00" height="20.00" fill="#d8d0ff" /><rect x="578.75" y="112.00" width="1.00" height="20.00" fill="#d8d0ff" /><rect x="635.04" y="112.00" width="1.00" height="20.00" fill="#d8d0ff" /><rect x="691.33" y="112.00" width="1.00" height="20.00" fill="#d8d0ff" /><rect x="747.62" y="112.00" width="1.00" height="20.00" fill="#d8d0ff" /><rect x="803.90" y="112.00" width="1.00" height="20.00" fill="#d8d0ff" /><rect x="860.19" y="112.00" width="1.00" height="20.00" fill="#d8d0ff" /><rect x="916.48" y="112.00" width="1.00" height="20.00" fill="#d8d0ff" /><rect x="972.77" y="112.00" width="1.00" height="20.00" fill="#d8d0ff" /><rect x="1029.06" y="112.00" width="1.00" height="20.00" fill="#d8d0ff" /><rect x="1085.34" y="112.00" width="1.00" height="20.00" fill="#d8d0ff" /><rect x="1141.63" y="112.00" width="1.00" height="20.00" fill="#d8d0ff" /><rect x="1197.92" y="112.00" width="1.00" height="20.00" fill="#d8d0ff" /><rect x="1254.21" y="112.00" width="1.00" height="20.00" fill="#d8d0ff" /><rect x="1310.50" y="112.00" width="1.00" height="20.00" fill="#d8d0ff" /><rect x="1366.78" y="112.00" width="1.00" height="20.00" fill="#d8d0ff" /><rect x="1423.07" y="112.00" width="1.00" height="20.00" fill="#d8d0ff" /><rect x="1479.36" y="112.00" width="1.00" height="20.00" fill="#1b2731" /><rect x="436.60" y="131.20" width="28.40" height="1.60" fill="#4a3aa8" /><rect x="523.50" y="131.20" width="28.30" height="1.60" fill="#4a3aa8" /><rect x="672.70" y="131.20" width="54.70" height="1.60" fill="#4a3aa8" /><rect x="878.50" y="131.20" width="28.30" height="1.60" fill="#4a3aa8" /><rect x="978.30" y="131.20" width="24.60" height="1.60" fill="#4a3aa8" /><rect x="1093.50" y="131.20" width="24.50" height="1.60" fill="#4a3aa8" /><rect x="1144.50" y="131.20" width="24.50" height="1.60" fill="#4a3aa8" /><rect x="1182.00" y="131.20" width="13.50" height="1.60" fill="#4a3aa8" /><rect x="1312.50" y="131.20" width="49.10" height="1.60" fill="#4a3aa8" /><rect x="347.70" y="132.00" width="1170.70" height="649.10" fill="#ffffff" /><rect x="381.00" y="132.00" width="1081.70" height="649.10" fill="#d3e7f5" /><rect x="347.70" y="132.00" width="1170.70" height="1.60" fill="#b9c6d0" /><rect x="347.70" y="150.70" width="33.30" height="1.00" fill="#e2e2e2" /><rect x="381.00" y="150.70" width="1081.70" height="1.00" fill="#bccdda" /><rect x="1462.70" y="150.70" width="55.70" height="1.00" fill="#e2e2e2" /><rect x="347.70" y="168.50" width="33.30" height="1.00" fill="#e2e2e2" /><rect x="381.00" y="168.50" width="1081.70" height="1.00" fill="#bccdda" /><rect x="1462.70" y="168.50" width="55.70" height="1.00" fill="#e2e2e2" /><rect x="347.70" y="186.30" width="33.30" height="1.00" fill="#e2e2e2" /><rect x="381.00" y="186.30" width="1081.70" height="1.00" fill="#bccdda" /><rect x="1462.70" y="186.30" width="55.70" height="1.00" fill="#e2e2e2" /><rect x="347.70" y="197.60" width="33.30" height="1.00" fill="#e2e2e2" /><rect x="381.00" y="197.60" width="1081.70" height="1.00" fill="#bccdda" /><rect x="1462.70" y="197.60" width="55.70" height="1.00" fill="#e2e2e2" /><rect x="347.70" y="215.00" width="33.30" height="1.00" fill="#e2e2e2" /><rect x="381.00" y="215.00" width="1081.70" height="1.00" fill="#bccdda" /><rect x="1462.70" y="215.00" width="55.70" height="1.00" fill="#e2e2e2" /><rect x="347.70" y="232.60" width="33.30" height="1.00" fill="#e2e2e2" /><rect x="381.00" y="232.60" width="1081.70" height="1.00" fill="#bccdda" /><rect x="1462.70" y="232.60" width="55.70" height="1.00" fill="#e2e2e2" /><rect x="347.70" y="250.40" width="33.30" height="1.00" fill="#e2e2e2" /><rect x="381.00" y="250.40" width="1081.70" height="1.00" fill="#bccdda" /><rect x="1462.70" y="250.40" width="55.70" height="1.00" fill="#e2e2e2" /><rect x="347.70" y="267.80" width="33.30" height="1.00" fill="#e2e2e2" /><rect x="381.00" y="267.80" width="1081.70" height="1.00" fill="#bccdda" /><rect x="1462.70" y="267.80" width="55.70" height="1.00" fill="#e2e2e2" /><rect x="347.70" y="285.50" width="33.30" height="1.00" fill="#e2e2e2" /><rect x="381.00" y="285.50" width="1081.70" height="1.00" fill="#bccdda" /><rect x="1462.70" y="285.50" width="55.70" height="1.00" fill="#e2e2e2" /><rect x="347.70" y="303.30" width="33.30" height="1.00" fill="#e2e2e2" /><rect x="381.00" y="303.30" width="1081.70" height="1.00" fill="#bccdda" /><rect x="1462.70" y="303.30" width="55.70" height="1.00" fill="#e2e2e2" /><rect x="347.70" y="320.90" width="33.30" height="1.00" fill="#e2e2e2" /><rect x="381.00" y="320.90" width="1081.70" height="1.00" fill="#bccdda" /><rect x="1462.70" y="320.90" width="55.70" height="1.00" fill="#e2e2e2" /><rect x="347.70" y="338.70" width="33.30" height="1.00" fill="#e2e2e2" /><rect x="381.00" y="338.70" width="1081.70" height="1.00" fill="#bccdda" /><rect x="1462.70" y="338.70" width="55.70" height="1.00" fill="#e2e2e2" /><rect x="347.70" y="356.10" width="33.30" height="1.00" fill="#e2e2e2" /><rect x="381.00" y="356.10" width="1081.70" height="1.00" fill="#bccdda" /><rect x="1462.70" y="356.10" width="55.70" height="1.00" fill="#e2e2e2" /><rect x="347.70" y="373.80" width="33.30" height="1.00" fill="#e2e2e2" /><rect x="381.00" y="373.80" width="1081.70" height="1.00" fill="#bccdda" /><rect x="1462.70" y="373.80" width="55.70" height="1.00" fill="#e2e2e2" /><rect x="347.70" y="391.40" width="33.30" height="1.00" fill="#e2e2e2" /><rect x="381.00" y="391.40" width="1081.70" height="1.00" fill="#bccdda" /><rect x="1462.70" y="391.40" width="55.70" height="1.00" fill="#e2e2e2" /><rect x="347.70" y="409.20" width="33.30" height="1.00" fill="#e2e2e2" /><rect x="381.00" y="409.20" width="1081.70" height="1.00" fill="#bccdda" /><rect x="1462.70" y="409.20" width="55.70" height="1.00" fill="#e2e2e2" /><rect x="347.70" y="426.40" width="33.30" height="1.00" fill="#e2e2e2" /><rect x="381.00" y="426.40" width="1081.70" height="1.00" fill="#bccdda" /><rect x="1462.70" y="426.40" width="55.70" height="1.00" fill="#e2e2e2" /><rect x="347.70" y="437.90" width="33.30" height="1.00" fill="#e2e2e2" /><rect x="381.00" y="437.90" width="1081.70" height="1.00" fill="#bccdda" /><rect x="1462.70" y="437.90" width="55.70" height="1.00" fill="#e2e2e2" /><rect x="347.70" y="455.50" width="33.30" height="1.00" fill="#e2e2e2" /><rect x="381.00" y="455.50" width="1081.70" height="1.00" fill="#bccdda" /><rect x="1462.70" y="455.50" width="55.70" height="1.00" fill="#e2e2e2" /><rect x="347.70" y="466.60" width="33.30" height="1.00" fill="#e2e2e2" /><rect x="381.00" y="466.60" width="1081.70" height="1.00" fill="#bccdda" /><rect x="1462.70" y="466.60" width="55.70" height="1.00" fill="#e2e2e2" /><rect x="347.70" y="477.80" width="33.30" height="1.00" fill="#e2e2e2" /><rect x="381.00" y="477.80" width="1081.70" height="1.00" fill="#bccdda" /><rect x="1462.70" y="477.80" width="55.70" height="1.00" fill="#e2e2e2" /><rect x="347.70" y="489.10" width="33.30" height="1.00" fill="#e2e2e2" /><rect x="381.00" y="489.10" width="1081.70" height="1.00" fill="#bccdda" /><rect x="1462.70" y="489.10" width="55.70" height="1.00" fill="#e2e2e2" /><rect x="347.70" y="506.70" width="33.30" height="1.00" fill="#e2e2e2" /><rect x="381.00" y="506.70" width="1081.70" height="1.00" fill="#bccdda" /><rect x="1462.70" y="506.70" width="55.70" height="1.00" fill="#e2e2e2" /><rect x="347.70" y="524.50" width="33.30" height="1.00" fill="#e2e2e2" /><rect x="381.00" y="524.50" width="1081.70" height="1.00" fill="#bccdda" /><rect x="1462.70" y="524.50" width="55.70" height="1.00" fill="#e2e2e2" /><rect x="347.70" y="535.30" width="33.30" height="1.00" fill="#e2e2e2" /><rect x="381.00" y="535.30" width="1081.70" height="1.00" fill="#bccdda" /><rect x="1462.70" y="535.30" width="55.70" height="1.00" fill="#e2e2e2" /><rect x="347.70" y="546.40" width="33.30" height="1.00" fill="#e2e2e2" /><rect x="381.00" y="546.40" width="1081.70" height="1.00" fill="#bccdda" /><rect x="1462.70" y="546.40" width="55.70" height="1.00" fill="#e2e2e2" /><rect x="347.70" y="564.40" width="33.30" height="1.00" fill="#e2e2e2" /><rect x="381.00" y="564.40" width="1081.70" height="1.00" fill="#bccdda" /><rect x="1462.70" y="564.40" width="55.70" height="1.00" fill="#e2e2e2" /><rect x="347.70" y="581.90" width="33.30" height="1.00" fill="#e2e2e2" /><rect x="381.00" y="581.90" width="1081.70" height="1.00" fill="#bccdda" /><rect x="1462.70" y="581.90" width="55.70" height="1.00" fill="#e2e2e2" /><rect x="347.70" y="599.50" width="33.30" height="1.00" fill="#e2e2e2" /><rect x="381.00" y="599.50" width="1081.70" height="1.00" fill="#bccdda" /><rect x="1462.70" y="599.50" width="55.70" height="1.00" fill="#e2e2e2" /><rect x="347.70" y="610.90" width="33.30" height="1.00" fill="#e2e2e2" /><rect x="381.00" y="610.90" width="1081.70" height="1.00" fill="#bccdda" /><rect x="1462.70" y="610.90" width="55.70" height="1.00" fill="#e2e2e2" /><rect x="347.70" y="628.60" width="33.30" height="1.00" fill="#e2e2e2" /><rect x="381.00" y="628.60" width="1081.70" height="1.00" fill="#bccdda" /><rect x="1462.70" y="628.60" width="55.70" height="1.00" fill="#e2e2e2" /><rect x="347.70" y="646.10" width="33.30" height="1.00" fill="#e2e2e2" /><rect x="381.00" y="646.10" width="1081.70" height="1.00" fill="#bccdda" /><rect x="1462.70" y="646.10" width="55.70" height="1.00" fill="#e2e2e2" /><rect x="347.70" y="663.80" width="33.30" height="1.00" fill="#e2e2e2" /><rect x="381.00" y="663.80" width="1081.70" height="1.00" fill="#bccdda" /><rect x="1462.70" y="663.80" width="55.70" height="1.00" fill="#e2e2e2" /><rect x="347.70" y="681.60" width="33.30" height="1.00" fill="#e2e2e2" /><rect x="381.00" y="681.60" width="1081.70" height="1.00" fill="#bccdda" /><rect x="1462.70" y="681.60" width="55.70" height="1.00" fill="#e2e2e2" /><rect x="347.70" y="699.10" width="33.30" height="1.00" fill="#e2e2e2" /><rect x="381.00" y="699.10" width="1081.70" height="1.00" fill="#bccdda" /><rect x="1462.70" y="699.10" width="55.70" height="1.00" fill="#e2e2e2" /><rect x="347.70" y="716.80" width="33.30" height="1.00" fill="#e2e2e2" /><rect x="381.00" y="716.80" width="1081.70" height="1.00" fill="#bccdda" /><rect x="1462.70" y="716.80" width="55.70" height="1.00" fill="#e2e2e2" /><rect x="347.70" y="732.10" width="33.30" height="1.00" fill="#e2e2e2" /><rect x="381.00" y="732.10" width="1081.70" height="1.00" fill="#bccdda" /><rect x="1462.70" y="732.10" width="55.70" height="1.00" fill="#e2e2e2" /><rect x="347.70" y="743.80" width="33.30" height="1.00" fill="#e2e2e2" /><rect x="381.00" y="743.80" width="1081.70" height="1.00" fill="#bccdda" /><rect x="1462.70" y="743.80" width="55.70" height="1.00" fill="#e2e2e2" /><rect x="347.70" y="755.10" width="33.30" height="1.00" fill="#e2e2e2" /><rect x="381.00" y="755.10" width="1081.70" height="1.00" fill="#bccdda" /><rect x="1462.70" y="755.10" width="55.70" height="1.00" fill="#e2e2e2" /><rect x="347.70" y="766.50" width="33.30" height="1.00" fill="#e2e2e2" /><rect x="381.00" y="766.50" width="1081.70" height="1.00" fill="#bccdda" /><rect x="1462.70" y="766.50" width="55.70" height="1.00" fill="#e2e2e2" /><rect x="347.70" y="777.70" width="33.30" height="1.00" fill="#e2e2e2" /><rect x="381.00" y="777.70" width="1081.70" height="1.00" fill="#bccdda" /><rect x="1462.70" y="777.70" width="55.70" height="1.00" fill="#e2e2e2" /><rect x="347.70" y="750.20" width="33.30" height="0.80" fill="#e6e6e6" /><rect x="381.00" y="750.20" width="1081.70" height="0.80" fill="#c4d4e0" /><rect x="1462.70" y="750.20" width="55.70" height="0.80" fill="#e6e6e6" /><rect x="347.70" y="761.10" width="33.30" height="0.80" fill="#e6e6e6" /><rect x="381.00" y="761.10" width="1081.70" height="0.80" fill="#c4d4e0" /><rect x="1462.70" y="761.10" width="55.70" height="0.80" fill="#e6e6e6" /><rect x="347.70" y="772.80" width="33.30" height="0.80" fill="#e6e6e6" /><rect x="381.00" y="772.80" width="1081.70" height="0.80" fill="#c4d4e0" /><rect x="1462.70" y="772.80" width="55.70" height="0.80" fill="#e6e6e6" /><rect x="347.70" y="778.20" width="33.30" height="0.80" fill="#e6e6e6" /><rect x="381.00" y="778.20" width="1081.70" height="0.80" fill="#c4d4e0" /><rect x="1462.70" y="778.20" width="55.70" height="0.80" fill="#e6e6e6" /><rect x="353.60" y="132.00" width="1.00" height="649.10" fill="#a9a9a9" /><rect x="379.30" y="132.00" width="1.70" height="649.10" fill="#5d646a" /><rect x="409.89" y="132.00" width="1.00" height="649.10" fill="#9aa2a8" /><rect x="466.18" y="132.00" width="1.00" height="649.10" fill="#9aa2a8" /><rect x="522.46" y="132.00" width="1.00" height="649.10" fill="#9aa2a8" /><rect x="578.75" y="132.00" width="1.00" height="649.10" fill="#9aa2a8" /><rect x="635.04" y="132.00" width="1.00" height="649.10" fill="#9aa2a8" /><rect x="691.33" y="132.00" width="1.00" height="649.10" fill="#9aa2a8" /><rect x="747.62" y="132.00" width="1.00" height="649.10" fill="#9aa2a8" /><rect x="803.90" y="132.00" width="1.00" height="649.10" fill="#9aa2a8" /><rect x="860.19" y="132.00" width="1.00" height="649.10" fill="#9aa2a8" /><rect x="916.48" y="132.00" width="1.00" height="649.10" fill="#9aa2a8" /><rect x="972.77" y="132.00" width="1.00" height="649.10" fill="#9aa2a8" /><rect x="1029.06" y="132.00" width="1.00" height="649.10" fill="#9aa2a8" /><rect x="1085.34" y="132.00" width="1.00" height="649.10" fill="#9aa2a8" /><rect x="1141.63" y="132.00" width="1.00" height="649.10" fill="#9aa2a8" /><rect x="1197.92" y="132.00" width="1.00" height="649.10" fill="#9aa2a8" /><rect x="1254.21" y="132.00" width="1.00" height="649.10" fill="#9aa2a8" /><rect x="1310.50" y="132.00" width="1.00" height="649.10" fill="#9aa2a8" /><rect x="1366.78" y="132.00" width="1.00" height="649.10" fill="#9aa2a8" /><rect x="1423.07" y="132.00" width="1.00" height="649.10" fill="#9aa2a8" /><rect x="1479.36" y="132.00" width="1.00" height="649.10" fill="#9aa2a8" /><rect x="383.24" y="135.60" width="195.51" height="14.00" rx="0.5" fill="#fcfcfc" stroke="#a6a6a6" stroke-width="1" /><path d="M385.2 142.3h1.2 M387.3 143.3h1.2 M389.1 144.3h1.2 M391.2 144.3h1.2 M393.0 143.3h1.2 M395.1 143.3h1.2 M396.9 142.3h2.4 M400.2 141.3h2.4 M403.2 140.3h2.4 M406.2 141.3h2.4 M409.5 140.3h1.2 M411.3 141.3h1.2 M413.4 141.3h1.2 M415.2 142.3h1.8 M417.6 141.3h2.4 M420.6 141.3h1.2 M422.4 142.3h1.2 M424.2 142.3h2.4 M427.5 142.3h1.8 M430.2 142.3h1.8 M432.6 141.3h2.4 M435.6 140.3h2.4 M438.9 141.3h1.8 M441.6 142.3h1.8 M444.3 143.3h1.2 M446.1 144.3h1.8 M448.5 144.3h1.2 M450.6 144.3h1.2 M452.4 144.3h2.4 M455.7 144.3h2.4 M459.0 144.3h1.8 M461.7 143.3h1.2 M463.8 143.3h2.4 M466.8 142.3h2.4 M470.1 143.3h2.4 M473.4 143.3h2.4 M476.7 144.3h1.8 M479.1 144.3h1.8 M481.5 144.3h1.2 M483.6 143.3h1.2 M485.7 142.3h2.4 M488.7 142.3h1.8 M491.4 141.3h1.2 M493.5 141.3h2.4 M496.8 140.3h1.8 M499.5 141.3h1.8 M502.2 142.3h1.8 M504.6 141.3h1.2 M506.4 140.3h1.2 M508.2 140.3h1.8 M510.6 140.3h1.8 M513.0 140.3h1.8 M515.7 141.3h2.4 M519.0 140.3h2.4 M522.0 140.3h2.4 M525.3 140.3h1.8 M528.0 140.3h1.8 M530.7 140.3h1.2 M532.5 140.3h1.8 M534.9 140.3h1.8 M537.3 140.3h1.2 M539.1 141.3h1.2 M541.2 142.3h1.2 M543.0 141.3h2.4 M546.3 140.3h2.4 M549.6 140.3h2.4 M552.9 140.3h1.2 M554.7 140.3h1.8 M557.4 140.3h1.8 M559.8 140.3h1.2 M561.9 141.3h1.8 M564.6 142.3h1.2 M566.4 141.3h2.4 M569.7 140.3h2.4 M572.7 141.3h1.8" stroke="#a4a4a4" stroke-width="1.0"/><rect x="1361.25" y="135.60" width="82.93" height="14.00" rx="0.5" fill="#fcfcfc" stroke="#a6a6a6" stroke-width="1" /><path d="M1363.2 143.3h1.8 M1365.6 143.3h1.2 M1367.7 144.3h1.2 M1369.5 143.3h1.8 M1371.9 142.3h2.4 M1375.2 142.3h2.4 M1378.2 141.3h1.8 M1380.9 141.3h1.2 M1383.0 141.3h2.4 M1386.3 141.3h1.2 M1388.1 140.3h1.2 M1390.2 140.3h1.8 M1392.6 140.3h2.4 M1395.6 140.3h2.4 M1398.9 141.3h1.2 M1400.7 141.3h2.4 M1403.7 141.3h1.2 M1405.8 142.3h1.8 M1408.2 143.3h1.8 M1410.9 143.3h2.4 M1413.9 144.3h1.2 M1415.7 143.3h1.2 M1417.5 144.3h1.8 M1419.9 144.3h2.4 M1423.2 144.3h1.8 M1425.6 144.3h2.4 M1428.6 143.3h1.2 M1430.4 144.3h2.4 M1433.4 144.3h1.2 M1435.2 143.3h1.8 M1437.6 143.3h2.4" stroke="#a4a4a4" stroke-width="1.0"/><rect x="411.39" y="153.60" width="26.64" height="13.80" rx="0.5" fill="#fcfcfc" stroke="#a6a6a6" stroke-width="1" /><path d="M413.4 160.2h2.4 M416.7 159.2h1.2 M418.8 159.2h2.4 M422.1 160.2h1.2 M423.9 161.2h2.4 M426.9 161.2h1.2 M428.7 160.2h1.2 M430.5 160.2h2.4 M433.5 161.2h1.2" stroke="#a4a4a4" stroke-width="1.0"/><rect x="495.82" y="153.60" width="54.79" height="13.80" rx="0.5" fill="#fcfcfc" stroke="#a6a6a6" stroke-width="1" /><path d="M497.8 161.2h2.4 M501.1 160.2h2.4 M504.1 159.2h1.2 M506.2 158.2h1.2 M508.3 159.2h1.2 M510.1 159.2h1.8 M512.5 160.2h1.8 M515.2 161.2h2.4 M518.5 162.2h1.2 M520.6 162.2h1.2 M522.7 161.2h1.8 M525.1 161.2h1.8 M527.8 160.2h2.4 M530.8 160.2h1.2 M532.6 161.2h1.8 M535.0 160.2h2.4 M538.3 159.2h1.8 M540.7 159.2h1.2 M542.5 159.2h1.8 M544.9 160.2h1.2 M546.7 161.2h1.8" stroke="#a4a4a4" stroke-width="1.0"/><rect x="791.33" y="171.40" width="209.58" height="13.80" rx="0.5" fill="#fcfcfc" stroke="#a6a6a6" stroke-width="1" /><path d="M793.3 178.0h1.8 M795.7 178.0h1.8 M798.1 179.0h1.8 M800.5 179.0h2.4 M803.8 179.0h2.4 M806.8 179.0h1.8 M809.5 180.0h1.2 M811.3 179.0h1.2 M813.1 179.0h1.8 M815.5 178.0h1.8 M817.9 178.0h2.4 M821.2 178.0h1.2 M823.3 179.0h1.8 M825.7 179.0h1.2 M827.5 179.0h1.2 M829.6 178.0h2.4 M832.6 178.0h1.2 M834.4 177.0h1.8 M836.8 177.0h1.2 M838.9 178.0h1.8 M841.6 179.0h1.2 M843.4 180.0h2.4 M846.4 179.0h1.2 M848.5 178.0h1.2 M850.3 178.0h2.4 M853.6 179.0h1.2 M855.7 179.0h2.4 M858.7 179.0h1.8 M861.1 179.0h1.2 M862.9 178.0h2.4 M865.9 179.0h1.8 M868.3 179.0h1.2 M870.4 180.0h1.8 M873.1 180.0h1.8 M875.5 179.0h1.8 M877.9 180.0h2.4 M880.9 180.0h1.8 M883.3 179.0h1.2 M885.1 180.0h2.4 M888.4 180.0h1.2 M890.2 179.0h2.4 M893.5 180.0h2.4 M896.8 180.0h1.2 M898.9 179.0h1.8 M901.3 178.0h1.8 M904.0 177.0h1.8 M906.7 177.0h2.4 M910.0 176.0h1.2 M912.1 176.0h1.8 M914.5 176.0h1.8 M917.2 176.0h1.8 M919.9 177.0h2.4 M922.9 176.0h2.4 M925.9 176.0h1.8 M928.3 176.0h1.8 M930.7 176.0h1.2 M932.8 176.0h2.4 M935.8 176.0h2.4 M938.8 177.0h2.4 M942.1 177.0h2.4 M945.4 176.0h1.8 M947.8 176.0h2.4 M951.1 177.0h2.4 M954.1 178.0h2.4 M957.1 179.0h2.4 M960.1 178.0h1.2 M961.9 177.0h2.4 M965.2 176.0h1.8 M967.9 177.0h1.2 M969.7 178.0h2.4 M972.7 178.0h1.8 M975.1 178.0h1.2 M976.9 179.0h2.4 M979.9 180.0h2.4 M983.2 180.0h1.2 M985.3 179.0h2.4 M988.3 178.0h2.4 M991.6 178.0h1.8 M994.0 178.0h2.4" stroke="#a4a4a4" stroke-width="1.0"/><rect x="1304.96" y="188.60" width="47.75" height="8.50" rx="0.5" fill="#fcfcfc" stroke="#a6a6a6" stroke-width="1" /><rect x="1361.25" y="188.60" width="82.93" height="8.50" rx="0.5" fill="#fcfcfc" stroke="#a6a6a6" stroke-width="1" /><rect x="1009.45" y="200.50" width="139.22" height="13.40" rx="0.5" fill="#fcfcfc" stroke="#a6a6a6" stroke-width="1" /><path d="M1011.4 206.0h2.4 M1014.4 205.2h2.4 M1017.4 205.2h1.8 M1020.1 206.0h2.4 M1023.1 205.2h1.8 M1025.5 205.2h1.8 M1027.9 206.0h1.2 M1030.0 206.0h2.4 M1033.3 206.0h1.8 M1036.0 205.2h2.4 M1039.0 205.2h1.2 M1041.1 204.4h1.8 M1043.8 203.6h2.4 M1047.1 203.6h1.8 M1049.5 203.6h1.2 M1051.3 203.6h2.4 M1054.6 203.6h1.2 M1056.7 203.6h2.4 M1060.0 203.6h1.8 M1062.7 203.6h1.2 M1064.5 203.6h1.8 M1067.2 203.6h1.8 M1069.6 203.6h1.8 M1072.3 203.6h1.2 M1074.4 203.6h1.8 M1077.1 203.6h1.2 M1078.9 204.4h1.2 M1081.0 204.4h1.8 M1083.4 204.4h1.8 M1085.8 204.4h1.8 M1088.5 203.6h1.8 M1090.9 203.6h2.4 M1094.2 204.4h1.2 M1096.0 204.4h1.8 M1098.7 203.6h1.8 M1101.4 203.6h2.4 M1104.7 204.4h2.4 M1107.7 205.2h1.2 M1109.5 206.0h1.8 M1112.2 206.8h1.2 M1114.3 206.8h1.2 M1116.1 206.0h1.8 M1118.8 206.0h1.8 M1121.5 206.0h2.4 M1124.8 206.0h2.4 M1127.8 206.0h1.8 M1130.5 205.2h1.2 M1132.3 204.4h1.2 M1134.4 205.2h1.2 M1136.5 205.2h1.8 M1139.2 204.4h2.4 M1142.2 203.6h1.2 M1144.0 203.6h2.4" stroke="#a4a4a4" stroke-width="1.2"/><path d="M1011.4 208.9h1.2 M1013.5 208.9h2.4 M1016.5 208.1h2.4 M1019.8 208.1h1.8 M1022.2 208.1h1.8 M1024.9 207.3h1.8 M1027.6 208.1h1.8 M1030.0 208.9h2.4 M1033.0 208.1h1.8 M1035.4 208.1h1.8 M1038.1 208.1h1.8 M1040.5 207.3h1.2 M1042.6 208.1h1.8 M1045.3 207.3h1.2 M1047.4 208.1h1.8 M1050.1 207.3h1.2 M1051.9 207.3h1.2 M1053.7 208.1h2.4 M1057.0 207.3h2.4 M1060.0 207.3h1.2 M1061.8 208.1h1.2 M1063.9 207.3h2.4 M1067.2 208.1h2.4 M1070.5 208.9h1.2 M1072.3 208.1h1.8 M1074.7 208.1h1.8 M1077.1 208.9h1.2 M1078.9 209.7h1.8 M1081.6 209.7h1.8 M1084.0 209.7h2.4 M1087.0 210.5h1.2 M1088.8 210.5h2.4 M1092.1 209.7h1.2 M1093.9 209.7h2.4 M1097.2 208.9h1.8 M1099.6 209.7h1.8 M1102.3 208.9h1.8 M1104.7 209.7h1.8 M1107.4 209.7h2.4 M1110.7 208.9h1.2 M1112.8 209.7h2.4 M1115.8 208.9h1.8 M1118.2 208.9h1.2 M1120.0 208.9h1.2 M1122.1 208.9h1.2 M1124.2 209.7h1.2 M1126.0 209.7h1.8 M1128.4 210.5h1.2 M1130.5 209.7h1.2 M1132.3 210.5h1.2 M1134.4 209.7h2.4 M1137.4 208.9h1.8 M1140.1 209.7h1.8 M1142.5 208.9h1.2 M1144.6 208.1h1.2" stroke="#a4a4a4" stroke-width="1.2"/><rect x="587.29" y="217.90" width="195.51" height="13.60" rx="0.5" fill="#fcfcfc" stroke="#a6a6a6" stroke-width="1" /><path d="M589.3 222.1h1.4 M591.6 222.1h1.4 M593.9 221.5h1.0 M595.5 221.5h1.4 M597.5 221.5h1.4 M599.5 222.1h1.0 M601.4 222.1h1.4 M603.7 221.5h1.0 M605.6 221.5h1.4 M607.9 221.5h1.4 M610.2 222.1h1.4 M612.2 222.7h1.4 M614.2 223.3h1.4 M616.2 223.3h1.0 M618.1 222.7h1.0 M620.0 222.1h1.0 M621.9 222.1h1.4 M624.2 222.7h1.0 M626.1 223.3h1.4 M628.4 223.3h1.0 M630.0 222.7h1.0 M631.6 222.7h1.4 M633.9 222.7h1.4 M636.2 222.1h1.4 M638.2 221.5h1.4 M640.2 222.1h1.0 M642.1 222.1h1.4 M644.4 222.7h1.0" stroke="#a4a4a4" stroke-width="1.0"/><path d="M589.3 225.6h1.4 M591.3 226.2h1.0 M593.2 226.8h1.4 M595.2 226.8h1.0 M596.8 226.8h1.0 M598.4 226.2h1.4 M600.7 226.8h1.4 M602.7 226.2h1.0 M604.6 226.2h1.0 M606.2 226.2h1.4 M608.5 226.8h1.4 M610.8 226.8h1.4 M612.8 226.8h1.0 M614.4 226.2h1.0 M616.0 226.2h1.0 M617.9 225.6h1.4 M620.2 225.0h1.0 M621.8 225.6h1.4 M623.8 225.0h1.0 M625.7 225.0h1.4 M628.0 225.0h1.4 M630.0 225.0h1.0 M631.6 225.6h1.0 M633.2 225.6h1.0 M635.1 226.2h1.4 M637.1 225.6h1.4 M639.1 225.0h1.4 M641.4 225.0h1.0 M643.0 225.0h1.0 M644.6 225.0h1.4" stroke="#a4a4a4" stroke-width="1.0"/><path d="M727.2 223.3h1.4 M729.2 223.9h1.4 M731.2 223.3h1.0 M733.1 223.9h1.4 M735.1 223.9h1.0 M737.0 223.9h1.0 M738.6 223.9h1.0 M740.5 223.9h1.4 M742.8 223.9h1.4 M745.1 223.3h1.4 M747.4 223.3h1.4 M749.4 223.3h1.0 M751.3 223.9h1.4 M753.3 223.3h1.4 M755.3 223.3h1.0 M756.9 223.3h1.4 M759.2 222.7h1.0 M760.8 222.1h1.0 M762.7 221.5h1.4 M764.7 221.5h1.4 M767.0 221.5h1.0 M768.6 221.5h1.4 M770.9 221.5h1.4 M772.9 221.5h1.4 M775.2 221.5h1.4 M777.2 222.1h1.0 M778.8 222.7h1.4" stroke="#a4a4a4" stroke-width="1.0"/><path d="M727.2 226.8h1.0 M728.8 226.8h1.0 M730.7 226.8h1.0 M732.3 226.2h1.0 M733.9 226.8h1.0 M735.8 226.2h1.4 M738.1 226.8h1.4 M740.4 226.8h1.0 M742.3 226.8h1.4 M744.6 227.4h1.4 M746.6 226.8h1.0 M748.5 226.8h1.0 M750.4 227.4h1.4 M752.4 227.4h1.4 M754.4 226.8h1.0 M756.3 226.8h1.4 M758.3 226.8h1.0 M759.9 227.4h1.0 M761.5 227.4h1.4 M763.5 226.8h1.4 M765.5 226.2h1.0 M767.1 225.6h1.0 M769.0 225.6h1.0 M770.6 225.0h1.4 M772.9 225.0h1.4 M775.2 225.0h1.0 M777.1 225.6h1.4 M779.1 226.2h1.4" stroke="#a4a4a4" stroke-width="1.0"/><rect x="615.43" y="235.50" width="167.36" height="13.80" rx="0.5" fill="#fcfcfc" stroke="#a6a6a6" stroke-width="1" /><path d="M617.4 240.3 L618.2 240.3 L621.0 240.3 L621.8 240.3 L624.5 240.3 L625.3 239.0 L628.0 239.0 L628.8 240.3 L631.5 240.3 L632.3 240.3 L635.0 240.3 L635.8 240.3 L638.5 240.3 L639.3 239.0 L642.1 239.0 L642.9 240.3 L645.6 240.3 L646.4 240.3 L649.1 240.3 L649.9 240.3 L652.6 240.3 L653.4 239.0 L656.1 239.0 L656.9 240.3 L659.6 240.3 L660.4 240.3 L663.2 240.3 L664.0 240.3 L666.7 240.3 L667.5 239.0 L670.2 239.0 L671.0 240.3 L673.7 240.3 L674.5 240.3 L677.2 240.3 L678.0 240.3 L680.8 240.3 L681.6 239.0 L684.3 239.0 L685.1 240.3 L687.8 240.3 L688.6 240.3 L691.3 240.3 L692.1 240.3 L694.8 240.3 L695.6 239.0 L698.3 239.0 L699.1 240.3 L701.9 240.3 L702.7 240.3 L705.4 240.3 L706.2 240.3 L708.9 240.3 L709.7 239.0 L712.4 239.0 L713.2 240.3 L715.9 240.3 L716.7 240.3 L719.5 240.3 L720.3 240.3 L723.0 240.3 L723.8 239.0 L726.5 239.0 L727.3 240.3 L730.0 240.3 L730.8 240.3 L733.5 240.3 L734.3 240.3 L737.0 240.3 L737.8 239.0 L740.6 239.0 L741.4 240.3 L744.1 240.3 L744.9 240.3 L747.6 240.3 L748.4 240.3 L751.1 240.3 L751.9 239.0 L754.6 239.0 L755.4 240.3 L758.2 240.3 L759.0 240.3 L761.7 240.3 L762.5 240.3 L765.2 240.3 L766.0 239.0 L768.7 239.0 L769.5 240.3 L772.2 240.3 L773.0 240.3 L775.7 240.3 L776.5 240.3 L779.3 240.3 L780.1 239.0 L780.8 239.0" stroke="#a8a8a8" stroke-width="1.3" fill="none"/><path d="M617.4 244.8 L618.2 244.8 L621.0 244.8 L621.8 244.8 L624.5 244.8 L625.3 243.5 L628.0 243.5 L628.8 244.8 L631.5 244.8 L632.3 244.8 L635.0 244.8 L635.8 244.8 L638.5 244.8 L639.3 243.5 L642.1 243.5 L642.9 244.8 L645.6 244.8 L646.4 244.8 L649.1 244.8 L649.9 244.8 L652.6 244.8 L653.4 243.5 L656.1 243.5 L656.9 244.8 L659.6 244.8 L660.4 244.8 L663.2 244.8 L664.0 244.8 L666.7 244.8 L667.5 243.5 L670.2 243.5 L671.0 244.8 L673.7 244.8 L674.5 244.8 L677.2 244.8 L678.0 244.8 L680.8 244.8 L681.6 243.5 L684.3 243.5 L685.1 244.8 L687.8 244.8 L688.6 244.8 L691.3 244.8 L692.1 244.8 L694.8 244.8 L695.6 243.5 L698.3 243.5 L699.1 244.8 L701.9 244.8 L702.7 244.8 L705.4 244.8 L706.2 244.8 L708.9 244.8 L709.7 243.5 L712.4 243.5 L713.2 244.8 L715.9 244.8 L716.7 244.8 L719.5 244.8 L720.3 244.8 L723.0 244.8 L723.8 243.5 L726.5 243.5 L727.3 244.8 L730.0 244.8 L730.8 244.8 L733.5 244.8 L734.3 244.8 L737.0 244.8 L737.8 243.5 L740.6 243.5 L741.4 244.8 L744.1 244.8 L744.9 244.8 L747.6 244.8 L748.4 244.8 L751.1 244.8 L751.9 243.5 L754.6 243.5 L755.4 244.8 L758.2 244.8 L759.0 244.8 L761.7 244.8 L762.5 244.8 L765.2 244.8 L766.0 243.5 L768.7 243.5 L769.5 244.8 L772.2 244.8 L773.0 244.8 L775.7 244.8 L776.5 244.8 L779.3 244.8 L780.1 243.5 L780.8 243.5" stroke="#a8a8a8" stroke-width="1.3" fill="none"/><rect x="671.72" y="253.30" width="111.08" height="13.40" rx="0.5" fill="#fcfcfc" stroke="#a6a6a6" stroke-width="1" /><rect x="673.7" y="258.0" width="107.1" height="4.9" fill="#c4c4c4"/><path d="M673.7 257.7 L674.5 257.7 L677.2 257.7 L678.0 257.7 L680.8 257.7 L681.6 256.5 L684.3 256.5 L685.1 257.7 L687.8 257.7 L688.6 257.7 L691.3 257.7 L692.1 257.7 L694.8 257.7 L695.6 256.5 L698.3 256.5 L699.1 257.7 L701.9 257.7 L702.7 257.7 L705.4 257.7 L706.2 257.7 L708.9 257.7 L709.7 256.5 L712.4 256.5 L713.2 257.7 L715.9 257.7 L716.7 257.7 L719.5 257.7 L720.3 257.7 L723.0 257.7 L723.8 256.5 L726.5 256.5 L727.3 257.7 L730.0 257.7 L730.8 257.7 L733.5 257.7 L734.3 257.7 L737.0 257.7 L737.8 256.5 L740.6 256.5 L741.4 257.7 L744.1 257.7 L744.9 257.7 L747.6 257.7 L748.4 257.7 L751.1 257.7 L751.9 256.5 L754.6 256.5 L755.4 257.7 L758.2 257.7 L759.0 257.7 L761.7 257.7 L762.5 257.7 L765.2 257.7 L766.0 256.5 L768.7 256.5 L769.5 257.7 L772.2 257.7 L773.0 257.7 L775.7 257.7 L776.5 257.7 L779.3 257.7 L780.1 256.5 L780.8 256.5" stroke="#c4c4c4" stroke-width="1.5" fill="none"/><path d="M673.7 263.2 L674.5 263.2 L677.2 263.2 L678.0 263.2 L680.8 263.2 L681.6 262.0 L684.3 262.0 L685.1 263.2 L687.8 263.2 L688.6 263.2 L691.3 263.2 L692.1 263.2 L694.8 263.2 L695.6 262.0 L698.3 262.0 L699.1 263.2 L701.9 263.2 L702.7 263.2 L705.4 263.2 L706.2 263.2 L708.9 263.2 L709.7 262.0 L712.4 262.0 L713.2 263.2 L715.9 263.2 L716.7 263.2 L719.5 263.2 L720.3 263.2 L723.0 263.2 L723.8 262.0 L726.5 262.0 L727.3 263.2 L730.0 263.2 L730.8 263.2 L733.5 263.2 L734.3 263.2 L737.0 263.2 L737.8 262.0 L740.6 262.0 L741.4 263.2 L744.1 263.2 L744.9 263.2 L747.6 263.2 L748.4 263.2 L751.1 263.2 L751.9 262.0 L754.6 262.0 L755.4 263.2 L758.2 263.2 L759.0 263.2 L761.7 263.2 L762.5 263.2 L765.2 263.2 L766.0 262.0 L768.7 262.0 L769.5 263.2 L772.2 263.2 L773.0 263.2 L775.7 263.2 L776.5 263.2 L779.3 263.2 L780.1 262.0 L780.8 262.0" stroke="#cfcfcf" stroke-width="1.2" fill="none"/><rect x="946.12" y="253.30" width="54.79" height="13.40" rx="0.5" fill="#fcfcfc" stroke="#a6a6a6" stroke-width="1" /><rect x="948.1" y="258.0" width="50.8" height="4.9" fill="#c4c4c4"/><path d="M948.1 257.7 L948.9 257.7 L951.6 257.7 L952.4 257.7 L955.2 257.7 L956.0 256.5 L958.7 256.5 L959.5 257.7 L962.2 257.7 L963.0 257.7 L965.7 257.7 L966.5 257.7 L969.2 257.7 L970.0 256.5 L972.8 256.5 L973.6 257.7 L976.3 257.7 L977.1 257.7 L979.8 257.7 L980.6 257.7 L983.3 257.7 L984.1 256.5 L986.8 256.5 L987.6 257.7 L990.3 257.7 L991.1 257.7 L993.9 257.7 L994.7 257.7 L997.4 257.7 L998.2 256.5 L998.9 256.5" stroke="#c4c4c4" stroke-width="1.5" fill="none"/><path d="M948.1 263.2 L948.9 263.2 L951.6 263.2 L952.4 263.2 L955.2 263.2 L956.0 262.0 L958.7 262.0 L959.5 263.2 L962.2 263.2 L963.0 263.2 L965.7 263.2 L966.5 263.2 L969.2 263.2 L970.0 262.0 L972.8 262.0 L973.6 263.2 L976.3 263.2 L977.1 263.2 L979.8 263.2 L980.6 263.2 L983.3 263.2 L984.1 262.0 L986.8 262.0 L987.6 263.2 L990.3 263.2 L991.1 263.2 L993.9 263.2 L994.7 263.2 L997.4 263.2 L998.2 262.0 L998.9 262.0" stroke="#cfcfcf" stroke-width="1.2" fill="none"/><rect x="1037.59" y="253.30" width="111.08" height="13.40" rx="0.5" fill="#fcfcfc" stroke="#a6a6a6" stroke-width="1" /><path d="M1039.6 257.1 L1040.4 257.1 L1046.6 257.1 L1047.4 257.1 L1053.7 257.1 L1054.5 256.3 L1060.7 256.3 L1061.5 257.1 L1067.7 257.1 L1068.5 257.1 L1074.8 257.1 L1075.6 257.1 L1081.8 257.1 L1082.6 256.3 L1088.8 256.3 L1089.6 257.1 L1095.9 257.1 L1096.7 257.1 L1102.9 257.1 L1103.7 257.1 L1110.0 257.1 L1110.8 256.3 L1117.0 256.3 L1117.8 257.1 L1124.0 257.1 L1124.8 257.1 L1131.1 257.1 L1131.9 257.1 L1138.1 257.1 L1138.9 256.3 L1145.1 256.3 L1145.9 257.1 L1146.7 257.1" stroke="#b0b0b0" stroke-width="1.1" fill="none"/><path d="M1039.6 260.0 L1040.4 260.0 L1046.6 260.0 L1047.4 260.0 L1053.7 260.0 L1054.5 259.2 L1060.7 259.2 L1061.5 260.0 L1067.7 260.0 L1068.5 260.0 L1074.8 260.0 L1075.6 260.0 L1081.8 260.0 L1082.6 259.2 L1088.8 259.2 L1089.6 260.0 L1095.9 260.0 L1096.7 260.0 L1102.9 260.0 L1103.7 260.0 L1110.0 260.0 L1110.8 259.2 L1117.0 259.2 L1117.8 260.0 L1124.0 260.0 L1124.8 260.0 L1131.1 260.0 L1131.9 260.0 L1138.1 260.0 L1138.9 259.2 L1145.1 259.2 L1145.9 260.0 L1146.7 260.0" stroke="#b0b0b0" stroke-width="1.1" fill="none"/><path d="M1039.6 262.9 L1040.4 262.9 L1046.6 262.9 L1047.4 262.9 L1053.7 262.9 L1054.5 262.1 L1060.7 262.1 L1061.5 262.9 L1067.7 262.9 L1068.5 262.9 L1074.8 262.9 L1075.6 262.9 L1081.8 262.9 L1082.6 262.1 L1088.8 262.1 L1089.6 262.9 L1095.9 262.9 L1096.7 262.9 L1102.9 262.9 L1103.7 262.9 L1110.0 262.9 L1110.8 262.1 L1117.0 262.1 L1117.8 262.9 L1124.0 262.9 L1124.8 262.9 L1131.1 262.9 L1131.9 262.9 L1138.1 262.9 L1138.9 262.1 L1145.1 262.1 L1145.9 262.9 L1146.7 262.9" stroke="#b0b0b0" stroke-width="1.1" fill="none"/><rect x="1185.35" y="253.30" width="111.08" height="13.40" rx="0.5" fill="#fcfcfc" stroke="#a6a6a6" stroke-width="1" /><rect x="1187.3" y="258.0" width="107.1" height="4.9" fill="#c4c4c4"/><path d="M1187.3 257.7 L1188.1 257.7 L1190.9 257.7 L1191.7 257.7 L1194.4 257.7 L1195.2 256.5 L1197.9 256.5 L1198.7 257.7 L1201.4 257.7 L1202.2 257.7 L1204.9 257.7 L1205.7 257.7 L1208.5 257.7 L1209.3 256.5 L1212.0 256.5 L1212.8 257.7 L1215.5 257.7 L1216.3 257.7 L1219.0 257.7 L1219.8 257.7 L1222.5 257.7 L1223.3 256.5 L1226.0 256.5 L1226.8 257.7 L1229.6 257.7 L1230.4 257.7 L1233.1 257.7 L1233.9 257.7 L1236.6 257.7 L1237.4 256.5 L1240.1 256.5 L1240.9 257.7 L1243.6 257.7 L1244.4 257.7 L1247.2 257.7 L1248.0 257.7 L1250.7 257.7 L1251.5 256.5 L1254.2 256.5 L1255.0 257.7 L1257.7 257.7 L1258.5 257.7 L1261.2 257.7 L1262.0 257.7 L1264.7 257.7 L1265.5 256.5 L1268.3 256.5 L1269.1 257.7 L1271.8 257.7 L1272.6 257.7 L1275.3 257.7 L1276.1 257.7 L1278.8 257.7 L1279.6 256.5 L1282.3 256.5 L1283.1 257.7 L1285.9 257.7 L1286.7 257.7 L1289.4 257.7 L1290.2 257.7 L1292.9 257.7 L1293.7 256.5 L1294.4 256.5" stroke="#c4c4c4" stroke-width="1.5" fill="none"/><path d="M1187.3 263.2 L1188.1 263.2 L1190.9 263.2 L1191.7 263.2 L1194.4 263.2 L1195.2 262.0 L1197.9 262.0 L1198.7 263.2 L1201.4 263.2 L1202.2 263.2 L1204.9 263.2 L1205.7 263.2 L1208.5 263.2 L1209.3 262.0 L1212.0 262.0 L1212.8 263.2 L1215.5 263.2 L1216.3 263.2 L1219.0 263.2 L1219.8 263.2 L1222.5 263.2 L1223.3 262.0 L1226.0 262.0 L1226.8 263.2 L1229.6 263.2 L1230.4 263.2 L1233.1 263.2 L1233.9 263.2 L1236.6 263.2 L1237.4 262.0 L1240.1 262.0 L1240.9 263.2 L1243.6 263.2 L1244.4 263.2 L1247.2 263.2 L1248.0 263.2 L1250.7 263.2 L1251.5 262.0 L1254.2 262.0 L1255.0 263.2 L1257.7 263.2 L1258.5 263.2 L1261.2 263.2 L1262.0 263.2 L1264.7 263.2 L1265.5 262.0 L1268.3 262.0 L1269.1 263.2 L1271.8 263.2 L1272.6 263.2 L1275.3 263.2 L1276.1 263.2 L1278.8 263.2 L1279.6 262.0 L1282.3 262.0 L1283.1 263.2 L1285.9 263.2 L1286.7 263.2 L1289.4 263.2 L1290.2 263.2 L1292.9 263.2 L1293.7 262.0 L1294.4 262.0" stroke="#cfcfcf" stroke-width="1.2" fill="none"/><rect x="1361.25" y="253.30" width="82.93" height="13.40" rx="0.5" fill="#fcfcfc" stroke="#a6a6a6" stroke-width="1" /><rect x="1363.2" y="258.0" width="78.9" height="4.9" fill="#c4c4c4"/><path d="M1363.2 257.7 L1364.0 257.7 L1366.8 257.7 L1367.6 257.7 L1370.3 257.7 L1371.1 256.5 L1373.8 256.5 L1374.6 257.7 L1377.3 257.7 L1378.1 257.7 L1380.8 257.7 L1381.6 257.7 L1384.4 257.7 L1385.2 256.5 L1387.9 256.5 L1388.7 257.7 L1391.4 257.7 L1392.2 257.7 L1394.9 257.7 L1395.7 257.7 L1398.4 257.7 L1399.2 256.5 L1401.9 256.5 L1402.7 257.7 L1405.5 257.7 L1406.3 257.7 L1409.0 257.7 L1409.8 257.7 L1412.5 257.7 L1413.3 256.5 L1416.0 256.5 L1416.8 257.7 L1419.5 257.7 L1420.3 257.7 L1423.1 257.7 L1423.9 257.7 L1426.6 257.7 L1427.4 256.5 L1430.1 256.5 L1430.9 257.7 L1433.6 257.7 L1434.4 257.7 L1437.1 257.7 L1437.9 257.7 L1440.6 257.7 L1441.4 256.5 L1442.2 256.5" stroke="#c4c4c4" stroke-width="1.5" fill="none"/><path d="M1363.2 263.2 L1364.0 263.2 L1366.8 263.2 L1367.6 263.2 L1370.3 263.2 L1371.1 262.0 L1373.8 262.0 L1374.6 263.2 L1377.3 263.2 L1378.1 263.2 L1380.8 263.2 L1381.6 263.2 L1384.4 263.2 L1385.2 262.0 L1387.9 262.0 L1388.7 263.2 L1391.4 263.2 L1392.2 263.2 L1394.9 263.2 L1395.7 263.2 L1398.4 263.2 L1399.2 262.0 L1401.9 262.0 L1402.7 263.2 L1405.5 263.2 L1406.3 263.2 L1409.0 263.2 L1409.8 263.2 L1412.5 263.2 L1413.3 262.0 L1416.0 262.0 L1416.8 263.2 L1419.5 263.2 L1420.3 263.2 L1423.1 263.2 L1423.9 263.2 L1426.6 263.2 L1427.4 262.0 L1430.1 262.0 L1430.9 263.2 L1433.6 263.2 L1434.4 263.2 L1437.1 263.2 L1437.9 263.2 L1440.6 263.2 L1441.4 262.0 L1442.2 262.0" stroke="#cfcfcf" stroke-width="1.2" fill="none"/><rect x="1185.35" y="270.70" width="111.08" height="13.70" rx="0.5" fill="#fcfcfc" stroke="#a6a6a6" stroke-width="1" /><rect x="1187.3" y="275.5" width="107.1" height="5.0" fill="#c4c4c4"/><path d="M1187.3 275.2 L1188.1 275.2 L1190.9 275.2 L1191.7 275.2 L1194.4 275.2 L1195.2 274.0 L1197.9 274.0 L1198.7 275.2 L1201.4 275.2 L1202.2 275.2 L1204.9 275.2 L1205.7 275.2 L1208.5 275.2 L1209.3 274.0 L1212.0 274.0 L1212.8 275.2 L1215.5 275.2 L1216.3 275.2 L1219.0 275.2 L1219.8 275.2 L1222.5 275.2 L1223.3 274.0 L1226.0 274.0 L1226.8 275.2 L1229.6 275.2 L1230.4 275.2 L1233.1 275.2 L1233.9 275.2 L1236.6 275.2 L1237.4 274.0 L1240.1 274.0 L1240.9 275.2 L1243.6 275.2 L1244.4 275.2 L1247.2 275.2 L1248.0 275.2 L1250.7 275.2 L1251.5 274.0 L1254.2 274.0 L1255.0 275.2 L1257.7 275.2 L1258.5 275.2 L1261.2 275.2 L1262.0 275.2 L1264.7 275.2 L1265.5 274.0 L1268.3 274.0 L1269.1 275.2 L1271.8 275.2 L1272.6 275.2 L1275.3 275.2 L1276.1 275.2 L1278.8 275.2 L1279.6 274.0 L1282.3 274.0 L1283.1 275.2 L1285.9 275.2 L1286.7 275.2 L1289.4 275.2 L1290.2 275.2 L1292.9 275.2 L1293.7 274.0 L1294.4 274.0" stroke="#c4c4c4" stroke-width="1.5" fill="none"/><path d="M1187.3 280.8 L1188.1 280.8 L1190.9 280.8 L1191.7 280.8 L1194.4 280.8 L1195.2 279.6 L1197.9 279.6 L1198.7 280.8 L1201.4 280.8 L1202.2 280.8 L1204.9 280.8 L1205.7 280.8 L1208.5 280.8 L1209.3 279.6 L1212.0 279.6 L1212.8 280.8 L1215.5 280.8 L1216.3 280.8 L1219.0 280.8 L1219.8 280.8 L1222.5 280.8 L1223.3 279.6 L1226.0 279.6 L1226.8 280.8 L1229.6 280.8 L1230.4 280.8 L1233.1 280.8 L1233.9 280.8 L1236.6 280.8 L1237.4 279.6 L1240.1 279.6 L1240.9 280.8 L1243.6 280.8 L1244.4 280.8 L1247.2 280.8 L1248.0 280.8 L1250.7 280.8 L1251.5 279.6 L1254.2 279.6 L1255.0 280.8 L1257.7 280.8 L1258.5 280.8 L1261.2 280.8 L1262.0 280.8 L1264.7 280.8 L1265.5 279.6 L1268.3 279.6 L1269.1 280.8 L1271.8 280.8 L1272.6 280.8 L1275.3 280.8 L1276.1 280.8 L1278.8 280.8 L1279.6 279.6 L1282.3 279.6 L1283.1 280.8 L1285.9 280.8 L1286.7 280.8 L1289.4 280.8 L1290.2 280.8 L1292.9 280.8 L1293.7 279.6 L1294.4 279.6" stroke="#cfcfcf" stroke-width="1.2" fill="none"/><rect x="1361.25" y="270.70" width="82.93" height="13.70" rx="0.5" fill="#fcfcfc" stroke="#a6a6a6" stroke-width="1" /><rect x="1363.2" y="275.5" width="78.9" height="5.0" fill="#c4c4c4"/><path d="M1363.2 275.2 L1364.0 275.2 L1366.8 275.2 L1367.6 275.2 L1370.3 275.2 L1371.1 274.0 L1373.8 274.0 L1374.6 275.2 L1377.3 275.2 L1378.1 275.2 L1380.8 275.2 L1381.6 275.2 L1384.4 275.2 L1385.2 274.0 L1387.9 274.0 L1388.7 275.2 L1391.4 275.2 L1392.2 275.2 L1394.9 275.2 L1395.7 275.2 L1398.4 275.2 L1399.2 274.0 L1401.9 274.0 L1402.7 275.2 L1405.5 275.2 L1406.3 275.2 L1409.0 275.2 L1409.8 275.2 L1412.5 275.2 L1413.3 274.0 L1416.0 274.0 L1416.8 275.2 L1419.5 275.2 L1420.3 275.2 L1423.1 275.2 L1423.9 275.2 L1426.6 275.2 L1427.4 274.0 L1430.1 274.0 L1430.9 275.2 L1433.6 275.2 L1434.4 275.2 L1437.1 275.2 L1437.9 275.2 L1440.6 275.2 L1441.4 274.0 L1442.2 274.0" stroke="#c4c4c4" stroke-width="1.5" fill="none"/><path d="M1363.2 280.8 L1364.0 280.8 L1366.8 280.8 L1367.6 280.8 L1370.3 280.8 L1371.1 279.6 L1373.8 279.6 L1374.6 280.8 L1377.3 280.8 L1378.1 280.8 L1380.8 280.8 L1381.6 280.8 L1384.4 280.8 L1385.2 279.6 L1387.9 279.6 L1388.7 280.8 L1391.4 280.8 L1392.2 280.8 L1394.9 280.8 L1395.7 280.8 L1398.4 280.8 L1399.2 279.6 L1401.9 279.6 L1402.7 280.8 L1405.5 280.8 L1406.3 280.8 L1409.0 280.8 L1409.8 280.8 L1412.5 280.8 L1413.3 279.6 L1416.0 279.6 L1416.8 280.8 L1419.5 280.8 L1420.3 280.8 L1423.1 280.8 L1423.9 280.8 L1426.6 280.8 L1427.4 279.6 L1430.1 279.6 L1430.9 280.8 L1433.6 280.8 L1434.4 280.8 L1437.1 280.8 L1437.9 280.8 L1440.6 280.8 L1441.4 279.6 L1442.2 279.6" stroke="#cfcfcf" stroke-width="1.2" fill="none"/><rect x="1009.45" y="288.40" width="167.36" height="13.80" rx="0.5" fill="#f0f0f0" stroke="#a6a6a6" stroke-width="1" /><path d="M1011.4 295.3 L1012.2 295.3 L1018.5 295.3 L1019.3 295.3 L1025.5 295.3 L1026.3 293.8 L1032.6 293.8 L1033.4 295.3 L1039.6 295.3 L1040.4 295.3 L1046.6 295.3 L1047.4 295.3 L1053.7 295.3 L1054.5 293.8 L1060.7 293.8 L1061.5 295.3 L1067.7 295.3 L1068.5 295.3 L1074.8 295.3 L1075.6 295.3 L1081.8 295.3 L1082.6 293.8 L1088.8 293.8 L1089.6 295.3 L1095.9 295.3 L1096.7 295.3 L1102.9 295.3 L1103.7 295.3 L1110.0 295.3 L1110.8 293.8 L1117.0 293.8 L1117.8 295.3 L1124.0 295.3 L1124.8 295.3 L1131.1 295.3 L1131.9 295.3 L1138.1 295.3 L1138.9 293.8 L1145.1 293.8 L1145.9 295.3 L1152.2 295.3 L1153.0 295.3 L1159.2 295.3 L1160.0 295.3 L1166.2 295.3 L1167.0 293.8 L1173.3 293.8 L1174.1 295.3 L1174.8 295.3" stroke="#b4b4b4" stroke-width="2.2" fill="none"/><rect x="1185.35" y="306.20" width="111.08" height="13.60" rx="0.5" fill="#fcfcfc" stroke="#a6a6a6" stroke-width="1" /><path d="M1187.3 312.7h1.8 M1189.7 311.7h1.2 M1191.8 310.7h2.4 M1195.1 311.7h1.8 M1197.8 310.7h1.8 M1200.2 311.7h1.2 M1202.3 311.7h2.4 M1205.3 311.7h2.4 M1208.6 312.7h1.8 M1211.3 312.7h1.8 M1213.7 312.7h1.8 M1216.1 312.7h1.2 M1217.9 313.7h2.4 M1220.9 313.7h2.4 M1224.2 313.7h2.4 M1227.5 314.7h1.2 M1229.3 313.7h1.2 M1231.4 314.7h2.4 M1234.7 314.7h2.4 M1238.0 313.7h1.2 M1240.1 312.7h2.4 M1243.1 311.7h1.2 M1244.9 312.7h1.8 M1247.6 311.7h2.4 M1250.9 312.7h1.2 M1253.0 313.7h1.8 M1255.4 312.7h1.8 M1258.1 311.7h1.2 M1259.9 310.7h2.4 M1262.9 310.7h1.2 M1264.7 311.7h1.2 M1266.8 311.7h1.8 M1269.2 310.7h2.4 M1272.5 311.7h2.4 M1275.8 312.7h2.4 M1279.1 311.7h1.2 M1280.9 310.7h1.2 M1282.7 310.7h1.2 M1284.5 310.7h1.2 M1286.3 310.7h2.4 M1289.3 310.7h1.8 M1291.7 311.7h2.4" stroke="#a4a4a4" stroke-width="1.0"/><rect x="411.39" y="323.80" width="167.36" height="13.80" rx="0.5" fill="#fcfcfc" stroke="#a6a6a6" stroke-width="1" /><path d="M413.4 328.6 L414.2 328.6 L416.9 328.6 L417.7 328.6 L420.4 328.6 L421.2 327.3 L423.9 327.3 L424.7 328.6 L427.5 328.6 L428.3 328.6 L431.0 328.6 L431.8 328.6 L434.5 328.6 L435.3 327.3 L438.0 327.3 L438.8 328.6 L441.5 328.6 L442.3 328.6 L445.0 328.6 L445.8 328.6 L448.6 328.6 L449.4 327.3 L452.1 327.3 L452.9 328.6 L455.6 328.6 L456.4 328.6 L459.1 328.6 L459.9 328.6 L462.6 328.6 L463.4 327.3 L466.2 327.3 L467.0 328.6 L469.7 328.6 L470.5 328.6 L473.2 328.6 L474.0 328.6 L476.7 328.6 L477.5 327.3 L480.2 327.3 L481.0 328.6 L483.7 328.6 L484.5 328.6 L487.3 328.6 L488.1 328.6 L490.8 328.6 L491.6 327.3 L494.3 327.3 L495.1 328.6 L497.8 328.6 L498.6 328.6 L501.3 328.6 L502.1 328.6 L504.9 328.6 L505.7 327.3 L508.4 327.3 L509.2 328.6 L511.9 328.6 L512.7 328.6 L515.4 328.6 L516.2 328.6 L518.9 328.6 L519.7 327.3 L522.4 327.3 L523.2 328.6 L526.0 328.6 L526.8 328.6 L529.5 328.6 L530.3 328.6 L533.0 328.6 L533.8 327.3 L536.5 327.3 L537.3 328.6 L540.0 328.6 L540.8 328.6 L543.6 328.6 L544.4 328.6 L547.1 328.6 L547.9 327.3 L550.6 327.3 L551.4 328.6 L554.1 328.6 L554.9 328.6 L557.6 328.6 L558.4 328.6 L561.1 328.6 L561.9 327.3 L564.7 327.3 L565.5 328.6 L568.2 328.6 L569.0 328.6 L571.7 328.6 L572.5 328.6 L575.2 328.6 L576.0 327.3 L576.8 327.3" stroke="#a8a8a8" stroke-width="1.3" fill="none"/><path d="M413.4 333.1 L414.2 333.1 L416.9 333.1 L417.7 333.1 L420.4 333.1 L421.2 331.8 L423.9 331.8 L424.7 333.1 L427.5 333.1 L428.3 333.1 L431.0 333.1 L431.8 333.1 L434.5 333.1 L435.3 331.8 L438.0 331.8 L438.8 333.1 L441.5 333.1 L442.3 333.1 L445.0 333.1 L445.8 333.1 L448.6 333.1 L449.4 331.8 L452.1 331.8 L452.9 333.1 L455.6 333.1 L456.4 333.1 L459.1 333.1 L459.9 333.1 L462.6 333.1 L463.4 331.8 L466.2 331.8 L467.0 333.1 L469.7 333.1 L470.5 333.1 L473.2 333.1 L474.0 333.1 L476.7 333.1 L477.5 331.8 L480.2 331.8 L481.0 333.1 L483.7 333.1 L484.5 333.1 L487.3 333.1 L488.1 333.1 L490.8 333.1 L491.6 331.8 L494.3 331.8 L495.1 333.1 L497.8 333.1 L498.6 333.1 L501.3 333.1 L502.1 333.1 L504.9 333.1 L505.7 331.8 L508.4 331.8 L509.2 333.1 L511.9 333.1 L512.7 333.1 L515.4 333.1 L516.2 333.1 L518.9 333.1 L519.7 331.8 L522.4 331.8 L523.2 333.1 L526.0 333.1 L526.8 333.1 L529.5 333.1 L530.3 333.1 L533.0 333.1 L533.8 331.8 L536.5 331.8 L537.3 333.1 L540.0 333.1 L540.8 333.1 L543.6 333.1 L544.4 333.1 L547.1 333.1 L547.9 331.8 L550.6 331.8 L551.4 333.1 L554.1 333.1 L554.9 333.1 L557.6 333.1 L558.4 333.1 L561.1 333.1 L561.9 331.8 L564.7 331.8 L565.5 333.1 L568.2 333.1 L569.0 333.1 L571.7 333.1 L572.5 333.1 L575.2 333.1 L576.0 331.8 L576.8 331.8" stroke="#a8a8a8" stroke-width="1.3" fill="none"/><rect x="383.24" y="341.60" width="195.51" height="13.40" rx="0.5" fill="#fcfcfc" stroke="#a6a6a6" stroke-width="1" /><path d="M385.2 346.3 L386.0 346.3 L388.8 346.3 L389.6 346.3 L392.3 346.3 L393.1 345.0 L395.8 345.0 L396.6 346.3 L399.3 346.3 L400.1 346.3 L402.8 346.3 L403.6 346.3 L406.4 346.3 L407.2 345.0 L409.9 345.0 L410.7 346.3 L413.4 346.3 L414.2 346.3 L416.9 346.3 L417.7 346.3 L420.4 346.3 L421.2 345.0 L423.9 345.0 L424.7 346.3 L427.5 346.3 L428.3 346.3 L431.0 346.3 L431.8 346.3 L434.5 346.3 L435.3 345.0 L438.0 345.0 L438.8 346.3 L441.5 346.3 L442.3 346.3 L445.0 346.3 L445.8 346.3 L448.6 346.3 L449.4 345.0 L452.1 345.0 L452.9 346.3 L455.6 346.3 L456.4 346.3 L459.1 346.3 L459.9 346.3 L462.6 346.3 L463.4 345.0 L466.2 345.0 L467.0 346.3 L469.7 346.3 L470.5 346.3 L473.2 346.3 L474.0 346.3 L476.7 346.3 L477.5 345.0 L480.2 345.0 L481.0 346.3 L483.7 346.3 L484.5 346.3 L487.3 346.3 L488.1 346.3 L490.8 346.3 L491.6 345.0 L494.3 345.0 L495.1 346.3 L497.8 346.3 L498.6 346.3 L501.3 346.3 L502.1 346.3 L504.9 346.3 L505.7 345.0 L508.4 345.0 L509.2 346.3 L511.9 346.3 L512.7 346.3 L515.4 346.3 L516.2 346.3 L518.9 346.3 L519.7 345.0 L522.4 345.0 L523.2 346.3 L526.0 346.3 L526.8 346.3 L529.5 346.3 L530.3 346.3 L533.0 346.3 L533.8 345.0 L536.5 345.0 L537.3 346.3 L540.0 346.3 L540.8 346.3 L543.6 346.3 L544.4 346.3 L547.1 346.3 L547.9 345.0 L550.6 345.0 L551.4 346.3 L554.1 346.3 L554.9 346.3 L557.6 346.3 L558.4 346.3 L561.1 346.3 L561.9 345.0 L564.7 345.0 L565.5 346.3 L568.2 346.3 L569.0 346.3 L571.7 346.3 L572.5 346.3 L575.2 346.3 L576.0 345.0 L576.8 345.0" stroke="#a8a8a8" stroke-width="1.3" fill="none"/><path d="M385.2 350.6 L386.0 350.6 L388.8 350.6 L389.6 350.6 L392.3 350.6 L393.1 349.3 L395.8 349.3 L396.6 350.6 L399.3 350.6 L400.1 350.6 L402.8 350.6 L403.6 350.6 L406.4 350.6 L407.2 349.3 L409.9 349.3 L410.7 350.6 L413.4 350.6 L414.2 350.6 L416.9 350.6 L417.7 350.6 L420.4 350.6 L421.2 349.3 L423.9 349.3 L424.7 350.6 L427.5 350.6 L428.3 350.6 L431.0 350.6 L431.8 350.6 L434.5 350.6 L435.3 349.3 L438.0 349.3 L438.8 350.6 L441.5 350.6 L442.3 350.6 L445.0 350.6 L445.8 350.6 L448.6 350.6 L449.4 349.3 L452.1 349.3 L452.9 350.6 L455.6 350.6 L456.4 350.6 L459.1 350.6 L459.9 350.6 L462.6 350.6 L463.4 349.3 L466.2 349.3 L467.0 350.6 L469.7 350.6 L470.5 350.6 L473.2 350.6 L474.0 350.6 L476.7 350.6 L477.5 349.3 L480.2 349.3 L481.0 350.6 L483.7 350.6 L484.5 350.6 L487.3 350.6 L488.1 350.6 L490.8 350.6 L491.6 349.3 L494.3 349.3 L495.1 350.6 L497.8 350.6 L498.6 350.6 L501.3 350.6 L502.1 350.6 L504.9 350.6 L505.7 349.3 L508.4 349.3 L509.2 350.6 L511.9 350.6 L512.7 350.6 L515.4 350.6 L516.2 350.6 L518.9 350.6 L519.7 349.3 L522.4 349.3 L523.2 350.6 L526.0 350.6 L526.8 350.6 L529.5 350.6 L530.3 350.6 L533.0 350.6 L533.8 349.3 L536.5 349.3 L537.3 350.6 L540.0 350.6 L540.8 350.6 L543.6 350.6 L544.4 350.6 L547.1 350.6 L547.9 349.3 L550.6 349.3 L551.4 350.6 L554.1 350.6 L554.9 350.6 L557.6 350.6 L558.4 350.6 L561.1 350.6 L561.9 349.3 L564.7 349.3 L565.5 350.6 L568.2 350.6 L569.0 350.6 L571.7 350.6 L572.5 350.6 L575.2 350.6 L576.0 349.3 L576.8 349.3" stroke="#a8a8a8" stroke-width="1.3" fill="none"/><rect x="587.29" y="359.00" width="195.51" height="13.70" rx="0.5" fill="#fcfcfc" stroke="#a6a6a6" stroke-width="1" /><path d="M589.3 365.1 H780.8" stroke="#acacac" stroke-width="1.8" stroke-dasharray="4.2 0.9"/><rect x="833.55" y="359.00" width="167.36" height="13.70" rx="0.5" fill="#fcfcfc" stroke="#a6a6a6" stroke-width="1" /><path d="M835.5 365.1 H946.6" stroke="#acacac" stroke-width="1.8" stroke-dasharray="4.2 0.9"/><path d="M946.6 366.1h1.2 M948.7 365.1h1.8 M951.1 366.1h1.8 M953.5 366.1h1.8 M956.2 365.1h2.4 M959.5 364.1h1.2 M961.3 364.1h1.2 M963.1 363.1h1.8 M965.8 364.1h1.2 M967.9 365.1h2.4 M971.2 366.1h2.4 M974.5 366.1h2.4 M977.5 365.1h2.4 M980.5 364.1h1.8 M982.9 365.1h1.2 M984.7 366.1h1.8 M987.1 366.1h1.8 M989.5 366.1h2.4 M992.8 366.1h2.4 M995.8 365.1h1.8" stroke="#a4a4a4" stroke-width="1.0"/><rect x="411.39" y="376.70" width="139.22" height="13.60" rx="0.5" fill="#fcfcfc" stroke="#a6a6a6" stroke-width="1" /><path d="M413.4 382.2h1.8 M415.8 383.2h1.2 M417.6 382.2h1.2 M419.4 381.2h2.4 M422.4 381.2h1.2 M424.2 381.2h1.2 M426.0 382.2h2.4 M429.0 383.2h1.2 M430.8 382.2h2.4 M434.1 381.2h2.4 M437.1 382.2h1.8 M439.5 381.2h1.2 M441.3 381.2h1.2 M443.1 382.2h1.2 M445.2 382.2h1.2 M447.0 381.2h2.4 M450.0 381.2h1.8 M452.7 381.2h1.8 M455.1 381.2h1.8 M457.8 381.2h2.4 M461.1 381.2h2.4 M464.4 381.2h2.4 M467.4 381.2h1.2 M469.5 382.2h1.2 M471.6 382.2h2.4 M474.6 383.2h2.4 M477.6 384.2h1.2 M479.7 383.2h1.8 M482.1 384.2h1.2 M484.2 383.2h1.2 M486.3 383.2h1.2 M488.4 384.2h1.2 M490.5 385.2h1.8 M493.2 385.2h1.2 M495.3 384.2h2.4 M498.3 384.2h1.2 M500.1 385.2h1.2 M502.2 385.2h2.4 M505.2 385.2h1.8 M507.9 384.2h1.8 M510.6 385.2h1.2 M512.7 385.2h1.2 M514.8 384.2h1.8 M517.5 384.2h2.4 M520.5 384.2h2.4 M523.5 384.2h1.2 M525.3 384.2h2.4 M528.6 385.2h1.2 M530.7 385.2h2.4 M534.0 384.2h1.8 M536.7 385.2h1.8 M539.1 384.2h1.8 M541.8 385.2h2.4 M544.8 385.2h1.2" stroke="#a4a4a4" stroke-width="1.0"/><rect x="587.29" y="394.30" width="195.51" height="13.80" rx="0.5" fill="#fcfcfc" stroke="#a6a6a6" stroke-width="1" /><path d="M589.3 400.5 H780.8" stroke="#acacac" stroke-width="1.8" stroke-dasharray="4.2 0.9"/><rect x="833.55" y="394.30" width="167.36" height="13.80" rx="0.5" fill="#fcfcfc" stroke="#a6a6a6" stroke-width="1" /><path d="M835.5 400.5 H946.6" stroke="#acacac" stroke-width="1.8" stroke-dasharray="4.2 0.9"/><path d="M946.6 401.5h1.2 M948.4 400.5h2.4 M951.7 401.5h2.4 M955.0 400.5h1.2 M957.1 399.5h1.8 M959.5 398.5h2.4 M962.5 398.5h1.8 M964.9 398.5h1.8 M967.6 398.5h1.8 M970.0 398.5h2.4 M973.0 398.5h1.2 M975.1 398.5h1.2 M976.9 398.5h1.8 M979.3 399.5h2.4 M982.6 399.5h1.2 M984.4 399.5h2.4 M987.7 398.5h2.4 M990.7 398.5h2.4 M994.0 398.5h2.4 M997.0 399.5h1.2" stroke="#a4a4a4" stroke-width="1.0"/><rect x="1065.74" y="394.30" width="82.93" height="13.80" rx="0.5" fill="#fcfcfc" stroke="#a6a6a6" stroke-width="1" /><path d="M1067.7 400.9h1.8 M1070.1 400.9h1.2 M1072.2 401.9h2.4 M1075.2 401.9h1.8 M1077.9 401.9h1.2 M1080.0 402.9h2.4 M1083.0 402.9h1.8 M1085.4 402.9h1.8 M1087.8 401.9h1.8 M1090.2 400.9h2.4 M1093.2 401.9h1.8 M1095.6 402.9h1.8 M1098.0 402.9h1.8 M1100.4 402.9h1.8 M1103.1 402.9h2.4 M1106.4 401.9h2.4 M1109.4 401.9h2.4 M1112.4 402.9h2.4 M1115.7 402.9h1.2 M1117.8 402.9h1.8 M1120.5 401.9h1.2 M1122.3 401.9h1.8 M1125.0 402.9h1.8 M1127.4 401.9h1.8 M1130.1 402.9h1.2 M1132.2 402.9h1.2 M1134.0 401.9h1.2 M1135.8 401.9h2.4 M1138.8 400.9h1.8 M1141.5 400.9h1.8 M1143.9 400.9h1.8" stroke="#a4a4a4" stroke-width="1.0"/><rect x="1304.96" y="394.30" width="139.22" height="13.80" rx="0.5" fill="#fcfcfc" stroke="#a6a6a6" stroke-width="1" /><path d="M1307.0 400.9h2.4 M1310.3 400.9h2.4 M1313.3 400.9h1.2 M1315.4 400.9h1.2 M1317.5 400.9h1.8 M1320.2 400.9h2.4 M1323.2 401.9h1.8 M1325.6 401.9h1.8 M1328.0 400.9h2.4 M1331.3 399.9h2.4 M1334.6 400.9h2.4 M1337.6 401.9h1.2 M1339.4 400.9h2.4 M1342.7 400.9h2.4 M1345.7 401.9h1.2 M1347.5 400.9h1.8 M1350.2 399.9h1.2 M1352.3 400.9h1.2 M1354.1 401.9h2.4 M1357.4 400.9h1.8 M1359.8 401.9h1.2 M1361.9 402.9h1.2 M1363.7 402.9h1.8 M1366.1 401.9h1.8 M1368.8 402.9h1.2 M1370.9 402.9h1.2 M1373.0 401.9h1.8 M1375.4 402.9h2.4 M1378.4 401.9h1.8 M1381.1 402.9h2.4 M1384.4 402.9h1.8 M1387.1 402.9h1.8 M1389.8 402.9h1.2 M1391.6 402.9h1.8 M1394.0 401.9h2.4 M1397.0 402.9h2.4 M1400.3 401.9h2.4 M1403.6 401.9h1.2 M1405.4 400.9h2.4 M1408.7 401.9h1.2 M1410.8 400.9h2.4 M1414.1 400.9h1.8 M1416.5 400.9h1.8 M1419.2 400.9h1.8 M1421.6 400.9h1.8 M1424.3 400.9h1.8 M1427.0 401.9h1.8 M1429.7 400.9h2.4 M1433.0 399.9h1.8 M1435.4 399.9h2.4 M1438.7 398.9h2.4" stroke="#a4a4a4" stroke-width="1.0"/><rect x="1150.17" y="412.10" width="26.64" height="13.20" rx="0.5" fill="#fcfcfc" stroke="#a6a6a6" stroke-width="1" /><path d="M1152.2 417.5h2.4 M1155.5 418.3h2.4 M1158.5 418.3h1.8 M1160.9 417.5h1.2 M1162.7 417.5h2.4 M1165.7 418.3h2.4 M1169.0 418.3h1.2 M1170.8 417.5h1.2 M1172.9 418.3h1.2" stroke="#a4a4a4" stroke-width="1.2"/><path d="M1152.2 419.6h1.8 M1154.6 420.4h1.2 M1156.7 419.6h1.8 M1159.4 419.6h1.2 M1161.5 418.8h1.8 M1163.9 418.8h2.4 M1166.9 418.8h2.4 M1169.9 418.8h1.8 M1172.6 418.8h1.2" stroke="#a4a4a4" stroke-width="1.2"/><rect x="411.39" y="428.70" width="139.22" height="8.70" rx="0.5" fill="url(#p1)" stroke="#2a78b8" stroke-width="1" /><rect x="411.39" y="440.80" width="139.22" height="13.60" rx="0.5" fill="url(#p2)" stroke="#1b5e96" stroke-width="1" /><rect x="643.58" y="428.70" width="139.22" height="8.70" rx="0.5" fill="url(#p1)" stroke="#2a78b8" stroke-width="1" /><rect x="643.58" y="440.80" width="139.22" height="13.60" rx="0.5" fill="url(#p2)" stroke="#1b5e96" stroke-width="1" /><rect x="805.40" y="428.70" width="75.90" height="8.70" rx="0.5" fill="url(#p1)" stroke="#2a78b8" stroke-width="1" /><rect x="805.40" y="440.80" width="75.90" height="13.60" rx="0.5" fill="url(#p2)" stroke="#1b5e96" stroke-width="1" /><rect x="889.84" y="428.70" width="111.08" height="8.70" rx="0.5" fill="url(#p1)" stroke="#2a78b8" stroke-width="1" /><rect x="889.84" y="440.80" width="111.08" height="13.60" rx="0.5" fill="url(#p2)" stroke="#1b5e96" stroke-width="1" /><rect x="1037.59" y="428.70" width="139.22" height="8.70" rx="0.5" fill="url(#p1)" stroke="#2a78b8" stroke-width="1" /><rect x="1037.59" y="440.80" width="139.22" height="13.60" rx="0.5" fill="url(#p2)" stroke="#1b5e96" stroke-width="1" /><rect x="1241.64" y="428.70" width="54.79" height="8.70" rx="0.5" fill="url(#p1)" stroke="#2a78b8" stroke-width="1" /><rect x="1241.64" y="440.80" width="54.79" height="13.60" rx="0.5" fill="url(#p2)" stroke="#1b5e96" stroke-width="1" /><rect x="1304.96" y="428.70" width="47.75" height="8.70" rx="0.5" fill="url(#p1)" stroke="#2a78b8" stroke-width="1" /><rect x="1304.96" y="440.80" width="47.75" height="13.60" rx="0.5" fill="url(#p2)" stroke="#1b5e96" stroke-width="1" /><rect x="1361.25" y="428.70" width="82.93" height="8.70" rx="0.5" fill="url(#p1)" stroke="#2a78b8" stroke-width="1" /><rect x="1361.25" y="440.80" width="82.93" height="13.60" rx="0.5" fill="url(#p2)" stroke="#1b5e96" stroke-width="1" /><rect x="1185.30" y="428.70" width="1.20" height="8.70" rx="0.5" fill="#48ade8" stroke="#2a78b8" stroke-width="1" /><rect x="1185.30" y="440.80" width="1.20" height="13.60" rx="0.5" fill="#2a88cf" stroke="#1b5e96" stroke-width="1" /><rect x="383.24" y="457.80" width="195.51" height="8.30" rx="0.5" fill="url(#p3)" stroke="#a07a10" stroke-width="1" /><rect x="615.43" y="457.80" width="167.36" height="8.30" rx="0.5" fill="url(#p4)" stroke="#a07a10" stroke-width="1" /><rect x="805.40" y="457.80" width="195.51" height="8.30" rx="0.5" fill="url(#p5)" stroke="#a07a10" stroke-width="1" /><rect x="1009.45" y="457.80" width="167.36" height="8.30" rx="0.5" fill="url(#p6)" stroke="#a07a10" stroke-width="1" /><rect x="1185.35" y="457.80" width="111.08" height="8.30" rx="0.5" fill="url(#p7)" stroke="#a07a10" stroke-width="1" /><rect x="1304.96" y="457.80" width="139.22" height="8.30" rx="0.5" fill="url(#p8)" stroke="#a07a10" stroke-width="1" /><rect x="383.74" y="458.30" width="25.64" height="7.30" fill="url(#p9)" /><rect x="552.61" y="458.30" width="25.64" height="7.30" fill="url(#p10)" /><rect x="615.93" y="458.30" width="25.64" height="7.30" fill="url(#p11)" /><rect x="411.39" y="468.90" width="139.22" height="8.40" rx="0.5" fill="url(#p12)" stroke="#a07a10" stroke-width="1" /><rect x="411.39" y="480.10" width="139.22" height="8.50" rx="0.5" fill="url(#p13)" stroke="#a07a10" stroke-width="1" /><rect x="805.40" y="468.90" width="195.51" height="8.40" rx="0.5" fill="url(#p14)" stroke="#a07a10" stroke-width="1" /><rect x="805.40" y="480.10" width="195.51" height="8.50" rx="0.5" fill="url(#p15)" stroke="#a07a10" stroke-width="1" /><rect x="1009.45" y="468.90" width="139.22" height="8.40" rx="0.5" fill="url(#p16)" stroke="#a07a10" stroke-width="1" /><rect x="1009.45" y="480.10" width="139.22" height="8.50" rx="0.5" fill="url(#p17)" stroke="#a07a10" stroke-width="1" /><rect x="1185.35" y="468.90" width="111.08" height="8.40" rx="0.5" fill="url(#p18)" stroke="#a07a10" stroke-width="1" /><rect x="1185.35" y="480.10" width="111.08" height="8.50" rx="0.5" fill="url(#p19)" stroke="#a07a10" stroke-width="1" /><rect x="1304.96" y="468.90" width="47.75" height="8.40" rx="0.5" fill="url(#p20)" stroke="#a07a10" stroke-width="1" /><rect x="1304.96" y="480.10" width="47.75" height="8.50" rx="0.5" fill="url(#p21)" stroke="#a07a10" stroke-width="1" /><rect x="1361.25" y="468.90" width="82.93" height="8.40" rx="0.5" fill="url(#p22)" stroke="#a07a10" stroke-width="1" /><rect x="1361.25" y="480.10" width="82.93" height="8.50" rx="0.5" fill="url(#p23)" stroke="#a07a10" stroke-width="1" /><rect x="1065.64" y="491.90" width="7.45" height="13.80" fill="#8c6a0a" stroke="#b89030" stroke-width="0.7"/><rect x="1074.39" y="491.90" width="7.45" height="13.80" fill="#8c6a0a" stroke="#b89030" stroke-width="0.7"/><rect x="1083.14" y="491.90" width="7.45" height="13.80" fill="#8c6a0a" stroke="#b89030" stroke-width="0.7"/><rect x="1091.90" y="491.90" width="7.45" height="13.80" fill="#8c6a0a" stroke="#b89030" stroke-width="0.7"/><rect x="1100.65" y="491.90" width="7.45" height="13.80" fill="#8c6a0a" stroke="#b89030" stroke-width="0.7"/><rect x="1109.40" y="491.90" width="7.45" height="13.80" fill="#8c6a0a" stroke="#b89030" stroke-width="0.7"/><rect x="1118.16" y="491.90" width="7.45" height="13.80" fill="#8c6a0a" stroke="#b89030" stroke-width="0.7"/><rect x="1126.91" y="491.90" width="7.45" height="13.80" fill="#8c6a0a" stroke="#b89030" stroke-width="0.7"/><rect x="1135.66" y="491.90" width="7.45" height="13.80" fill="#8c6a0a" stroke="#b89030" stroke-width="0.7"/><rect x="1144.42" y="491.90" width="7.45" height="13.80" fill="#8c6a0a" stroke="#b89030" stroke-width="0.7"/><rect x="1153.17" y="491.90" width="7.45" height="13.80" fill="#8c6a0a" stroke="#b89030" stroke-width="0.7"/><rect x="1161.92" y="491.90" width="7.45" height="13.80" fill="#8c6a0a" stroke="#b89030" stroke-width="0.7"/><rect x="1241.54" y="491.90" width="8.00" height="13.80" fill="#8c6a0a" stroke="#b89030" stroke-width="0.7"/><rect x="1250.83" y="491.90" width="8.00" height="13.80" fill="#8c6a0a" stroke="#b89030" stroke-width="0.7"/><rect x="1260.13" y="491.90" width="8.00" height="13.80" fill="#8c6a0a" stroke="#b89030" stroke-width="0.7"/><rect x="1269.43" y="491.90" width="8.00" height="13.80" fill="#8c6a0a" stroke="#b89030" stroke-width="0.7"/><rect x="1278.73" y="491.90" width="8.00" height="13.80" fill="#8c6a0a" stroke="#b89030" stroke-width="0.7"/><rect x="1288.03" y="491.90" width="8.00" height="13.80" fill="#8c6a0a" stroke="#b89030" stroke-width="0.7"/><rect x="1304.86" y="491.90" width="7.46" height="13.80" fill="#8c6a0a" stroke="#b89030" stroke-width="0.7"/><rect x="1313.62" y="491.90" width="7.46" height="13.80" fill="#8c6a0a" stroke="#b89030" stroke-width="0.7"/><rect x="1322.39" y="491.90" width="7.46" height="13.80" fill="#8c6a0a" stroke="#b89030" stroke-width="0.7"/><rect x="1331.15" y="491.90" width="7.46" height="13.80" fill="#8c6a0a" stroke="#b89030" stroke-width="0.7"/><rect x="1339.91" y="491.90" width="7.46" height="13.80" fill="#8c6a0a" stroke="#b89030" stroke-width="0.7"/><rect x="1348.68" y="491.90" width="7.46" height="13.80" fill="#8c6a0a" stroke="#b89030" stroke-width="0.7"/><rect x="1357.44" y="491.90" width="7.46" height="13.80" fill="#8c6a0a" stroke="#b89030" stroke-width="0.7"/><rect x="1366.21" y="491.90" width="7.46" height="13.80" fill="#8c6a0a" stroke="#b89030" stroke-width="0.7"/><rect x="1374.97" y="491.90" width="7.46" height="13.80" fill="#8c6a0a" stroke="#b89030" stroke-width="0.7"/><rect x="1383.73" y="491.90" width="7.46" height="13.80" fill="#8c6a0a" stroke="#b89030" stroke-width="0.7"/><rect x="1392.50" y="491.90" width="7.46" height="13.80" fill="#8c6a0a" stroke="#b89030" stroke-width="0.7"/><rect x="1401.26" y="491.90" width="7.46" height="13.80" fill="#8c6a0a" stroke="#b89030" stroke-width="0.7"/><rect x="1410.03" y="491.90" width="7.46" height="13.80" fill="#8c6a0a" stroke="#b89030" stroke-width="0.7"/><rect x="1418.79" y="491.90" width="7.46" height="13.80" fill="#8c6a0a" stroke="#b89030" stroke-width="0.7"/><rect x="1427.55" y="491.90" width="7.46" height="13.80" fill="#8c6a0a" stroke="#b89030" stroke-width="0.7"/><rect x="1436.32" y="491.90" width="7.46" height="13.80" fill="#8c6a0a" stroke="#b89030" stroke-width="0.7"/><rect x="411.39" y="509.60" width="139.22" height="13.80" rx="0.5" fill="url(#p24)" stroke="#8a6a0a" stroke-width="1" /><rect x="643.58" y="509.60" width="139.22" height="13.80" rx="0.5" fill="url(#p25)" stroke="#8a6a0a" stroke-width="1" /><rect x="805.40" y="509.60" width="75.90" height="13.80" rx="0.5" fill="url(#p26)" stroke="#8a6a0a" stroke-width="1" /><rect x="889.84" y="509.60" width="111.08" height="13.80" rx="0.5" fill="url(#p27)" stroke="#8a6a0a" stroke-width="1" /><rect x="1037.59" y="509.60" width="139.22" height="13.80" rx="0.5" fill="url(#p28)" stroke="#8a6a0a" stroke-width="1" /><rect x="1241.64" y="509.60" width="54.79" height="13.80" rx="0.5" fill="url(#p29)" stroke="#8a6a0a" stroke-width="1" /><rect x="1304.96" y="509.60" width="47.75" height="13.80" rx="0.5" fill="url(#p30)" stroke="#8a6a0a" stroke-width="1" /><rect x="1361.25" y="509.60" width="82.93" height="13.80" rx="0.5" fill="url(#p31)" stroke="#8a6a0a" stroke-width="1" /><rect x="410.89" y="525.40" width="140.22" height="10.80" fill="url(#p32)" /><rect x="410.89" y="536.20" width="140.22" height="11.10" fill="url(#p33)" /><rect x="643.08" y="525.40" width="140.22" height="10.80" fill="url(#p34)" /><rect x="643.08" y="536.20" width="140.22" height="11.10" fill="url(#p35)" /><rect x="889.34" y="525.40" width="112.08" height="10.80" fill="url(#p36)" /><rect x="889.34" y="536.20" width="112.08" height="11.10" fill="url(#p37)" /><rect x="1065.24" y="525.40" width="83.93" height="10.80" fill="url(#p38)" /><rect x="1065.24" y="536.20" width="83.93" height="11.10" fill="url(#p39)" /><rect x="1304.46" y="525.40" width="48.75" height="10.80" fill="url(#p40)" /><rect x="1304.46" y="536.20" width="48.75" height="11.10" fill="url(#p41)" /><rect x="1360.75" y="525.40" width="83.93" height="10.80" fill="url(#p42)" /><rect x="1360.75" y="536.20" width="83.93" height="11.10" fill="url(#p43)" /><rect x="383.24" y="549.30" width="195.51" height="14.00" rx="0.5" fill="url(#p44)" stroke="#8a6a0a" stroke-width="1" /><rect x="643.58" y="549.30" width="139.22" height="14.00" rx="0.5" fill="url(#p45)" stroke="#8a6a0a" stroke-width="1" /><rect x="833.55" y="549.30" width="47.75" height="14.00" rx="0.5" fill="url(#p46)" stroke="#8a6a0a" stroke-width="1" /><rect x="889.84" y="549.30" width="111.08" height="14.00" rx="0.5" fill="url(#p47)" stroke="#8a6a0a" stroke-width="1" /><rect x="1037.59" y="549.30" width="139.22" height="14.00" rx="0.5" fill="url(#p48)" stroke="#8a6a0a" stroke-width="1" /><rect x="1241.64" y="549.30" width="54.79" height="14.00" rx="0.5" fill="url(#p49)" stroke="#8a6a0a" stroke-width="1" /><rect x="1304.96" y="549.30" width="47.75" height="14.00" rx="0.5" fill="url(#p50)" stroke="#8a6a0a" stroke-width="1" /><rect x="1361.25" y="549.30" width="82.93" height="14.00" rx="0.5" fill="url(#p51)" stroke="#8a6a0a" stroke-width="1" /><rect x="383.74" y="549.80" width="25.64" height="13.00" fill="url(#p52)" /><rect x="552.61" y="549.80" width="25.64" height="13.00" fill="url(#p53)" /><rect x="383.24" y="567.30" width="195.51" height="13.50" rx="0.5" fill="url(#p54)" stroke="#8a6a0a" stroke-width="1" /><rect x="615.43" y="567.30" width="167.36" height="13.50" rx="0.5" fill="url(#p55)" stroke="#8a6a0a" stroke-width="1" /><rect x="889.84" y="567.30" width="111.08" height="13.50" rx="0.5" fill="url(#p56)" stroke="#8a6a0a" stroke-width="1" /><rect x="1065.74" y="567.30" width="82.93" height="13.50" rx="0.5" fill="url(#p57)" stroke="#8a6a0a" stroke-width="1" /><rect x="1241.64" y="567.30" width="54.79" height="13.50" rx="0.5" fill="url(#p58)" stroke="#8a6a0a" stroke-width="1" /><rect x="1304.96" y="567.30" width="47.75" height="13.50" rx="0.5" fill="url(#p59)" stroke="#8a6a0a" stroke-width="1" /><rect x="1361.25" y="567.30" width="82.93" height="13.50" rx="0.5" fill="url(#p60)" stroke="#8a6a0a" stroke-width="1" /><rect x="383.74" y="567.80" width="25.64" height="12.50" fill="url(#p61)" /><rect x="552.61" y="567.80" width="25.64" height="12.50" fill="url(#p62)" /><rect x="615.93" y="567.80" width="25.64" height="12.50" fill="url(#p63)" /><rect x="383.10" y="584.80" width="2.60" height="13.60" rx="1.2" fill="#b4c2ce" stroke="#7d8c9a" stroke-width="0.8" /><rect x="384.20" y="586.10" width="1.20" height="11.00" fill="#3a4a5e" /><rect x="410.90" y="584.80" width="5.60" height="13.60" rx="1.2" fill="#b4c2ce" stroke="#7d8c9a" stroke-width="0.8" /><rect x="412.00" y="586.10" width="3.40" height="11.00" fill="#3a4a5e" /><rect x="495.80" y="584.80" width="5.50" height="13.60" rx="1.2" fill="#b4c2ce" stroke="#7d8c9a" stroke-width="0.8" /><rect x="496.90" y="586.10" width="3.30" height="11.00" fill="#3a4a5e" /><rect x="523.90" y="584.80" width="5.60" height="13.60" rx="1.2" fill="#b4c2ce" stroke="#7d8c9a" stroke-width="0.8" /><rect x="525.00" y="586.10" width="3.40" height="11.00" fill="#3a4a5e" /><rect x="643.10" y="584.80" width="6.20" height="13.60" rx="1.2" fill="#b4c2ce" stroke="#7d8c9a" stroke-width="0.8" /><rect x="644.20" y="586.10" width="4.00" height="11.00" fill="#3a4a5e" /><rect x="727.20" y="584.80" width="6.20" height="13.60" rx="1.2" fill="#b4c2ce" stroke="#7d8c9a" stroke-width="0.8" /><rect x="728.30" y="586.10" width="4.00" height="11.00" fill="#3a4a5e" /><rect x="888.80" y="584.80" width="4.40" height="13.60" rx="1.2" fill="#b4c2ce" stroke="#7d8c9a" stroke-width="0.8" /><rect x="889.90" y="586.10" width="2.20" height="11.00" fill="#3a4a5e" /><rect x="944.80" y="584.80" width="4.40" height="13.60" rx="1.2" fill="#b4c2ce" stroke="#7d8c9a" stroke-width="0.8" /><rect x="945.90" y="586.10" width="2.20" height="11.00" fill="#3a4a5e" /><rect x="972.90" y="584.80" width="4.40" height="13.60" rx="1.2" fill="#b4c2ce" stroke="#7d8c9a" stroke-width="0.8" /><rect x="974.00" y="586.10" width="2.20" height="11.00" fill="#3a4a5e" /><rect x="1065.70" y="584.80" width="3.70" height="13.60" rx="1.2" fill="#b4c2ce" stroke="#7d8c9a" stroke-width="0.8" /><rect x="1066.80" y="586.10" width="1.50" height="11.00" fill="#3a4a5e" /><rect x="1093.50" y="584.80" width="3.70" height="13.60" rx="1.2" fill="#b4c2ce" stroke="#7d8c9a" stroke-width="0.8" /><rect x="1094.60" y="586.10" width="1.50" height="11.00" fill="#3a4a5e" /><rect x="1149.80" y="584.80" width="3.30" height="13.60" rx="1.2" fill="#b4c2ce" stroke="#7d8c9a" stroke-width="0.8" /><rect x="1150.90" y="586.10" width="1.20" height="11.00" fill="#3a4a5e" /><rect x="1184.80" y="584.80" width="3.40" height="13.60" rx="1.2" fill="#b4c2ce" stroke="#7d8c9a" stroke-width="0.8" /><rect x="1185.90" y="586.10" width="1.20" height="11.00" fill="#3a4a5e" /><rect x="1240.80" y="584.80" width="3.30" height="13.60" rx="1.2" fill="#b4c2ce" stroke="#7d8c9a" stroke-width="0.8" /><rect x="1241.90" y="586.10" width="1.20" height="11.00" fill="#3a4a5e" /><rect x="1290.30" y="584.80" width="2.70" height="13.60" rx="1.2" fill="#b4c2ce" stroke="#7d8c9a" stroke-width="0.8" /><rect x="1291.40" y="586.10" width="1.20" height="11.00" fill="#3a4a5e" /><rect x="1294.00" y="584.80" width="2.70" height="13.60" rx="1.2" fill="#b4c2ce" stroke="#7d8c9a" stroke-width="0.8" /><rect x="1295.10" y="586.10" width="1.20" height="11.00" fill="#3a4a5e" /><rect x="1297.70" y="584.80" width="2.80" height="13.60" rx="1.2" fill="#b4c2ce" stroke="#7d8c9a" stroke-width="0.8" /><rect x="1298.80" y="586.10" width="1.20" height="11.00" fill="#3a4a5e" /><rect x="1304.70" y="584.80" width="3.30" height="13.60" rx="1.2" fill="#b4c2ce" stroke="#7d8c9a" stroke-width="0.8" /><rect x="1305.80" y="586.10" width="1.20" height="11.00" fill="#3a4a5e" /><rect x="1360.70" y="584.80" width="3.30" height="13.60" rx="1.2" fill="#b4c2ce" stroke="#7d8c9a" stroke-width="0.8" /><rect x="1361.80" y="586.10" width="1.20" height="11.00" fill="#3a4a5e" /><rect x="1402.50" y="584.80" width="4.00" height="13.60" rx="1.2" fill="#b4c2ce" stroke="#7d8c9a" stroke-width="0.8" /><rect x="1403.60" y="586.10" width="1.80" height="11.00" fill="#3a4a5e" /><rect x="1444.80" y="584.80" width="4.10" height="13.60" rx="1.2" fill="#b4c2ce" stroke="#7d8c9a" stroke-width="0.8" /><rect x="1445.90" y="586.10" width="1.90" height="11.00" fill="#3a4a5e" /><rect x="411.39" y="601.80" width="139.22" height="8.60" rx="0.5" fill="url(#p64)" stroke="#b02020" stroke-width="1" /><rect x="643.58" y="601.80" width="139.22" height="8.60" rx="0.5" fill="url(#p65)" stroke="#b02020" stroke-width="1" /><rect x="889.84" y="601.80" width="111.08" height="8.60" rx="0.5" fill="url(#p66)" stroke="#b02020" stroke-width="1" /><rect x="1065.74" y="601.80" width="82.93" height="8.60" rx="0.5" fill="url(#p67)" stroke="#b02020" stroke-width="1" /><rect x="1304.96" y="601.80" width="47.75" height="8.60" rx="0.5" fill="url(#p68)" stroke="#b02020" stroke-width="1" /><rect x="1361.25" y="601.80" width="82.93" height="8.60" rx="0.5" fill="url(#p69)" stroke="#b02020" stroke-width="1" /><rect x="411.39" y="613.80" width="139.22" height="13.70" rx="0.5" fill="url(#p70)" stroke="#a81a1a" stroke-width="1" /><rect x="643.58" y="613.80" width="139.22" height="13.70" rx="0.5" fill="url(#p71)" stroke="#a81a1a" stroke-width="1" /><rect x="889.84" y="613.80" width="111.08" height="13.70" rx="0.5" fill="url(#p72)" stroke="#a81a1a" stroke-width="1" /><rect x="1065.74" y="613.80" width="82.93" height="13.70" rx="0.5" fill="url(#p73)" stroke="#a81a1a" stroke-width="1" /><rect x="1304.96" y="613.80" width="47.75" height="13.70" rx="0.5" fill="url(#p74)" stroke="#a81a1a" stroke-width="1" /><rect x="1361.25" y="613.80" width="82.93" height="13.70" rx="0.5" fill="url(#p75)" stroke="#a81a1a" stroke-width="1" /><rect x="411.39" y="631.50" width="139.22" height="13.50" rx="0.5" fill="url(#p76)" stroke="#a81a1a" stroke-width="1" /><rect x="643.58" y="631.50" width="139.22" height="13.50" rx="0.5" fill="url(#p77)" stroke="#a81a1a" stroke-width="1" /><rect x="889.84" y="631.50" width="111.08" height="13.50" rx="0.5" fill="url(#p78)" stroke="#a81a1a" stroke-width="1" /><rect x="1065.74" y="631.50" width="82.93" height="13.50" rx="0.5" fill="url(#p79)" stroke="#a81a1a" stroke-width="1" /><rect x="1304.96" y="631.50" width="47.75" height="13.50" rx="0.5" fill="url(#p80)" stroke="#a81a1a" stroke-width="1" /><rect x="1361.25" y="631.50" width="82.93" height="13.50" rx="0.5" fill="url(#p81)" stroke="#a81a1a" stroke-width="1" /><rect x="411.39" y="649.00" width="139.22" height="13.70" rx="0.5" fill="url(#p82)" stroke="#a81a1a" stroke-width="1" /><rect x="643.58" y="649.00" width="139.22" height="13.70" rx="0.5" fill="url(#p83)" stroke="#a81a1a" stroke-width="1" /><rect x="889.84" y="649.00" width="111.08" height="13.70" rx="0.5" fill="url(#p84)" stroke="#a81a1a" stroke-width="1" /><rect x="1065.74" y="649.00" width="82.93" height="13.70" rx="0.5" fill="url(#p85)" stroke="#a81a1a" stroke-width="1" /><rect x="1304.96" y="649.00" width="47.75" height="13.70" rx="0.5" fill="url(#p86)" stroke="#a81a1a" stroke-width="1" /><rect x="1361.25" y="649.00" width="82.93" height="13.70" rx="0.5" fill="url(#p87)" stroke="#a81a1a" stroke-width="1" /><rect x="383.60" y="666.70" width="8.30" height="13.80" rx="1.5" fill="#d0d0d0" stroke="#909090" stroke-width="1" /><path d="M387.8 669.2 V678.0" stroke="#999" stroke-width="0.7"/><rect x="398.00" y="666.70" width="8.30" height="13.80" rx="1.5" fill="#d0d0d0" stroke="#909090" stroke-width="1" /><path d="M402.1 669.2 V678.0" stroke="#999" stroke-width="0.7"/><rect x="552.20" y="666.70" width="8.60" height="13.80" rx="1.5" fill="#d0d0d0" stroke="#909090" stroke-width="1" /><path d="M556.5 669.2 V678.0" stroke="#999" stroke-width="0.7"/><rect x="566.00" y="666.70" width="9.30" height="13.80" rx="1.5" fill="#d0d0d0" stroke="#909090" stroke-width="1" /><path d="M570.6 669.2 V678.0" stroke="#999" stroke-width="0.7"/><rect x="882.80" y="666.70" width="6.10" height="13.80" rx="1.5" fill="#d0d0d0" stroke="#909090" stroke-width="1" /><path d="M885.8 669.2 V678.0" stroke="#999" stroke-width="0.7"/><rect x="1059.00" y="684.50" width="5.00" height="13.50" rx="1.5" fill="#d0d0d0" stroke="#909090" stroke-width="1" /><rect x="1115.00" y="684.50" width="4.90" height="13.50" rx="1.5" fill="#d0d0d0" stroke="#909090" stroke-width="1" /><rect x="1143.00" y="684.50" width="4.70" height="13.50" rx="1.5" fill="#d0d0d0" stroke="#909090" stroke-width="1" /><rect x="1171.60" y="684.50" width="4.90" height="13.50" rx="1.5" fill="#d0d0d0" stroke="#909090" stroke-width="1" /><rect x="1234.00" y="684.50" width="5.80" height="13.50" rx="1.5" fill="#d0d0d0" stroke="#909090" stroke-width="1" /><rect x="1297.30" y="684.50" width="6.40" height="13.50" rx="1.5" fill="#d0d0d0" stroke="#909090" stroke-width="1" /><rect x="1353.20" y="684.50" width="6.50" height="13.50" rx="1.5" fill="#d0d0d0" stroke="#909090" stroke-width="1" /><rect x="1438.10" y="684.50" width="6.80" height="13.50" rx="1.5" fill="#d0d0d0" stroke="#909090" stroke-width="1" /><rect x="411.40" y="702.00" width="39.30" height="13.70" rx="0.5" fill="#fafafa" stroke="#9c9c9c" stroke-width="1" /><path d="M412.4 703.0 L426.2 706.2 L449.2 706.5 L426.2 707.1 L412.4 708.4 Z" fill="#b4b4b4" stroke="#8a8a8a" stroke-width="0.5"/><path d="M412.4 709.4 L426.2 710.6 L449.2 711.2 L426.2 711.5 L412.4 714.7 Z" fill="#b4b4b4" stroke="#8a8a8a" stroke-width="0.5"/><rect x="643.60" y="702.00" width="41.80" height="13.70" rx="0.5" fill="#fafafa" stroke="#9c9c9c" stroke-width="1" /><path d="M644.6 703.0 L659.4 706.2 L683.9 706.5 L659.4 707.1 L644.6 708.4 Z" fill="#b4b4b4" stroke="#8a8a8a" stroke-width="0.5"/><path d="M644.6 709.4 L659.4 710.6 L683.9 711.2 L659.4 711.5 L644.6 714.7 Z" fill="#b4b4b4" stroke="#8a8a8a" stroke-width="0.5"/><rect x="1066.20" y="702.00" width="37.50" height="13.70" rx="0.5" fill="#fafafa" stroke="#9c9c9c" stroke-width="1" /><path d="M1067.2 703.0 L1080.3 706.2 L1102.2 706.5 L1080.3 707.1 L1067.2 708.4 Z" fill="#b4b4b4" stroke="#8a8a8a" stroke-width="0.5"/><path d="M1067.2 709.4 L1080.3 710.6 L1102.2 711.2 L1080.3 711.5 L1067.2 714.7 Z" fill="#b4b4b4" stroke="#8a8a8a" stroke-width="0.5"/><rect x="1150.30" y="702.00" width="27.00" height="13.70" rx="0.5" fill="#fafafa" stroke="#9c9c9c" stroke-width="1" /><path d="M1151.3 703.0 L1160.4 706.2 L1175.8 706.5 L1160.4 707.1 L1151.3 708.4 Z" fill="#b4b4b4" stroke="#8a8a8a" stroke-width="0.5"/><path d="M1151.3 709.4 L1160.4 710.6 L1175.8 711.2 L1160.4 711.5 L1151.3 714.7 Z" fill="#b4b4b4" stroke="#8a8a8a" stroke-width="0.5"/><rect x="1241.30" y="702.00" width="40.70" height="13.70" rx="0.5" fill="#fafafa" stroke="#9c9c9c" stroke-width="1" /><path d="M1242.3 703.0 L1256.6 706.2 L1280.5 706.5 L1256.6 707.1 L1242.3 708.4 Z" fill="#b4b4b4" stroke="#8a8a8a" stroke-width="0.5"/><path d="M1242.3 709.4 L1256.6 710.6 L1280.5 711.2 L1256.6 711.5 L1242.3 714.7 Z" fill="#b4b4b4" stroke="#8a8a8a" stroke-width="0.5"/><rect x="1305.20" y="702.00" width="39.70" height="13.70" rx="0.5" fill="#fafafa" stroke="#9c9c9c" stroke-width="1" /><path d="M1306.2 703.0 L1320.2 706.2 L1343.4 706.5 L1320.2 707.1 L1306.2 708.4 Z" fill="#b4b4b4" stroke="#8a8a8a" stroke-width="0.5"/><path d="M1306.2 709.4 L1320.2 710.6 L1343.4 711.2 L1320.2 711.5 L1306.2 714.7 Z" fill="#b4b4b4" stroke="#8a8a8a" stroke-width="0.5"/><rect x="1361.20" y="702.00" width="40.00" height="13.70" rx="0.5" fill="#fafafa" stroke="#9c9c9c" stroke-width="1" /><path d="M1362.2 703.0 L1376.3 706.2 L1399.7 706.5 L1376.3 707.1 L1362.2 708.4 Z" fill="#b4b4b4" stroke="#8a8a8a" stroke-width="0.5"/><path d="M1362.2 709.4 L1376.3 710.6 L1399.7 711.2 L1376.3 711.5 L1362.2 714.7 Z" fill="#b4b4b4" stroke="#8a8a8a" stroke-width="0.5"/><rect x="1446.40" y="702.00" width="39.00" height="13.70" rx="0.5" fill="#fafafa" stroke="#9c9c9c" stroke-width="1" /><path d="M1447.4 703.0 L1461.1 706.2 L1483.9 706.5 L1461.1 707.1 L1447.4 708.4 Z" fill="#b4b4b4" stroke="#8a8a8a" stroke-width="0.5"/><path d="M1447.4 709.4 L1461.1 710.6 L1483.9 711.2 L1461.1 711.5 L1447.4 714.7 Z" fill="#b4b4b4" stroke="#8a8a8a" stroke-width="0.5"/><rect x="876.00" y="702.00" width="12.90" height="13.70" rx="1.5" fill="#d0d0d0" stroke="#909090" stroke-width="1" /><rect x="1031.90" y="702.00" width="12.20" height="13.70" rx="1.5" fill="#d0d0d0" stroke="#909090" stroke-width="1" /><rect x="1234.00" y="702.00" width="5.80" height="13.70" rx="1.5" fill="#d0d0d0" stroke="#909090" stroke-width="1" /><rect x="1292.60" y="702.00" width="3.20" height="13.70" rx="1.5" fill="#d0d0d0" stroke="#909090" stroke-width="1" /><rect x="409.89" y="132.00" width="1.00" height="649.10" fill="#7f878e" opacity="0.2"/><rect x="466.18" y="132.00" width="1.00" height="649.10" fill="#7f878e" opacity="0.2"/><rect x="522.46" y="132.00" width="1.00" height="649.10" fill="#7f878e" opacity="0.2"/><rect x="578.75" y="132.00" width="1.00" height="649.10" fill="#7f878e" opacity="0.2"/><rect x="635.04" y="132.00" width="1.00" height="649.10" fill="#7f878e" opacity="0.2"/><rect x="691.33" y="132.00" width="1.00" height="649.10" fill="#7f878e" opacity="0.2"/><rect x="747.62" y="132.00" width="1.00" height="649.10" fill="#7f878e" opacity="0.2"/><rect x="803.90" y="132.00" width="1.00" height="649.10" fill="#7f878e" opacity="0.2"/><rect x="860.19" y="132.00" width="1.00" height="649.10" fill="#7f878e" opacity="0.2"/><rect x="916.48" y="132.00" width="1.00" height="649.10" fill="#7f878e" opacity="0.2"/><rect x="972.77" y="132.00" width="1.00" height="649.10" fill="#7f878e" opacity="0.2"/><rect x="1029.06" y="132.00" width="1.00" height="649.10" fill="#7f878e" opacity="0.2"/><rect x="1085.34" y="132.00" width="1.00" height="649.10" fill="#7f878e" opacity="0.2"/><rect x="1141.63" y="132.00" width="1.00" height="649.10" fill="#7f878e" opacity="0.2"/><rect x="1197.92" y="132.00" width="1.00" height="649.10" fill="#7f878e" opacity="0.2"/><rect x="1254.21" y="132.00" width="1.00" height="649.10" fill="#7f878e" opacity="0.2"/><rect x="1310.50" y="132.00" width="1.00" height="649.10" fill="#7f878e" opacity="0.2"/><rect x="1366.78" y="132.00" width="1.00" height="649.10" fill="#7f878e" opacity="0.2"/><rect x="1423.07" y="132.00" width="1.00" height="649.10" fill="#7f878e" opacity="0.2"/><rect x="1479.36" y="132.00" width="1.00" height="649.10" fill="#7f878e" opacity="0.2"/></svg>
<div style="left:414.19px;top:121.40px;font-size:10.2px;line-height:1;color:#ffffff;font-weight:bold;white-space:pre;transform:scaleX(0.93);transform-origin:0 0">9</div>
<div style="left:470.48px;top:121.40px;font-size:10.2px;line-height:1;color:#ffffff;font-weight:bold;white-space:pre;transform:scaleX(0.93);transform-origin:0 0">17</div>
<div style="left:526.76px;top:121.40px;font-size:10.2px;line-height:1;color:#ffffff;font-weight:bold;white-space:pre;transform:scaleX(0.93);transform-origin:0 0">25</div>
<div style="left:583.05px;top:121.40px;font-size:10.2px;line-height:1;color:#ffffff;font-weight:bold;white-space:pre;transform:scaleX(0.93);transform-origin:0 0">33</div>
<div style="left:639.34px;top:121.40px;font-size:10.2px;line-height:1;color:#ffffff;font-weight:bold;white-space:pre;transform:scaleX(0.93);transform-origin:0 0">41</div>
<div style="left:695.63px;top:121.40px;font-size:10.2px;line-height:1;color:#ffffff;font-weight:bold;white-space:pre;transform:scaleX(0.93);transform-origin:0 0">49</div>
<div style="left:751.92px;top:121.40px;font-size:10.2px;line-height:1;color:#ffffff;font-weight:bold;white-space:pre;transform:scaleX(0.93);transform-origin:0 0">57</div>
<div style="left:808.20px;top:121.40px;font-size:10.2px;line-height:1;color:#ffffff;font-weight:bold;white-space:pre;transform:scaleX(0.93);transform-origin:0 0">65</div>
<div style="left:864.49px;top:121.40px;font-size:10.2px;line-height:1;color:#ffffff;font-weight:bold;white-space:pre;transform:scaleX(0.93);transform-origin:0 0">73</div>
<div style="left:920.78px;top:121.40px;font-size:10.2px;line-height:1;color:#ffffff;font-weight:bold;white-space:pre;transform:scaleX(0.93);transform-origin:0 0">81</div>
<div style="left:977.07px;top:121.40px;font-size:10.2px;line-height:1;color:#ffffff;font-weight:bold;white-space:pre;transform:scaleX(0.93);transform-origin:0 0">89</div>
<div style="left:1033.36px;top:121.40px;font-size:10.2px;line-height:1;color:#ffffff;font-weight:bold;white-space:pre;transform:scaleX(0.93);transform-origin:0 0">97</div>
<div style="left:1089.64px;top:121.40px;font-size:10.2px;line-height:1;color:#ffffff;font-weight:bold;white-space:pre;transform:scaleX(0.93);transform-origin:0 0">105</div>
<div style="left:1145.93px;top:121.40px;font-size:10.2px;line-height:1;color:#ffffff;font-weight:bold;white-space:pre;transform:scaleX(0.93);transform-origin:0 0">113</div>
<div style="left:1202.22px;top:121.40px;font-size:10.2px;line-height:1;color:#ffffff;font-weight:bold;white-space:pre;transform:scaleX(0.93);transform-origin:0 0">121</div>
<div style="left:1258.51px;top:121.40px;font-size:10.2px;line-height:1;color:#ffffff;font-weight:bold;white-space:pre;transform:scaleX(0.93);transform-origin:0 0">129</div>
<div style="left:1314.80px;top:121.40px;font-size:10.2px;line-height:1;color:#ffffff;font-weight:bold;white-space:pre;transform:scaleX(0.93);transform-origin:0 0">137</div>
<div style="left:1371.08px;top:121.40px;font-size:10.2px;line-height:1;color:#ffffff;font-weight:bold;white-space:pre;transform:scaleX(0.93);transform-origin:0 0">145</div>
<div style="left:1427.37px;top:121.40px;font-size:10.2px;line-height:1;color:#ffffff;font-weight:bold;white-space:pre;transform:scaleX(0.93);transform-origin:0 0">153</div>
<div style="left:1483.66px;top:121.40px;font-size:10.2px;line-height:1;color:#0d1a24;font-weight:bold;white-space:pre;transform:scaleX(0.93);transform-origin:0 0">161</div>
<div style="left:358.50px;top:121.40px;font-size:10.2px;line-height:1;color:#0d1a24;font-weight:bold;white-space:pre;">1</div>
<div style="left:347.70px;top:781.10px;width:1170.70px;height:12.30px;background:#1d2a34"></div>
<div style="left:347.70px;top:781.10px;width:1084.00px;height:8.80px;background:#3f4c56;border-radius:0 0 3px 0"></div>
<div style="left:362.20px;top:783.00px;width:290.00px;height:6.00px;background:#f2f4f5;border-radius:3px"></div>
<svg style="position:absolute;left:350.50px;top:781.50px;" width="8.00" height="8.00" viewBox="0 0 8 8"><path d="M5 1 L2 4 L5 7" stroke="#e0e0e0" stroke-width="1.4" fill="none"/></svg>
<svg style="position:absolute;left:1424.00px;top:781.50px;" width="8.00" height="8.00" viewBox="0 0 8 8"><path d="M3 1 L6 4 L3 7" stroke="#e0e0e0" stroke-width="1.4" fill="none"/></svg>
<svg style="position:absolute;left:1437.00px;top:785.00px;" width="8.00" height="6.00" viewBox="0 0 8 6"><path d="M0.5 0.5 H7.5 L4 5 Z" fill="#c8d0d6"/></svg>
<div style="left:1450.00px;top:787.00px;width:5.00px;height:1.00px;background:#c8d0d6"></div>
<div style="left:1460.00px;top:787.00px;width:35.00px;height:1.00px;background:#8a96a0"></div>
<div style="left:1466px;top:785px;width:5px;height:5px;border-radius:50%;background:#d0d8de"></div>
<svg style="position:absolute;left:1502.00px;top:783.50px;" width="8.00" height="8.00" viewBox="0 0 8 8"><path d="M4 1 V7 M1 4 H7" stroke="#c8d0d6" stroke-width="1"/></svg>
<div style="left:1518.40px;top:112.00px;width:12.60px;height:680.00px;background:#1d2a34"></div>
<div style="left:1519.50px;top:113.00px;width:10.00px;height:18.00px;background:#4b5862;border-radius:3px"></div>
<svg style="position:absolute;left:1521.00px;top:117.00px;" width="7.00" height="7.00" viewBox="0 0 7 7"><path d="M0.5 0.5 H6.5 L3.5 6 Z" fill="#eef1f3"/></svg>
<svg style="position:absolute;left:1520.00px;top:137.00px;" width="9.00" height="9.00" viewBox="0 0 9 9"><path d="M1 8 L8 1" stroke="#8a96a0" stroke-width="1.2"/></svg>
<div style="left:1523.80px;top:149.00px;width:1.00px;height:24.00px;background:#6a7680"></div>
<div style="left:1521.3px;top:173px;width:5px;height:5px;border-radius:50%;background:#8a96a0"></div>
<div style="left:1519.30px;top:193.00px;width:10.00px;height:513.00px;background:#3a4650;border-radius:2px"></div>
<svg style="position:absolute;left:1520.30px;top:197.00px;" width="8.00" height="6.00" viewBox="0 0 8 6"><path d="M1 5 L4 2 L7 5" stroke="#e0e0e0" stroke-width="1.2" fill="none"/></svg>
<div style="left:1520.30px;top:238.50px;width:8.00px;height:411.00px;background:#f0f2f4;border-radius:4px"></div>
<svg style="position:absolute;left:1520.30px;top:696.00px;" width="8.00" height="6.00" viewBox="0 0 8 6"><path d="M1 1 L4 4 L7 1" stroke="#e0e0e0" stroke-width="1.2" fill="none"/></svg>
<svg style="position:absolute;left:1520.30px;top:710.00px;" width="8.00" height="6.00" viewBox="0 0 8 6"><path d="M0.5 0.5 H7.5 L4 5 Z" fill="#c8d0d6"/></svg>
<div style="left:1521.50px;top:721.50px;width:5.00px;height:1.00px;background:#c8d0d6"></div>
<div style="left:1523.80px;top:727.00px;width:1.00px;height:51.00px;background:#6a7680"></div>
<div style="left:1521.3px;top:731px;width:5px;height:5px;border-radius:50%;background:#b8c2ca"></div>
<svg style="position:absolute;left:1520.30px;top:773.00px;" width="8.00" height="8.00" viewBox="0 0 8 8"><path d="M4 1 V7 M1 4 H7" stroke="#c8d0d6" stroke-width="1"/></svg>
<div style="left:1.30px;top:804.50px;width:19.50px;height:19.80px;background:#56636c;border:1px solid #6a767e;border-radius:3px"></div>
<svg style="position:absolute;left:3.50px;top:807.00px;" width="15.00" height="15.00" viewBox="0 0 15 15"><path d="M3 3 A6 6 0 0 0 3 12 M12 3 A6 6 0 0 1 12 12" stroke="#eee" stroke-width="1.3" fill="none"/><circle cx="7.5" cy="7.5" r="3.6" fill="#eee"/><path d="M7.5 5 V7.5 H9.5" stroke="#56636c" stroke-width="1"/></svg>
<div style="left:25.40px;top:804.50px;width:34.50px;height:19.80px;background:#141c23;border:1px solid #3a464f;border-radius:3px"></div>
<div style="left:31px;top:809.5px;width:10px;height:10px;border-radius:50%;background:#eef1f3"></div>
<svg style="position:absolute;left:46.50px;top:811.50px;" width="9.00" height="8.00" viewBox="0 0 9 8"><path d="M0.5 1 H8.5 L4.5 7.5 Z" fill="#eef1f3"/></svg>
<div style="left:62.20px;top:809.50px;width:1.60px;height:2.20px;background:#c8d0d6"></div>
<div style="left:62.20px;top:813.50px;width:1.60px;height:2.20px;background:#c8d0d6"></div>
<div style="left:62.20px;top:817.50px;width:1.60px;height:2.20px;background:#c8d0d6"></div>
<div style="left:69.00px;top:804.50px;width:35.20px;height:19.80px;background:#141c23;border:1px solid #3a464f;border-radius:3px"></div>
<svg style="position:absolute;left:72.00px;top:807.50px;" width="16.00" height="14.00" viewBox="0 0 16 14"><path d="M1 7 H3 L4 5 L5 9 L6 3 L7 12 L8 1 L9 13 L10 4 L11 10 L12 6 L13 8 L15 7" stroke="#eee" stroke-width="1.2" fill="none"/></svg>
<svg style="position:absolute;left:91.00px;top:811.50px;" width="9.00" height="8.00" viewBox="0 0 9 8"><path d="M0.5 1 H8.5 L4.5 7.5 Z" fill="#eef1f3"/></svg>
<div style="left:106.30px;top:809.50px;width:1.60px;height:2.20px;background:#c8d0d6"></div>
<div style="left:106.30px;top:813.50px;width:1.60px;height:2.20px;background:#c8d0d6"></div>
<div style="left:106.30px;top:817.50px;width:1.60px;height:2.20px;background:#c8d0d6"></div>
<div style="left:113.00px;top:804.50px;width:35.20px;height:19.80px;background:#141c23;border:1px solid #3a464f;border-radius:3px"></div>
<svg style="position:absolute;left:117.00px;top:807.50px;" width="14.00" height="14.00" viewBox="0 0 14 14"><circle cx="7" cy="7" r="6" fill="#eee"/><circle cx="7" cy="7" r="4" fill="none" stroke="#141c23" stroke-width="0.8" stroke-dasharray="1.5 1.5"/></svg>
<svg style="position:absolute;left:135.50px;top:811.50px;" width="9.00" height="8.00" viewBox="0 0 9 8"><path d="M0.5 1 H8.5 L4.5 7.5 Z" fill="#eef1f3"/></svg>
<div style="left:150.30px;top:809.50px;width:1.60px;height:2.20px;background:#c8d0d6"></div>
<div style="left:150.30px;top:813.50px;width:1.60px;height:2.20px;background:#c8d0d6"></div>
<div style="left:150.30px;top:817.50px;width:1.60px;height:2.20px;background:#c8d0d6"></div>
<div style="left:157.20px;top:804.50px;width:30.30px;height:19.80px;background:#4b5862;border:1px solid #5d6a73;border-radius:3px"></div>
<div style="left:162.50px;top:809.50px;font-size:10.5px;line-height:1;color:#e6ebef;white-space:pre;letter-spacing:-0.5px">AQ</div>
<div style="left:360.10px;top:804.50px;width:119.50px;height:19.80px;background:#141c23;border:1px solid #3a464f;border-radius:3px"></div>
<div style="left:360.10px;top:804.50px;width:20.00px;height:19.80px;background:#56636c;border-radius:3px 0 0 3px;border:1px solid #6a767e"></div>
<svg style="position:absolute;left:364.00px;top:808.50px;" width="12.00" height="12.00" viewBox="0 0 12 12"><path d="M2 1 V11 M2 1 H10 L2 9 Z" fill="#eee" stroke="#eee" stroke-width="1"/></svg>
<div style="left:411.30px;top:808.10px;font-size:12px;line-height:1;color:#e6ebef;white-space:pre;">4.</div>
<div style="left:427.70px;top:808.10px;font-size:12px;line-height:1;color:#e6ebef;white-space:pre;">4.</div>
<div style="left:444.80px;top:808.10px;font-size:12px;line-height:1;color:#e6ebef;white-space:pre;">2.</div>
<div style="left:467.50px;top:808.10px;font-size:12px;line-height:1;color:#e6ebef;white-space:pre;">0</div>
<div style="left:488.10px;top:804.50px;width:119.40px;height:19.80px;background:#141c23;border:1px solid #3a464f;border-radius:3px"></div>
<div style="left:488.10px;top:804.50px;width:20.00px;height:19.80px;background:#56636c;border-radius:3px 0 0 3px;border:1px solid #6a767e"></div>
<svg style="position:absolute;left:492.00px;top:808.50px;" width="12.00" height="12.00" viewBox="0 0 12 12"><path d="M10 1 V11 M10 1 H2 L10 9 Z" fill="#eee" stroke="#eee" stroke-width="1"/></svg>
<div style="left:527.70px;top:808.10px;font-size:12px;line-height:1;color:#e6ebef;white-space:pre;">158.</div>
<div style="left:556.60px;top:808.10px;font-size:12px;line-height:1;color:#e6ebef;white-space:pre;">3.</div>
<div style="left:573.00px;top:808.10px;font-size:12px;line-height:1;color:#e6ebef;white-space:pre;">2.</div>
<div style="left:589.40px;top:808.10px;font-size:12px;line-height:1;color:#e6ebef;white-space:pre;">61</div>
<div style="left:611.90px;top:804.50px;width:60.20px;height:19.80px;background:#4b5862;border:1px solid #5d6a73;border-radius:3px"></div>
<div style="left:611.90px;top:804.50px;width:20.50px;height:19.80px;background:#f2f2f2;border-radius:3px 0 0 3px"></div>
<svg style="position:absolute;left:615.50px;top:807.50px;" width="13.00" height="13.00" viewBox="0 0 13 13"><rect x="2" y="6" width="9" height="7" fill="#111"/><path d="M4 6 V4 A2.5 2.5 0 0 1 9 4 V6" stroke="#111" stroke-width="1.5" fill="none"/></svg>
<svg style="position:absolute;left:636.00px;top:807.50px;" width="12.00" height="13.00" viewBox="0 0 12 13"><path d="M1 2 H11 L6 8 Z" fill="#eee"/><circle cx="6" cy="11" r="1.3" fill="#eee"/></svg>
<svg style="position:absolute;left:656.00px;top:807.50px;" width="12.00" height="13.00" viewBox="0 0 12 13"><path d="M1 12 H11 L6 6 Z" fill="#eee"/><circle cx="6" cy="3" r="1.3" fill="#eee"/></svg>
<div style="left:674.30px;top:809.50px;width:1.60px;height:2.20px;background:#c8d0d6"></div>
<div style="left:674.30px;top:813.50px;width:1.60px;height:2.20px;background:#c8d0d6"></div>
<div style="left:674.30px;top:817.50px;width:1.60px;height:2.20px;background:#c8d0d6"></div>
<div style="left:681.40px;top:804.00px;width:159.40px;height:20.80px;background:#6b7780;border:1px solid #9aa4ac;border-radius:3px"></div>
<div style="left:682.40px;top:805.00px;width:38.60px;height:18.80px;background:#7d66e0"></div>
<div style="left:721.00px;top:805.00px;width:40.00px;height:18.80px;background:#e8ecf0"></div>
<svg style="position:absolute;left:692.00px;top:807.50px;" width="20.00" height="14.00" viewBox="0 0 20 14"><path d="M4 11 H12 A4.5 4.5 0 0 0 12 2.5 H9 M7 8 L3.5 11 L7 13" stroke="#111" stroke-width="1.6" fill="none"/></svg>
<div style="left:735.50px;top:809.00px;width:11.00px;height:11.00px;border:1.8px solid #111"></div>
<svg style="position:absolute;left:775.00px;top:807.50px;" width="14.00" height="14.00" viewBox="0 0 14 14"><path d="M2 1.5 L12.5 7 L2 12.5 Z" stroke="#eee" stroke-width="1.5" fill="none"/></svg>
<div style="left:814.5px;top:808.3px;width:12px;height:12px;border-radius:50%;border:1.6px solid #eee"></div>
<div style="left:843.50px;top:809.50px;width:1.60px;height:2.20px;background:#c8d0d6"></div>
<div style="left:843.50px;top:813.50px;width:1.60px;height:2.20px;background:#c8d0d6"></div>
<div style="left:843.50px;top:817.50px;width:1.60px;height:2.20px;background:#c8d0d6"></div>
<div style="left:850.40px;top:804.50px;width:30.00px;height:19.80px;background:#4b5862;border:1px solid #56636c;border-radius:3px"></div>
<svg style="position:absolute;left:858.00px;top:807.50px;" width="14.00" height="14.00" viewBox="0 0 14 14"><circle cx="7" cy="7" r="5" fill="#7d8a94"/><circle cx="5" cy="7" r="4.5" fill="#4b5862"/></svg>
<div style="left:885.10px;top:804.50px;width:118.90px;height:19.80px;background:#141c23;border:1px solid #3a464f;border-radius:3px"></div>
<div style="left:904.50px;top:805.00px;width:0.80px;height:18.80px;background:#3a464f"></div>
<svg style="position:absolute;left:889.00px;top:807.50px;" width="12.00" height="14.00" viewBox="0 0 12 14"><path d="M8 1 V10" stroke="#eee" stroke-width="1.3"/><ellipse cx="5.5" cy="10.5" rx="3" ry="2.2" fill="#eee"/></svg>
<div style="left:935.60px;top:808.10px;font-size:12px;line-height:1;color:#e6ebef;white-space:pre;">4.</div>
<div style="left:952.90px;top:808.10px;font-size:12px;line-height:1;color:#e6ebef;white-space:pre;">3.</div>
<div style="left:969.30px;top:808.10px;font-size:12px;line-height:1;color:#e6ebef;white-space:pre;">3.</div>
<div style="left:992.10px;top:808.10px;font-size:12px;line-height:1;color:#e6ebef;white-space:pre;">0</div>
<div style="left:1006.80px;top:809.50px;width:1.60px;height:2.20px;background:#c8d0d6"></div>
<div style="left:1006.80px;top:813.50px;width:1.60px;height:2.20px;background:#c8d0d6"></div>
<div style="left:1006.80px;top:817.50px;width:1.60px;height:2.20px;background:#c8d0d6"></div>
<div style="left:1013.70px;top:804.50px;width:125.40px;height:19.80px;background:#141c23;border:1px solid #3a464f;border-radius:3px"></div>
<div style="left:1013.70px;top:804.50px;width:19.40px;height:19.80px;background:#f2f2f2;border-radius:3px 0 0 3px"></div>
<svg style="position:absolute;left:1016.00px;top:807.50px;" width="15.00" height="14.00" viewBox="0 0 15 14"><path d="M4 1 V10" stroke="#111" stroke-width="1.3"/><ellipse cx="2.8" cy="10.5" rx="2.4" ry="2" fill="#111"/><path d="M9 3 L11 1 L13 3 M9 10 L11 12 L13 10 M11 1 V12" stroke="#111" stroke-width="1.3" fill="none"/></svg>
<div style="left:1044.00px;top:809.00px;font-size:10.5px;line-height:1;color:#e6ebef;white-space:pre;letter-spacing:-0.3px">124.000</div>
<svg style="position:absolute;left:1085.00px;top:807.50px;" width="9.00" height="14.00" viewBox="0 0 9 14"><path d="M0.5 6 L4.5 1 L8.5 6 Z M0.5 8 L4.5 13 L8.5 8 Z" fill="#e6ebef"/></svg>
<div style="left:1098.30px;top:805.00px;width:0.80px;height:18.80px;background:#3a464f"></div>
<div style="left:1103.80px;top:809.00px;font-size:10.5px;line-height:1;color:#e6ebef;white-space:pre;">4/4</div>
<div style="left:1141.20px;top:809.50px;width:1.60px;height:2.20px;background:#c8d0d6"></div>
<div style="left:1141.20px;top:813.50px;width:1.60px;height:2.20px;background:#c8d0d6"></div>
<div style="left:1141.20px;top:817.50px;width:1.60px;height:2.20px;background:#c8d0d6"></div>
<div style="left:1308.60px;top:804.50px;width:119.60px;height:19.80px;background:#4b5862;border:1px solid #5d6a73;border-radius:3px"></div>
<div style="left:1348.20px;top:805.00px;width:59.40px;height:18.80px;background:#141c23"></div>
<svg style="position:absolute;left:1312.00px;top:807.50px;" width="16.00" height="14.00" viewBox="0 0 16 14"><path d="M3 13 L6 2 H9 L12 13 Z" fill="#eee"/><path d="M6 9 L13 3" stroke="#4b5862" stroke-width="1.2"/><path d="M7 9 L13 3" stroke="#eee" stroke-width="0.9"/></svg>
<svg style="position:absolute;left:1331.00px;top:807.50px;" width="14.00" height="14.00" viewBox="0 0 14 14"><path d="M2 13 L5 3 M4 13 L7 3 H9 L12 13 Z" stroke="#eee" stroke-width="1.1" fill="#eee"/></svg>
<div style="left:1353.00px;top:808.50px;width:7.00px;height:1.50px;background:#eee"></div>
<div style="left:1366.00px;top:819.00px;width:6.00px;height:1.50px;background:#eee"></div>
<div style="left:1380.00px;top:819.00px;width:6.00px;height:1.50px;background:#eee"></div>
<div style="left:1394.00px;top:819.00px;width:6.00px;height:1.50px;background:#eee"></div>
<svg style="position:absolute;left:1410.00px;top:806.50px;" width="16.00" height="16.00" viewBox="0 0 16 16"><path d="M4.2 10 L12.6 7.4 A4.6 4.6 0 1 0 10.8 12.2" stroke="#eee" stroke-width="1.7" fill="none" stroke-linecap="round"/></svg>
<div style="left:1431.00px;top:809.50px;width:1.60px;height:2.20px;background:#c8d0d6"></div>
<div style="left:1431.00px;top:813.50px;width:1.60px;height:2.20px;background:#c8d0d6"></div>
<div style="left:1431.00px;top:817.50px;width:1.60px;height:2.20px;background:#c8d0d6"></div>
<div style="left:1437.50px;top:804.50px;width:71.00px;height:19.80px;background:#141c23;border:1px solid #3a464f;border-radius:3px"></div>
<div style="left:1458.80px;top:805.00px;width:0.80px;height:18.80px;background:#3a464f"></div>
<div style="left:1511.30px;top:809.50px;width:1.60px;height:2.20px;background:#c8d0d6"></div>
<div style="left:1511.30px;top:813.50px;width:1.60px;height:2.20px;background:#c8d0d6"></div>
<div style="left:1511.30px;top:817.50px;width:1.60px;height:2.20px;background:#c8d0d6"></div>
<div style="left:1518.20px;top:804.50px;width:15.50px;height:19.80px;background:#1e2b35;border:1px solid #3d4a54;border-radius:3px"></div>
<svg style="position:absolute;left:1520.20px;top:808.50px;" width="11.50" height="11.50" viewBox="0 0 11.5 11.5"><g transform="translate(5.75,5.75)"><rect x="-1.2" y="-5.25" width="2.4" height="10.5" fill="#eee" transform="rotate(0)"/><rect x="-1.2" y="-5.25" width="2.4" height="10.5" fill="#eee" transform="rotate(45)"/><rect x="-1.2" y="-5.25" width="2.4" height="10.5" fill="#eee" transform="rotate(90)"/><rect x="-1.2" y="-5.25" width="2.4" height="10.5" fill="#eee" transform="rotate(135)"/><rect x="-1.2" y="-5.25" width="2.4" height="10.5" fill="#eee" transform="rotate(180)"/><rect x="-1.2" y="-5.25" width="2.4" height="10.5" fill="#eee" transform="rotate(225)"/><rect x="-1.2" y="-5.25" width="2.4" height="10.5" fill="#eee" transform="rotate(270)"/><rect x="-1.2" y="-5.25" width="2.4" height="10.5" fill="#eee" transform="rotate(315)"/><circle r="3.7950000000000004" fill="#eee"/><circle r="1.61" fill="#1e2b35"/></g></svg>
</body></html>
